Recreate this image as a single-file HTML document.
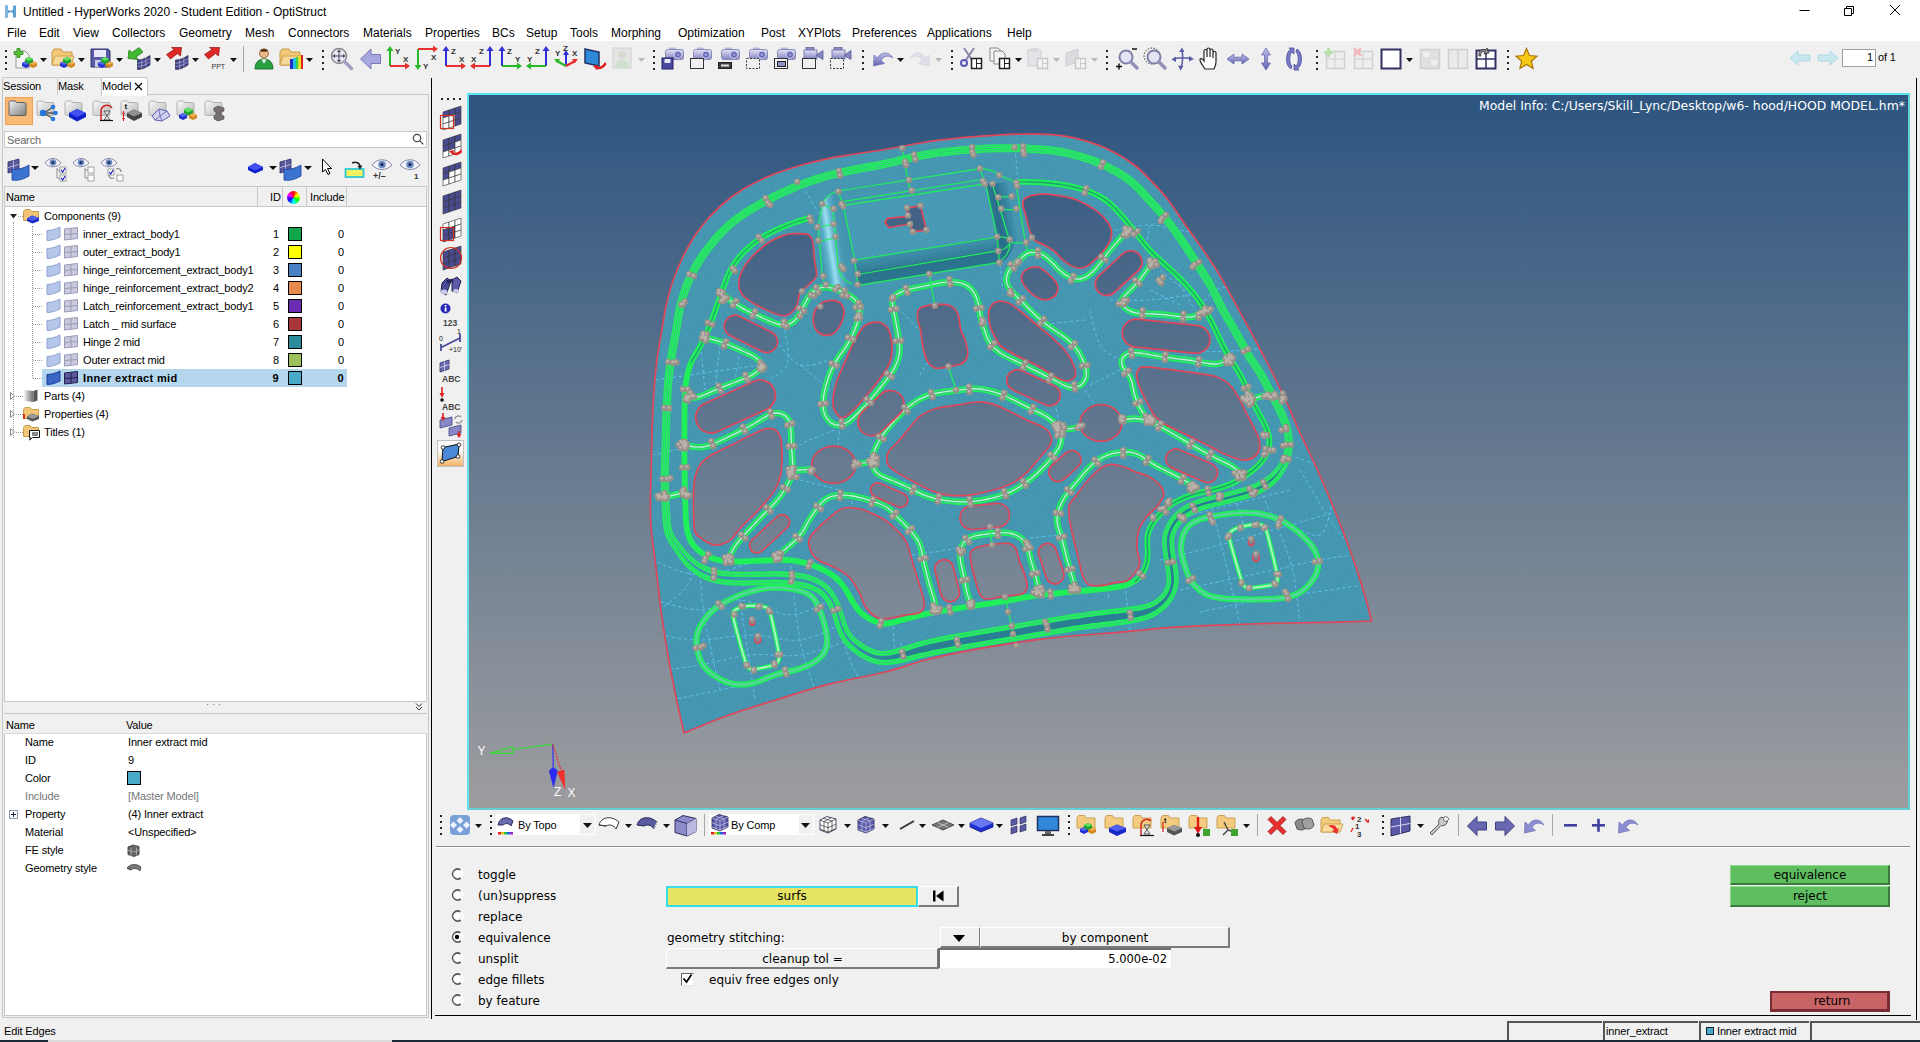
<!DOCTYPE html>
<html lang="en"><head><meta charset="utf-8"><title>Untitled - HyperWorks 2020 - Student Edition - OptiStruct</title>
<style>
*{box-sizing:border-box;margin:0;padding:0}
html,body{width:1920px;height:1042px;overflow:hidden;background:#f0f0f0}
body{position:relative;font-family:"Liberation Sans",sans-serif;font-size:12px;color:#000}
.a{position:absolute}
.t{position:absolute;white-space:pre;line-height:1}
.ui{font-size:12px}
.tk{font-size:11px;letter-spacing:-0.15px}
.hm{font-family:"DejaVu Sans","Liberation Sans",sans-serif;font-size:12px}
svg{position:absolute;overflow:visible}
.btn3d{position:absolute;background:#f0f0f0;border-top:1px solid #fff;border-left:1px solid #fff;border-right:2px solid #7a7a7a;border-bottom:2px solid #7a7a7a;text-align:center}
</style></head><body>
<!-- title bar + menu -->
<div class="a" style="left:0;top:0;width:1920px;height:41px;background:#fff"></div>
<svg style="left:4px;top:5px" width="13" height="13" viewBox="0 0 13 13"><path d="M1 0.5h3v4.2l2.5 1.3 2.5-1.3V0.5h3v12h-3V8.3L6.5 7 4 8.3v4.2H1z" fill="#5f9fd0"/><path d="M1 0.5h3v12H1z" fill="#7db5dd"/></svg>
<div class="t ui" style="left:23px;top:6px">Untitled - HyperWorks 2020 - Student Edition - OptiStruct</div>
<svg style="left:1780px;top:0" width="140" height="22" viewBox="0 0 140 22" fill="none" stroke="#000" stroke-width="1"><path d="M19.5 10.5h10"/><path d="M64.500 8.5h7v7h-7z"/><path d="M66.500 8.500v-2h7v7h-2"/><path d="M110 5l10 10M120 5l-10 10"/></svg>
<div class="t ui" style="left:7px;top:27px">File</div>
<div class="t ui" style="left:39px;top:27px">Edit</div>
<div class="t ui" style="left:73px;top:27px">View</div>
<div class="t ui" style="left:112px;top:27px">Collectors</div>
<div class="t ui" style="left:179px;top:27px">Geometry</div>
<div class="t ui" style="left:245px;top:27px">Mesh</div>
<div class="t ui" style="left:288px;top:27px">Connectors</div>
<div class="t ui" style="left:363px;top:27px">Materials</div>
<div class="t ui" style="left:425px;top:27px">Properties</div>
<div class="t ui" style="left:492px;top:27px">BCs</div>
<div class="t ui" style="left:526px;top:27px">Setup</div>
<div class="t ui" style="left:570px;top:27px">Tools</div>
<div class="t ui" style="left:611px;top:27px">Morphing</div>
<div class="t ui" style="left:678px;top:27px">Optimization</div>
<div class="t ui" style="left:761px;top:27px">Post</div>
<div class="t ui" style="left:798px;top:27px">XYPlots</div>
<div class="t ui" style="left:852px;top:27px">Preferences</div>
<div class="t ui" style="left:927px;top:27px">Applications</div>
<div class="t ui" style="left:1007px;top:27px">Help</div>
<!-- main toolbar -->
<svg style="left:0;top:0" width="0" height="0"><defs><linearGradient id="camg" x1="0" y1="0" x2="0" y2="1"><stop offset="0" stop-color="#e4e4f6"/><stop offset="1" stop-color="#8080c0"/></linearGradient><linearGradient id="undog" x1="0" y1="0" x2="0" y2="1"><stop offset="0" stop-color="#c0c0ec"/><stop offset="1" stop-color="#6464b0"/></linearGradient></defs></svg>
<svg style="left:5px;top:50px" width="2" height="24" viewBox="0 0 2 24"><rect x="0" y="0" width="2" height="2" fill="#222"/><rect x="0" y="6" width="2" height="2" fill="#222"/><rect x="0" y="12" width="2" height="2" fill="#222"/><rect x="0" y="18" width="2" height="2" fill="#222"/></svg>
<svg style="left:13px;top:47px" width="24" height="24" viewBox="0 0 24 24"><path d="M3 4h9l4 4v13H3z" fill="#f4f4f4" stroke="#999" stroke-width="1"/><path d="M4 1.500h3v3h3v3H7v3H4v-3H1v-3h3z" fill="#58c038" stroke="#2a8a18" stroke-width="0.800"/><path d="M9 16l4-2 4 2v3l-4 2-4-2z" fill="#2030d0"/><path d="M9 16l4-2 4 2-4 2z" fill="#5868f0"/><path d="M16 16l4-2 4 2v3l-4 2-4-2z" fill="#d08820"/><path d="M16 16l4-2 4 2-4 2z" fill="#f0b050"/><path d="M12 12l4-2 4 2v3l-4 2-4-2z" fill="#20a030"/><path d="M12 12l4-2 4 2-4 2z" fill="#60e060"/></svg>
<svg style="left:40px;top:58px" width="7" height="4" viewBox="0 0 7 4"><path d="M0 0h7L3.500 4z" fill="#111"/></svg>
<svg style="left:51px;top:47px" width="24" height="24" viewBox="0 0 24 24"><path d="M1 5l2-3h7l2 3h9v13H1z" fill="#f2c878" stroke="#c89848" stroke-width="1"/><path d="M1 18l3-9h19l-3 9z" fill="#f8d898" stroke="#c89848" stroke-width="0.800"/><path d="M9 16l4-2 4 2v3l-4 2-4-2z" fill="#2030d0"/><path d="M9 16l4-2 4 2-4 2z" fill="#5868f0"/><path d="M16 16l4-2 4 2v3l-4 2-4-2z" fill="#d08820"/><path d="M16 16l4-2 4 2-4 2z" fill="#f0b050"/><path d="M12 12l4-2 4 2v3l-4 2-4-2z" fill="#20a030"/><path d="M12 12l4-2 4 2-4 2z" fill="#60e060"/></svg>
<svg style="left:78px;top:58px" width="7" height="4" viewBox="0 0 7 4"><path d="M0 0h7L3.500 4z" fill="#111"/></svg>
<svg style="left:89px;top:47px" width="24" height="24" viewBox="0 0 24 24"><path d="M2 2h17l2 2v16H2z" fill="#5a5aaa" stroke="#30306a" stroke-width="1"/><rect x="5" y="3" width="12" height="7" fill="#e8e8f8"/><rect x="6" y="13" width="10" height="7" fill="#c8c8e0"/><path d="M9 16l4-2 4 2v3l-4 2-4-2z" fill="#2030d0"/><path d="M9 16l4-2 4 2-4 2z" fill="#5868f0"/><path d="M16 16l4-2 4 2v3l-4 2-4-2z" fill="#d08820"/><path d="M16 16l4-2 4 2-4 2z" fill="#f0b050"/><path d="M12 12l4-2 4 2v3l-4 2-4-2z" fill="#20a030"/><path d="M12 12l4-2 4 2-4 2z" fill="#60e060"/></svg>
<svg style="left:116px;top:58px" width="7" height="4" viewBox="0 0 7 4"><path d="M0 0h7L3.500 4z" fill="#111"/></svg>
<svg style="left:127px;top:47px" width="24" height="24" viewBox="0 0 24 24"><path d="M1 11.500L2 3l3 2.500 7-5 4 4.500-7 5 2.500 2.500z" fill="#40b830" stroke="#187010" stroke-width="0.700"/><path d="M10.500 13c4 0 8-1.500 12.500-4.500v9.500c-4.500 3-8.500 4.500-12.500 4.500z" fill="#44448a" stroke="#22224a" stroke-width="0.700"/><path d="M10.500 16.200c4 0 8-1.500 12.500-4.500M10.500 19.400c4 0 8-1.500 12.500-4.500M14.700 12.600v9.500M18.900 11v9.500" stroke="#b4b4dc" stroke-width="0.700" fill="none"/></svg>
<svg style="left:154px;top:58px" width="7" height="4" viewBox="0 0 7 4"><path d="M0 0h7L3.500 4z" fill="#111"/></svg>
<svg style="left:165px;top:47px" width="24" height="24" viewBox="0 0 24 24"><path d="M16.500 0.500L15.500 9l-3-2.500-7 5.500-4-4.500 7.500-5-2.500-2z" fill="#e02828" stroke="#901010" stroke-width="0.700"/><path d="M10.500 13c4 0 8-1.500 12.500-4.500v9.500c-4.500 3-8.500 4.500-12.500 4.500z" fill="#44448a" stroke="#22224a" stroke-width="0.700"/><path d="M10.500 16.200c4 0 8-1.500 12.500-4.500M10.500 19.400c4 0 8-1.500 12.500-4.500M14.700 12.600v9.500M18.900 11v9.500" stroke="#b4b4dc" stroke-width="0.700" fill="none"/></svg>
<svg style="left:192px;top:58px" width="7" height="4" viewBox="0 0 7 4"><path d="M0 0h7L3.500 4z" fill="#111"/></svg>
<svg style="left:203px;top:47px" width="24" height="24" viewBox="0 0 24 24"><path d="M16.500 0.500L15.500 9l-3-2.500-7 5.500-4-4.500 7.500-5-2.500-2z" fill="#e02828" stroke="#901010" stroke-width="0.700"/><text x="8.500" y="22" font-family="Liberation Sans,sans-serif" font-size="7" fill="#333">PPT</text></svg>
<svg style="left:230px;top:58px" width="7" height="4" viewBox="0 0 7 4"><path d="M0 0h7L3.500 4z" fill="#111"/></svg>
<div class="a" style="left:243px;top:46px;width:1px;height:26px;background:#a8a8a8"></div>
<svg style="left:252px;top:47px" width="24" height="24" viewBox="0 0 24 24"><circle cx="12" cy="6.500" r="4.500" fill="#e8b888" stroke="#7a4a20" stroke-width="0.800"/><path d="M8 4c1-3 7-3 8 0-2 1-6 1-8 0z" fill="#5a3010"/><path d="M3 22c0-7 4-10 9-10s9 3 9 10z" fill="#28a040" stroke="#106020" stroke-width="0.800"/><path d="M9.500 12.500l2.500 4 2.500-4z" fill="#fff"/></svg>
<svg style="left:279px;top:47px" width="24" height="24" viewBox="0 0 24 24"><path d="M1 5l2-3h7l2 3h9v13H1z" fill="#f2c878" stroke="#c89848" stroke-width="1"/><path d="M1 18l3-9h19l-3 9z" fill="#f8d898" stroke="#c89848" stroke-width="0.800"/><rect x="11" y="12" width="3" height="10" fill="#2030d0"/><rect x="14" y="11" width="3" height="11" fill="#20c0e0"/><rect x="17" y="10" width="2.500" height="12" fill="#40d040"/><rect x="19.500" y="9" width="2.500" height="13" fill="#f0e020"/><rect x="22" y="8" width="2" height="14" fill="#e02020"/></svg>
<svg style="left:306px;top:58px" width="7" height="4" viewBox="0 0 7 4"><path d="M0 0h7L3.500 4z" fill="#111"/></svg>
<svg style="left:322px;top:50px" width="2" height="24" viewBox="0 0 2 24"><rect x="0" y="0" width="2" height="2" fill="#222"/><rect x="0" y="6" width="2" height="2" fill="#222"/><rect x="0" y="12" width="2" height="2" fill="#222"/><rect x="0" y="18" width="2" height="2" fill="#222"/></svg>
<svg style="left:330px;top:47px" width="24" height="24" viewBox="0 0 24 24"><circle cx="9" cy="9" r="7.500" fill="#e8e8f4" stroke="#888" stroke-width="1.500"/><path d="M14.500 14.500l7 7" stroke="#a0a0c0" stroke-width="3.500" stroke-linecap="round"/><path d="M9 3.500v11M3.500 9h11" stroke="#445" stroke-width="1"/><path d="M9 2.500l-2 2.500h4zM9 15.500l-2-2.500h4zM2.500 9l2.500-2v4zM15.500 9l-2.500-2v4z" fill="#445"/></svg>
<svg style="left:359px;top:47px" width="24" height="24" viewBox="0 0 24 24"><path d="M1.500 12L12 2v5.500h9.500v9H12V22z" fill="#a8a8e0" stroke="#7878b8" stroke-width="1"/></svg>
<svg style="left:386px;top:46px" width="24" height="25" viewBox="0 0 24 25"><path d="M4 20V4" stroke="#28b828" stroke-width="2"/><path d="M4 0l-3.500 5h7z" fill="#28b828"/><path d="M4 20h16" stroke="#e83030" stroke-width="2"/><path d="M24 20l-5-3.500v7z" fill="#e83030"/><text x="9" y="8" font-family="Liberation Sans,sans-serif" font-size="8" font-weight="bold" fill="#333">Y</text><text x="17" y="16" font-family="Liberation Sans,sans-serif" font-size="8" font-weight="bold" fill="#333">X</text></svg>
<svg style="left:414px;top:46px" width="24" height="25" viewBox="0 0 24 25"><path d="M4 3V19" stroke="#28b828" stroke-width="2"/><path d="M4 24l-3.500-5h7z" fill="#28b828"/><path d="M4 3h16" stroke="#e83030" stroke-width="2"/><path d="M24 3l-5-3.500v7z" fill="#e83030"/><text x="9" y="23" font-family="Liberation Sans,sans-serif" font-size="8" font-weight="bold" fill="#333">Y</text><text x="17" y="14" font-family="Liberation Sans,sans-serif" font-size="8" font-weight="bold" fill="#333">X</text></svg>
<svg style="left:442px;top:46px" width="24" height="25" viewBox="0 0 24 25"><path d="M4 20V4" stroke="#3030d8" stroke-width="2"/><path d="M4 0l-3.500 5h7z" fill="#3030d8"/><path d="M4 20h16" stroke="#e83030" stroke-width="2"/><path d="M24 20l-5-3.500v7z" fill="#e83030"/><text x="9" y="8" font-family="Liberation Sans,sans-serif" font-size="8" font-weight="bold" fill="#333">Z</text><text x="17" y="16" font-family="Liberation Sans,sans-serif" font-size="8" font-weight="bold" fill="#333">X</text></svg>
<svg style="left:470px;top:46px" width="24" height="25" viewBox="0 0 24 25"><path d="M20 20V4" stroke="#3030d8" stroke-width="2"/><path d="M20 0l-3.500 5h7z" fill="#3030d8"/><path d="M20 20H4" stroke="#e83030" stroke-width="2"/><path d="M0 20l5-3.500v7z" fill="#e83030"/><text x="9" y="8" font-family="Liberation Sans,sans-serif" font-size="8" font-weight="bold" fill="#333">Z</text><text x="1" y="16" font-family="Liberation Sans,sans-serif" font-size="8" font-weight="bold" fill="#333">X</text></svg>
<svg style="left:498px;top:46px" width="24" height="25" viewBox="0 0 24 25"><path d="M4 20V4" stroke="#3030d8" stroke-width="2"/><path d="M4 0l-3.500 5h7z" fill="#3030d8"/><path d="M4 20h16" stroke="#28b828" stroke-width="2"/><path d="M24 20l-5-3.500v7z" fill="#28b828"/><text x="9" y="8" font-family="Liberation Sans,sans-serif" font-size="8" font-weight="bold" fill="#333">Z</text><text x="17" y="16" font-family="Liberation Sans,sans-serif" font-size="8" font-weight="bold" fill="#333">Y</text></svg>
<svg style="left:526px;top:46px" width="24" height="25" viewBox="0 0 24 25"><path d="M20 20V4" stroke="#3030d8" stroke-width="2"/><path d="M20 0l-3.500 5h7z" fill="#3030d8"/><path d="M20 20H4" stroke="#28b828" stroke-width="2"/><path d="M0 20l5-3.500v7z" fill="#28b828"/><text x="9" y="8" font-family="Liberation Sans,sans-serif" font-size="8" font-weight="bold" fill="#333">Z</text><text x="1" y="16" font-family="Liberation Sans,sans-serif" font-size="8" font-weight="bold" fill="#333">Y</text></svg>
<svg style="left:554px;top:46px" width="24" height="25" viewBox="0 0 24 25"><path d="M12 20V8" stroke="#3030d8" stroke-width="2"/><path d="M12 4l-3 5h6z" fill="#3030d8"/><path d="M12 20L3 15" stroke="#28b828" stroke-width="2.500"/><path d="M0 13l6 0-2.500 4.500z" fill="#28b828"/><path d="M12 20l9-5" stroke="#e83030" stroke-width="2.500"/><path d="M24 13l-6 0 2.500 4.500z" fill="#e83030"/><text x="1" y="10" font-family="Liberation Sans,sans-serif" font-size="8" font-weight="bold" fill="#333">Y</text><text x="9" y="5" font-family="Liberation Sans,sans-serif" font-size="8" font-weight="bold" fill="#333">Z</text><text x="18" y="10" font-family="Liberation Sans,sans-serif" font-size="8" font-weight="bold" fill="#333">X</text></svg>
<svg style="left:583px;top:47px" width="24" height="24" viewBox="0 0 24 24"><path d="M2 2l14 3v14L2 16z" fill="#3088d8" stroke="#203060" stroke-width="1.500"/><path d="M12 20c4 1 8-1 10-5l1.500 2c-2 4-6 6-10.500 5z" fill="#e01818"/><path d="M10 19l5-1-1 5z" fill="#e01818"/></svg>
<svg style="left:611px;top:47px" width="24" height="24" viewBox="0 0 24 24"><rect x="2" y="1" width="18" height="20" fill="#e4e4e4" stroke="#d0d0d0"/><circle cx="11" cy="8" r="3.500" fill="#d8d8d0"/><path d="M4 21c0-6 3-8 7-8s7 2 7 8z" fill="#cfe0cf"/></svg>
<svg style="left:638px;top:58px" width="7" height="4" viewBox="0 0 7 4"><path d="M0 0h7L3.500 4z" fill="#b8b8b8"/></svg>
<svg style="left:653px;top:50px" width="2" height="24" viewBox="0 0 2 24"><rect x="0" y="0" width="2" height="2" fill="#222"/><rect x="0" y="6" width="2" height="2" fill="#222"/><rect x="0" y="12" width="2" height="2" fill="#222"/><rect x="0" y="18" width="2" height="2" fill="#222"/></svg>
<svg style="left:661px;top:47px" width="24" height="24" viewBox="0 0 24 24"><rect x="8" y="0.500" width="7" height="3" rx="1" fill="#b8b8dc"/><rect x="4.500" y="2.500" width="18" height="10" rx="2" fill="url(#camg)" stroke="#7878b0" stroke-width="0.800"/><circle cx="17" cy="7.800" r="3.600" fill="#6a6ab4" stroke="#c4c4e6" stroke-width="1.200"/><circle cx="17" cy="7.800" r="1.400" fill="#9c9cd8"/><rect x="1" y="11" width="11" height="11" fill="#4848a0" stroke="#202060"/><rect x="3.500" y="12" width="6" height="4" fill="#e8e8f8"/></svg>
<svg style="left:689px;top:47px" width="24" height="24" viewBox="0 0 24 24"><rect x="8" y="0.500" width="7" height="3" rx="1" fill="#b8b8dc"/><rect x="4.500" y="2.500" width="18" height="10" rx="2" fill="url(#camg)" stroke="#7878b0" stroke-width="0.800"/><circle cx="17" cy="7.800" r="3.600" fill="#6a6ab4" stroke="#c4c4e6" stroke-width="1.200"/><circle cx="17" cy="7.800" r="1.400" fill="#9c9cd8"/><rect x="1.500" y="11.500" width="13" height="10" fill="#f0f0f0" stroke="#333" stroke-width="1"/></svg>
<svg style="left:717px;top:47px" width="24" height="24" viewBox="0 0 24 24"><rect x="8" y="0.500" width="7" height="3" rx="1" fill="#b8b8dc"/><rect x="4.500" y="2.500" width="18" height="10" rx="2" fill="url(#camg)" stroke="#7878b0" stroke-width="0.800"/><circle cx="17" cy="7.800" r="3.600" fill="#6a6ab4" stroke="#c4c4e6" stroke-width="1.200"/><circle cx="17" cy="7.800" r="1.400" fill="#9c9cd8"/><rect x="1.500" y="15.500" width="13" height="6" fill="#404040" stroke="#222" stroke-width="1"/><rect x="4" y="17.500" width="8" height="2" fill="#e0e0e0"/></svg>
<svg style="left:745px;top:47px" width="24" height="24" viewBox="0 0 24 24"><rect x="8" y="0.500" width="7" height="3" rx="1" fill="#b8b8dc"/><rect x="4.500" y="2.500" width="18" height="10" rx="2" fill="url(#camg)" stroke="#7878b0" stroke-width="0.800"/><circle cx="17" cy="7.800" r="3.600" fill="#6a6ab4" stroke="#c4c4e6" stroke-width="1.200"/><circle cx="17" cy="7.800" r="1.400" fill="#9c9cd8"/><rect x="1.500" y="11.500" width="13" height="10" fill="#f0f0f0" stroke="#333" stroke-width="1" stroke-dasharray="2 1.500"/></svg>
<svg style="left:773px;top:47px" width="24" height="24" viewBox="0 0 24 24"><rect x="8" y="0.500" width="7" height="3" rx="1" fill="#b8b8dc"/><rect x="4.500" y="2.500" width="18" height="10" rx="2" fill="url(#camg)" stroke="#7878b0" stroke-width="0.800"/><circle cx="17" cy="7.800" r="3.600" fill="#6a6ab4" stroke="#c4c4e6" stroke-width="1.200"/><circle cx="17" cy="7.800" r="1.400" fill="#9c9cd8"/><rect x="1.500" y="11.500" width="13" height="10" fill="#f0f0f0" stroke="#333" stroke-width="1"/><rect x="4.500" y="14.500" width="8" height="5" fill="#9090c8" stroke="#222"/></svg>
<svg style="left:801px;top:47px" width="24" height="24" viewBox="0 0 24 24"><rect x="5" y="0.500" width="8" height="3" fill="#8c8cc4" stroke="#5c5c98" stroke-width="0.700"/><rect x="3" y="3" width="13" height="9" fill="url(#camg)" stroke="#6868a8" stroke-width="0.800"/><path d="M16 7.500l6-4v9L16 9z" fill="#8484c0" stroke="#5c5c98" stroke-width="0.800"/><rect x="1.500" y="11.500" width="13" height="10" fill="#f0f0f0" stroke="#333" stroke-width="1"/></svg>
<svg style="left:829px;top:47px" width="24" height="24" viewBox="0 0 24 24"><rect x="5" y="0.500" width="8" height="3" fill="#8c8cc4" stroke="#5c5c98" stroke-width="0.700"/><rect x="3" y="3" width="13" height="9" fill="url(#camg)" stroke="#6868a8" stroke-width="0.800"/><path d="M16 7.500l6-4v9L16 9z" fill="#8484c0" stroke="#5c5c98" stroke-width="0.800"/><rect x="1.500" y="11.500" width="13" height="10" fill="#f0f0f0" stroke="#333" stroke-width="1" stroke-dasharray="2 1.500"/></svg>
<svg style="left:862px;top:50px" width="2" height="24" viewBox="0 0 2 24"><rect x="0" y="0" width="2" height="2" fill="#222"/><rect x="0" y="6" width="2" height="2" fill="#222"/><rect x="0" y="12" width="2" height="2" fill="#222"/><rect x="0" y="18" width="2" height="2" fill="#222"/></svg>
<svg style="left:871px;top:47px" width="24" height="24" viewBox="0 0 24 24"><path d="M2.500 19L3 8l3.500 3C10 4.500 18 4 22 11c-4-3-9.500-2.500-12 2.500l3.500 3z" fill="url(#undog)" stroke="#6c6cb4" stroke-width="0.700"/></svg>
<svg style="left:897px;top:58px" width="7" height="4" viewBox="0 0 7 4"><path d="M0 0h7L3.500 4z" fill="#111"/></svg>
<svg style="left:908px;top:47px" width="24" height="24" viewBox="0 0 24 24"><path d="M21.500 19L21 8l-3.500 3C14 4.500 6 4 2 11c4-3 9.500-2.500 12 2.500l-3.500 3z" fill="#dedee8" stroke="#d4d4dc" stroke-width="0.700"/></svg>
<svg style="left:935px;top:58px" width="7" height="4" viewBox="0 0 7 4"><path d="M0 0h7L3.500 4z" fill="#b8b8b8"/></svg>
<svg style="left:951px;top:50px" width="2" height="24" viewBox="0 0 2 24"><rect x="0" y="0" width="2" height="2" fill="#222"/><rect x="0" y="6" width="2" height="2" fill="#222"/><rect x="0" y="12" width="2" height="2" fill="#222"/><rect x="0" y="18" width="2" height="2" fill="#222"/></svg>
<svg style="left:960px;top:47px" width="24" height="24" viewBox="0 0 24 24"><path d="M4 1l8 12M14 1L6 13" stroke="#8888a8" stroke-width="2"/><circle cx="4" cy="16" r="3" fill="none" stroke="#5858b8" stroke-width="2"/><circle cx="11" cy="17" r="0" /><rect x="11.500" y="11.500" width="10" height="10" fill="#fff" stroke="#222" stroke-width="1.500"/><path d="M16.500 12v9M16.500 16.500h5" stroke="#222" stroke-width="1"/></svg>
<svg style="left:988px;top:47px" width="24" height="24" viewBox="0 0 24 24"><path d="M2 1h8l3 3v10H2z" fill="#f4f4f4" stroke="#888"/><path d="M6 4h8l3 3v10H6z" fill="#f4f4f4" stroke="#888"/><rect x="11.500" y="11.500" width="10" height="10" fill="#fff" stroke="#222" stroke-width="1.500"/><path d="M16.500 12v9M16.500 16.500h5" stroke="#222" stroke-width="1"/></svg>
<svg style="left:1015px;top:58px" width="7" height="4" viewBox="0 0 7 4"><path d="M0 0h7L3.500 4z" fill="#111"/></svg>
<svg style="left:1026px;top:47px" width="24" height="24" viewBox="0 0 24 24"><rect x="2" y="3" width="13" height="16" fill="#e4e4e8" stroke="#d0d0d4"/><rect x="5" y="1" width="7" height="4" fill="#d8d8dc"/><rect x="11.500" y="11.500" width="10" height="10" fill="#f4f4f4" stroke="#c8c8c8" stroke-width="1.500"/><path d="M16.500 12v9M16.500 16.500h5" stroke="#c8c8c8" stroke-width="1"/></svg>
<svg style="left:1053px;top:58px" width="7" height="4" viewBox="0 0 7 4"><path d="M0 0h7L3.500 4z" fill="#b8b8b8"/></svg>
<svg style="left:1064px;top:47px" width="24" height="24" viewBox="0 0 24 24"><path d="M2 6l12-4v13L2 19z" fill="#dcdce0" stroke="#d0d0d4"/><rect x="11.500" y="11.500" width="10" height="10" fill="#f4f4f4" stroke="#c8c8c8" stroke-width="1.500"/><path d="M16.500 12v9M16.500 16.500h5" stroke="#c8c8c8" stroke-width="1"/></svg>
<svg style="left:1091px;top:58px" width="7" height="4" viewBox="0 0 7 4"><path d="M0 0h7L3.500 4z" fill="#b8b8b8"/></svg>
<svg style="left:1106px;top:50px" width="2" height="24" viewBox="0 0 2 24"><rect x="0" y="0" width="2" height="2" fill="#222"/><rect x="0" y="6" width="2" height="2" fill="#222"/><rect x="0" y="12" width="2" height="2" fill="#222"/><rect x="0" y="18" width="2" height="2" fill="#222"/></svg>
<svg style="left:1115px;top:47px" width="24" height="24" viewBox="0 0 24 24"><circle cx="11" cy="10" r="6.500" fill="#e4e4f4" stroke="#8080a8" stroke-width="2"/><path d="M16 15l6 6" stroke="#9090b8" stroke-width="3.500" stroke-linecap="round"/><path d="M17 2h5" stroke="#111" stroke-width="1.500"/><path d="M1 19.500h6M4 16.500v6" stroke="#111" stroke-width="1.500"/></svg>
<svg style="left:1143px;top:47px" width="24" height="24" viewBox="0 0 24 24"><circle cx="9" cy="9" r="8" fill="none" stroke="#333" stroke-width="1" stroke-dasharray="1.500 1.500"/><circle cx="11" cy="10" r="6.500" fill="#e4e4f4" stroke="#8080a8" stroke-width="2"/><path d="M16 15l6 6" stroke="#9090b8" stroke-width="3.500" stroke-linecap="round"/></svg>
<svg style="left:1171px;top:47px" width="24" height="24" viewBox="0 0 24 24"><path d="M11 3c1 6 1 12-1 18M2 12c6-1.500 13-1.500 19 0" stroke="#5c5ca4" stroke-width="1.600" fill="none"/><path d="M11 0.500l-3 4.500h5.500zM9.500 23.500l-2.500-5 5.500 0.500zM0.500 12.500l4.500-3 0 5.500zM23 12l-5-3 0 5.500z" fill="#5c5ca4"/></svg>
<svg style="left:1199px;top:47px" width="24" height="24" viewBox="0 0 24 24"><path d="M6 22c-2-3-5-7-5-9s2-2 4 1V4c0-2 3-2 3 0v6V2.500c0-2 3-2 3 0V10 3.500c0-2 3-2 3 0V11 6c0-2 3-2 3 0v9c0 3-1 5-2 7z" fill="#fff" stroke="#222" stroke-width="1.200"/></svg>
<svg style="left:1226px;top:47px" width="24" height="24" viewBox="0 0 24 24"><path d="M1 12l7-5v3.200h8V7l7 5-7 5v-3.200H8V17z" fill="url(#undog)" stroke="#5c5ca8" stroke-width="0.700"/></svg>
<svg style="left:1254px;top:47px" width="24" height="24" viewBox="0 0 24 24"><path d="M12 1L7.500 8h3v8h-3l4.500 7 4.500-7h-3V8h3z" fill="url(#undog)" stroke="#5c5ca8" stroke-width="0.700"/></svg>
<svg style="left:1282px;top:47px" width="24" height="24" viewBox="0 0 24 24"><path d="M9 2C3 5 3 19 9 22l1-3c-3-2-3-12 0-14l2 2V1H7z" fill="#7878c8" stroke="#5050a0" stroke-width="0.800"/><path d="M15 22c6-3 6-17 0-20l-1 3c3 2 3 12 0 14l-2-2v6h5z" fill="#7878c8" stroke="#5050a0" stroke-width="0.800"/></svg>
<svg style="left:1316px;top:50px" width="2" height="24" viewBox="0 0 2 24"><rect x="0" y="0" width="2" height="2" fill="#222"/><rect x="0" y="6" width="2" height="2" fill="#222"/><rect x="0" y="12" width="2" height="2" fill="#222"/><rect x="0" y="18" width="2" height="2" fill="#222"/></svg>
<svg style="left:1323px;top:47px" width="24" height="24" viewBox="0 0 24 24"><rect x="3.500" y="4.500" width="18" height="17" fill="#eee" stroke="#d0d0d0" stroke-width="1.500"/><path d="M12 5v16M4 12h17" stroke="#d0d0d0" stroke-width="1"/><path d="M4 1h3v3h3v3H7v3H4V7H1V4h3z" fill="#b8e0a8"/></svg>
<svg style="left:1351px;top:47px" width="24" height="24" viewBox="0 0 24 24"><rect x="3.500" y="4.500" width="18" height="17" fill="#eee" stroke="#d0d0d0" stroke-width="1.500"/><path d="M12 5v16M4 12h17" stroke="#d0d0d0" stroke-width="1"/><path d="M2 2l2-1.500 2.500 2.500L9 0.500 11 2 8.500 5 11 8 9 9.500 6.500 7 4 9.500 2 8l2.500-3z" fill="#f0b8b8"/></svg>
<svg style="left:1379px;top:47px" width="24" height="24" viewBox="0 0 24 24"><rect x="2.500" y="2.500" width="19" height="19" fill="#fff" stroke="#303060" stroke-width="2"/></svg>
<svg style="left:1406px;top:58px" width="7" height="4" viewBox="0 0 7 4"><path d="M0 0h7L3.500 4z" fill="#111"/></svg>
<svg style="left:1418px;top:47px" width="24" height="24" viewBox="0 0 24 24"><rect x="2.500" y="2.500" width="19" height="19" fill="#e0e0e0" stroke="#d0d0d0" stroke-width="1.500"/><rect x="5" y="5" width="6" height="5" fill="#f0f0f0"/><rect x="13" y="13" width="6" height="5" fill="#f0f0f0"/></svg>
<svg style="left:1446px;top:47px" width="24" height="24" viewBox="0 0 24 24"><rect x="2.500" y="2.500" width="19" height="19" fill="#eaeaea" stroke="#d0d0d0" stroke-width="1.500"/><path d="M12 3v18" stroke="#d0d0d0" stroke-width="1.500"/></svg>
<svg style="left:1474px;top:47px" width="24" height="24" viewBox="0 0 24 24"><rect x="2.500" y="3.500" width="19" height="18" fill="#fff" stroke="#303060" stroke-width="2"/><path d="M12 4v17M3 12h18" stroke="#303060" stroke-width="1.500"/><path d="M5 9c-1-5 3-8 7-6l1-2 2 5-5 1 1-2c-2-1-5 0-4 4z" fill="#888" stroke="#333" stroke-width="0.800"/></svg>
<svg style="left:1507px;top:50px" width="2" height="24" viewBox="0 0 2 24"><rect x="0" y="0" width="2" height="2" fill="#222"/><rect x="0" y="6" width="2" height="2" fill="#222"/><rect x="0" y="12" width="2" height="2" fill="#222"/><rect x="0" y="18" width="2" height="2" fill="#222"/></svg>
<svg style="left:1515px;top:47px" width="24" height="24" viewBox="0 0 24 24"><path d="M11.500 1.500l3 7 7.500 0.700-5.700 5 1.800 7.300-6.600-4-6.600 4 1.800-7.300-5.700-5 7.500-0.700z" fill="#f8c818" stroke="#a87808" stroke-width="1.200"/></svg>
<svg style="left:1789px;top:49px" width="22" height="18" viewBox="0 0 22 18"><path d="M1 9l8-7v4h12v6H9v4z" fill="#c8e8f0" stroke="#b0d8e4" stroke-width="1"/></svg>
<svg style="left:1817px;top:49px" width="22" height="18" viewBox="0 0 22 18"><path d="M21 9l-8-7v4H1v6h12v4z" fill="#c8e8f0" stroke="#b0d8e4" stroke-width="1"/></svg>
<div class="a" style="left:1842px;top:49px;width:34px;height:18px;background:#fff;border:1px solid #a0a0a0"></div>
<div class="t tk" style="left:1843px;top:52px;width:30px;text-align:right">1</div>
<div class="t tk" style="left:1878px;top:52px">of 1</div>
<!-- left browser panel -->
<div class="a" style="left:2px;top:94px;width:427px;height:924px;border:1px solid #c8c8c8;background:#f0f0f0"></div>
<!-- tabs -->
<div class="a" style="left:2px;top:77px;width:56px;height:18px;border:1px solid #c8c8c8;border-bottom:none;border-radius:2px 2px 0 0;background:#f0f0f0"></div>
<div class="a" style="left:57px;top:77px;width:45px;height:18px;border:1px solid #c8c8c8;border-bottom:none;border-radius:2px 2px 0 0;background:#f0f0f0"></div>
<div class="a" style="left:101px;top:77px;width:47px;height:19px;border:1px solid #c8c8c8;border-bottom:none;border-radius:2px 2px 0 0;background:#fff"></div>
<div class="t tk" style="left:3px;top:81px">Session</div>
<div class="t tk" style="left:58px;top:81px">Mask</div>
<div class="t tk" style="left:102px;top:81px">Model</div>
<svg style="left:134px;top:82px" width="9" height="9" viewBox="0 0 9 9" stroke="#000" stroke-width="1.2"><path d="M1 1l7 7M8 1l-7 7"/></svg>
<!-- selected icon box -->
<div class="a" style="left:5px;top:97px;width:28px;height:28px;background:#f9ba78;border:1px solid #f0a050"></div>
<!-- search -->
<div class="a" style="left:4px;top:131px;width:423px;height:17px;background:#fff;border:1px solid #c8c8c8"></div>
<div class="t tk" style="left:7px;top:135px;color:#666">Search</div>
<svg style="left:412px;top:133px" width="12" height="12" viewBox="0 0 12 12" fill="none" stroke="#444" stroke-width="1.2"><circle cx="5" cy="5" r="3.7"/><path d="M7.800 7.800l3.500 3.500"/></svg>
<!-- tree header -->
<div class="a" style="left:4px;top:186px;width:423px;height:21px;background:#f0f0f0;border:1px solid #c8c8c8"></div>
<div class="a" style="left:257px;top:187px;width:1px;height:19px;background:#c8c8c8"></div>
<div class="a" style="left:282px;top:187px;width:1px;height:19px;background:#c8c8c8"></div>
<div class="a" style="left:306px;top:187px;width:1px;height:19px;background:#c8c8c8"></div>
<div class="a" style="left:346px;top:187px;width:1px;height:19px;background:#c8c8c8"></div>
<div class="t tk" style="left:6px;top:192px">Name</div>
<div class="t tk" style="left:270px;top:192px">ID</div>
<div class="t tk" style="left:310px;top:192px">Include</div>
<div class="a" style="left:287px;top:191px;width:13px;height:13px;border-radius:50%;background:conic-gradient(#f00,#ff0,#0f0,#0ff,#00f,#f0f,#f00)"></div>
<!-- tree body -->
<div class="a" style="left:4px;top:207px;width:423px;height:495px;background:#fff;border:1px solid #c8c8c8;border-top:none"></div>
<!-- browser icons -->
<svg style="left:0;top:0" width="0" height="0"><defs><linearGradient id="gf" x1="0" y1="0" x2="1" y2="1"><stop offset="0" stop-color="#f4f4f4"/><stop offset="1" stop-color="#7c7c7c"/></linearGradient><linearGradient id="gf2" x1="0" y1="0" x2="1" y2="1"><stop offset="0" stop-color="#fafafa"/><stop offset="1" stop-color="#b8b8b8"/></linearGradient></defs></svg>
<svg style="left:8px;top:99px" width="24" height="24" viewBox="0 0 24 24"><path d="M1 3.500q0-1.500 1.500-1.500h5l1 1.500h8q1.500 0 1.500 1.500v10q0 1.500-1.500 1.500h-14q-1.500 0-1.500-1.500z" fill="url(#gf)" stroke="#555" stroke-width="0.900"/></svg>
<svg style="left:36px;top:99px" width="24" height="24" viewBox="0 0 24 24"><path d="M1 3.500q0-1.500 1.500-1.500h5l1 1.500h8q1.500 0 1.500 1.500v10q0 1.500-1.500 1.500h-14q-1.500 0-1.500-1.500z" fill="url(#gf2)" stroke="#aaa" stroke-width="0.900"/><path d="M8 14l9-6M8 14l10 0M8 14l9 6" stroke="#222" stroke-width="1"/><circle cx="7" cy="14" r="3.200" fill="#2878e0"/><circle cx="17" cy="8" r="2.300" fill="#2878e0"/><circle cx="19.500" cy="14" r="2.300" fill="#2878e0"/><circle cx="17" cy="20" r="2.300" fill="#2878e0"/></svg>
<svg style="left:64px;top:99px" width="24" height="24" viewBox="0 0 24 24"><path d="M1 3.500q0-1.500 1.500-1.500h5l1 1.500h8q1.500 0 1.500 1.500v10q0 1.500-1.500 1.500h-14q-1.500 0-1.500-1.500z" fill="url(#gf2)" stroke="#aaa" stroke-width="0.900"/><path d="M5 14l8-4 9 4v4l-9 4.500-8-4.500z" fill="#1020c8"/><path d="M5 14l8-4 9 4-9 4z" fill="#4050f0"/></svg>
<svg style="left:92px;top:99px" width="24" height="24" viewBox="0 0 24 24"><path d="M1 3.500q0-1.500 1.500-1.500h5l1 1.500h8q1.500 0 1.500 1.500v10q0 1.500-1.500 1.500h-14q-1.500 0-1.500-1.500z" fill="url(#gf2)" stroke="#aaa" stroke-width="0.900"/><path d="M9 21V12a6 6 0 0 1 11-3" fill="none" stroke="#d02020" stroke-width="1.500"/><path d="M12 12h6l-3 4.500 3 4.500h-6l3-4.500z" fill="#e8e8e8" stroke="#444" stroke-width="0.800"/><path d="M8 21.500h13" stroke="#111" stroke-width="1.200"/></svg>
<svg style="left:120px;top:99px" width="24" height="24" viewBox="0 0 24 24"><path d="M1 3.500q0-1.500 1.500-1.500h5l1 1.500h8q1.500 0 1.500 1.500v10q0 1.500-1.500 1.500h-14q-1.500 0-1.500-1.500z" fill="url(#gf2)" stroke="#aaa" stroke-width="0.900"/><path d="M7 14l7-3.500 8 3.500v4l-8 4-7-4z" fill="#444"/><path d="M7 14l7-3.500 8 3.500-8 3.500z" fill="#909090"/><path d="M3.500 12v10" stroke="#d02020" stroke-width="1"/><path d="M2 15l1.500-2.500 1.500 2.500zM2 19l1.500 2.500 1.500-2.500z" fill="#d02020"/><text x="4.500" y="10" font-family="Liberation Sans,sans-serif" font-size="8" font-weight="bold" fill="#111">t</text></svg>
<svg style="left:148px;top:99px" width="24" height="24" viewBox="0 0 24 24"><path d="M1 3.500q0-1.500 1.500-1.500h5l1 1.500h8q1.500 0 1.500 1.500v10q0 1.500-1.500 1.500h-14q-1.500 0-1.500-1.500z" fill="url(#gf2)" stroke="#aaa" stroke-width="0.900"/><path d="M4 17l7-7 8 2 3 5-8 5-7-1z" fill="#d0d0f0" stroke="#6060b0" stroke-width="1"/><path d="M11 10l1 7 7-5M12 17l-5 4M12 17l2 5" stroke="#6060b0" stroke-width="0.800" fill="none"/></svg>
<svg style="left:176px;top:99px" width="24" height="24" viewBox="0 0 24 24"><path d="M1 3.500q0-1.500 1.500-1.500h5l1 1.500h8q1.500 0 1.500 1.500v10q0 1.500-1.500 1.500h-14q-1.500 0-1.500-1.500z" fill="url(#gf2)" stroke="#aaa" stroke-width="0.900"/><path d="M3 16l4-2 4 2v3l-4 2-4-2z" fill="#2030d0"/><path d="M3 16l4-2 4 2-4 2z" fill="#5868f0"/><path d="M13 16l4-2 4 2v3l-4 2-4-2z" fill="#d08820"/><path d="M13 16l4-2 4 2-4 2z" fill="#f0b050"/><path d="M8 11l4-2.500 5 2.500v3l-5 2.500-4-2.500z" fill="#20a030"/><path d="M8 11l4-2.500 5 2.500-5 2.500z" fill="#60e060"/></svg>
<svg style="left:204px;top:99px" width="24" height="24" viewBox="0 0 24 24"><path d="M1 3.500q0-1.500 1.500-1.500h5l1 1.500h8q1.500 0 1.500 1.500v10q0 1.500-1.500 1.500h-14q-1.500 0-1.500-1.500z" fill="url(#gf2)" stroke="#aaa" stroke-width="0.900"/><path d="M10 9l4-2 6 2v3l-3 1v3l3 1v3l-6 2-4-2v-3l2-1v-3l-2-1z" fill="#787070" stroke="#444" stroke-width="0.600"/></svg>
<svg style="left:7px;top:156px" width="26" height="26" viewBox="0 0 26 26"><path d="M1 6l11-3v11l-11 3z" fill="#5a5aa0" stroke="#2a2a60" stroke-width="0.800"/><path d="M1 11.500l11-3M6.500 4.500v11" stroke="#c8c8e8" stroke-width="0.800"/><path d="M5 13c5 1 10 0 17-4v11c-7 4-12 5-17 4z" fill="#3b74d0" stroke="#1d3f9a" stroke-width="0.800"/></svg>
<svg style="left:31px;top:166px" width="8" height="4" viewBox="0 0 8 4"><path d="M0 0h8L4 4z" fill="#111"/></svg>
<svg style="left:44px;top:156px" width="26" height="26" viewBox="0 0 26 26"><path d="M1 7c4-6 12-6 16 0-4 5-12 5-16 0z" fill="#f4f4fa" stroke="#8888a8" stroke-width="1"/><circle cx="9" cy="6.500" r="3.300" fill="#7090c8"/><circle cx="9" cy="6.500" r="1.500" fill="#203060"/><path d="M13 12v10M13 14h3M13 22h3" stroke="#888" stroke-width="0.900" fill="none"/><rect x="16" y="11" width="6" height="6" fill="#fff" stroke="#999" stroke-width="0.900"/><path d="M17.2 14l1.500 2 2.500-4" stroke="#1020c0" stroke-width="1.200" fill="none"/><rect x="16" y="19" width="6" height="6" fill="#fff" stroke="#999" stroke-width="0.900"/><path d="M17.2 22l1.500 2 2.500-4" stroke="#1020c0" stroke-width="1.200" fill="none"/></svg>
<svg style="left:72px;top:156px" width="26" height="26" viewBox="0 0 26 26"><path d="M1 7c4-6 12-6 16 0-4 5-12 5-16 0z" fill="#f4f4fa" stroke="#8888a8" stroke-width="1"/><circle cx="9" cy="6.500" r="3.300" fill="#7090c8"/><circle cx="9" cy="6.500" r="1.500" fill="#203060"/><path d="M13 12v10M13 14h3M13 22h3" stroke="#888" stroke-width="0.900" fill="none"/><rect x="16" y="11" width="6" height="6" fill="#fff" stroke="#999" stroke-width="0.900"/><rect x="16" y="19" width="6" height="6" fill="#fff" stroke="#999" stroke-width="0.900"/></svg>
<svg style="left:100px;top:156px" width="26" height="26" viewBox="0 0 26 26"><path d="M1 7c4-6 12-6 16 0-4 5-12 5-16 0z" fill="#f4f4fa" stroke="#8888a8" stroke-width="1"/><circle cx="9" cy="6.500" r="3.300" fill="#7090c8"/><circle cx="9" cy="6.500" r="1.500" fill="#203060"/><rect x="8" y="13" width="6" height="6" fill="#fff" stroke="#999" stroke-width="0.900"/><path d="M9.2 16l1.500 2 2.500-4" stroke="#1020c0" stroke-width="1.200" fill="none"/><rect x="17" y="19" width="6" height="6" fill="#fff" stroke="#999" stroke-width="0.900"/><path d="M16 13c3-1 5 0 5 3M14 22c-3 1-5 0-5-3" stroke="#888" stroke-width="1.300" fill="none"/></svg>
<svg style="left:247px;top:160px" width="18" height="14" viewBox="0 0 18 14"><path d="M1 7l7-4 8 4v3l-8 3.500-7-3.500z" fill="#1020c8"/><path d="M1 7l7-4 8 4-8 3.500z" fill="#4050f0"/></svg>
<svg style="left:269px;top:166px" width="8" height="4" viewBox="0 0 8 4"><path d="M0 0h8L4 4z" fill="#111"/></svg>
<svg style="left:279px;top:156px" width="26" height="26" viewBox="0 0 26 26"><path d="M1 6l11-3v11l-11 3z" fill="#5a5aa0" stroke="#2a2a60" stroke-width="0.800"/><path d="M1 11.500l11-3M6.500 4.500v11" stroke="#c8c8e8" stroke-width="0.800"/><path d="M5 13c5 1 10 0 17-4v11c-7 4-12 5-17 4z" fill="#3b74d0" stroke="#1d3f9a" stroke-width="0.800"/></svg>
<svg style="left:304px;top:166px" width="8" height="4" viewBox="0 0 8 4"><path d="M0 0h8L4 4z" fill="#111"/></svg>
<svg style="left:321px;top:158px" width="12" height="18" viewBox="0 0 12 18"><path d="M1.500 1v13l3-2.500 2.500 5 2-1-2.500-5h4z" fill="#fff" stroke="#000" stroke-width="1"/></svg>
<svg style="left:344px;top:160px" width="22" height="20" viewBox="0 0 22 20"><rect x="1.500" y="9" width="18" height="8" fill="#f4f060" stroke="#30c8d0" stroke-width="1.800"/><path d="M8 3c4-2 8 0 8 4" fill="none" stroke="#222" stroke-width="1.500"/><path d="M13.500 6l2.500 3.500 2.500-4z" fill="#222"/></svg>
<svg style="left:371px;top:157px" width="24" height="24" viewBox="0 0 24 24"><path d="M1 8c5-7 15-7 20 0-5 6-15 6-20 0z" fill="#f4f4fa" stroke="#8888a8" stroke-width="1"/><circle cx="11" cy="7.500" r="3.800" fill="#7090c8"/><circle cx="11" cy="7.500" r="1.700" fill="#203060"/><text x="2" y="22" font-family="Liberation Sans,sans-serif" font-size="9" font-weight="bold" fill="#333">+/–</text></svg>
<svg style="left:399px;top:157px" width="24" height="24" viewBox="0 0 24 24"><path d="M1 8c5-7 15-7 20 0-5 6-15 6-20 0z" fill="#f4f4fa" stroke="#8888a8" stroke-width="1"/><circle cx="11" cy="7.500" r="3.800" fill="#7090c8"/><circle cx="11" cy="7.500" r="1.700" fill="#203060"/><text x="15" y="22" font-family="Liberation Sans,sans-serif" font-size="8" font-weight="bold" fill="#333">1</text></svg>
<!-- tree rows -->
<div class="a" style="left:13px;top:222px;width:0;height:216px;border-left:1px dotted #9a9a9a"></div>
<div class="a" style="left:32px;top:226px;width:0;height:152px;border-left:1px dotted #9a9a9a"></div>
<svg style="left:10px;top:214px" width="7" height="5" viewBox="0 0 7 5"><path d="M0 0h7L3.500 4.500z" fill="#222"/></svg>
<div class="a" style="left:18px;top:216px;width:5px;height:0;border-top:1px dotted #9a9a9a"></div>
<svg style="left:23px;top:208px" width="18" height="16" viewBox="0 0 18 16"><path d="M0.500 3.500l1.500-2h5l1.500 2h7v9h-15z" fill="#f3c677" stroke="#c79a48" stroke-width="1"/><path d="M4 10.500l5-3 7 2.500v3l-6.500 2.500-5.500-2.500z" fill="#1a28c8"/><path d="M4 10.500l5-3 7 2.500-6.500 3z" fill="#4a5cf0"/></svg>
<div class="t tk" style="left:44px;top:211px">Components (9)</div>
<div class="a" style="left:33px;top:234px;width:9px;height:0;border-top:1px dotted #9a9a9a"></div>
<svg style="left:46px;top:226px" width="15" height="16" viewBox="0 0 15 16"><path d="M1 4.500c4 0 8-1 13-3.500v10c-5 2.500-9 3.500-13 3.500z" fill="#b4c6ea" stroke="#8fa4d4" stroke-width="1"/></svg>
<svg style="left:64px;top:227px" width="14" height="14" viewBox="0 0 14 14"><path d="M0.500 2l13-1.500v11L0.500 13z" fill="#cacade" stroke="#9a9ab8" stroke-width="1"/><path d="M7 1.200v11.500M0.500 7.500l13-1" stroke="#9a9ab8" stroke-width="1" fill="none"/></svg>
<div class="t tk" style="left:83px;top:229px;">inner_extract_body1</div>
<div class="t tk" style="left:259px;width:20px;text-align:right;top:229px;">1</div>
<div class="a" style="left:288px;top:227px;width:14px;height:14px;background:#11a64c;border:1px solid #000"></div>
<div class="t tk" style="left:324px;width:20px;text-align:right;top:229px;">0</div>
<div class="a" style="left:33px;top:252px;width:9px;height:0;border-top:1px dotted #9a9a9a"></div>
<svg style="left:46px;top:244px" width="15" height="16" viewBox="0 0 15 16"><path d="M1 4.500c4 0 8-1 13-3.500v10c-5 2.500-9 3.500-13 3.500z" fill="#b4c6ea" stroke="#8fa4d4" stroke-width="1"/></svg>
<svg style="left:64px;top:245px" width="14" height="14" viewBox="0 0 14 14"><path d="M0.500 2l13-1.500v11L0.500 13z" fill="#cacade" stroke="#9a9ab8" stroke-width="1"/><path d="M7 1.200v11.500M0.500 7.500l13-1" stroke="#9a9ab8" stroke-width="1" fill="none"/></svg>
<div class="t tk" style="left:83px;top:247px;">outer_extract_body1</div>
<div class="t tk" style="left:259px;width:20px;text-align:right;top:247px;">2</div>
<div class="a" style="left:288px;top:245px;width:14px;height:14px;background:#ffff00;border:1px solid #000"></div>
<div class="t tk" style="left:324px;width:20px;text-align:right;top:247px;">0</div>
<div class="a" style="left:33px;top:270px;width:9px;height:0;border-top:1px dotted #9a9a9a"></div>
<svg style="left:46px;top:262px" width="15" height="16" viewBox="0 0 15 16"><path d="M1 4.500c4 0 8-1 13-3.500v10c-5 2.500-9 3.500-13 3.500z" fill="#b4c6ea" stroke="#8fa4d4" stroke-width="1"/></svg>
<svg style="left:64px;top:263px" width="14" height="14" viewBox="0 0 14 14"><path d="M0.500 2l13-1.500v11L0.500 13z" fill="#cacade" stroke="#9a9ab8" stroke-width="1"/><path d="M7 1.200v11.500M0.500 7.500l13-1" stroke="#9a9ab8" stroke-width="1" fill="none"/></svg>
<div class="t tk" style="left:83px;top:265px;">hinge_reinforcement_extract_body1</div>
<div class="t tk" style="left:259px;width:20px;text-align:right;top:265px;">3</div>
<div class="a" style="left:288px;top:263px;width:14px;height:14px;background:#4a80c4;border:1px solid #000"></div>
<div class="t tk" style="left:324px;width:20px;text-align:right;top:265px;">0</div>
<div class="a" style="left:33px;top:288px;width:9px;height:0;border-top:1px dotted #9a9a9a"></div>
<svg style="left:46px;top:280px" width="15" height="16" viewBox="0 0 15 16"><path d="M1 4.500c4 0 8-1 13-3.500v10c-5 2.500-9 3.500-13 3.500z" fill="#b4c6ea" stroke="#8fa4d4" stroke-width="1"/></svg>
<svg style="left:64px;top:281px" width="14" height="14" viewBox="0 0 14 14"><path d="M0.500 2l13-1.500v11L0.500 13z" fill="#cacade" stroke="#9a9ab8" stroke-width="1"/><path d="M7 1.200v11.500M0.500 7.500l13-1" stroke="#9a9ab8" stroke-width="1" fill="none"/></svg>
<div class="t tk" style="left:83px;top:283px;">hinge_reinforcement_extract_body2</div>
<div class="t tk" style="left:259px;width:20px;text-align:right;top:283px;">4</div>
<div class="a" style="left:288px;top:281px;width:14px;height:14px;background:#e8884c;border:1px solid #000"></div>
<div class="t tk" style="left:324px;width:20px;text-align:right;top:283px;">0</div>
<div class="a" style="left:33px;top:306px;width:9px;height:0;border-top:1px dotted #9a9a9a"></div>
<svg style="left:46px;top:298px" width="15" height="16" viewBox="0 0 15 16"><path d="M1 4.500c4 0 8-1 13-3.500v10c-5 2.500-9 3.500-13 3.500z" fill="#b4c6ea" stroke="#8fa4d4" stroke-width="1"/></svg>
<svg style="left:64px;top:299px" width="14" height="14" viewBox="0 0 14 14"><path d="M0.500 2l13-1.500v11L0.500 13z" fill="#cacade" stroke="#9a9ab8" stroke-width="1"/><path d="M7 1.200v11.500M0.500 7.500l13-1" stroke="#9a9ab8" stroke-width="1" fill="none"/></svg>
<div class="t tk" style="left:83px;top:301px;">Latch_reinforcement_extract_body1</div>
<div class="t tk" style="left:259px;width:20px;text-align:right;top:301px;">5</div>
<div class="a" style="left:288px;top:299px;width:14px;height:14px;background:#6a2cb0;border:1px solid #000"></div>
<div class="t tk" style="left:324px;width:20px;text-align:right;top:301px;">0</div>
<div class="a" style="left:33px;top:324px;width:9px;height:0;border-top:1px dotted #9a9a9a"></div>
<svg style="left:46px;top:316px" width="15" height="16" viewBox="0 0 15 16"><path d="M1 4.500c4 0 8-1 13-3.500v10c-5 2.500-9 3.500-13 3.500z" fill="#b4c6ea" stroke="#8fa4d4" stroke-width="1"/></svg>
<svg style="left:64px;top:317px" width="14" height="14" viewBox="0 0 14 14"><path d="M0.500 2l13-1.500v11L0.500 13z" fill="#cacade" stroke="#9a9ab8" stroke-width="1"/><path d="M7 1.200v11.500M0.500 7.500l13-1" stroke="#9a9ab8" stroke-width="1" fill="none"/></svg>
<div class="t tk" style="left:83px;top:319px;">Latch _ mid surface</div>
<div class="t tk" style="left:259px;width:20px;text-align:right;top:319px;">6</div>
<div class="a" style="left:288px;top:317px;width:14px;height:14px;background:#a83838;border:1px solid #000"></div>
<div class="t tk" style="left:324px;width:20px;text-align:right;top:319px;">0</div>
<div class="a" style="left:33px;top:342px;width:9px;height:0;border-top:1px dotted #9a9a9a"></div>
<svg style="left:46px;top:334px" width="15" height="16" viewBox="0 0 15 16"><path d="M1 4.500c4 0 8-1 13-3.500v10c-5 2.500-9 3.500-13 3.500z" fill="#b4c6ea" stroke="#8fa4d4" stroke-width="1"/></svg>
<svg style="left:64px;top:335px" width="14" height="14" viewBox="0 0 14 14"><path d="M0.500 2l13-1.500v11L0.500 13z" fill="#cacade" stroke="#9a9ab8" stroke-width="1"/><path d="M7 1.200v11.500M0.500 7.500l13-1" stroke="#9a9ab8" stroke-width="1" fill="none"/></svg>
<div class="t tk" style="left:83px;top:337px;">Hinge 2 mid</div>
<div class="t tk" style="left:259px;width:20px;text-align:right;top:337px;">7</div>
<div class="a" style="left:288px;top:335px;width:14px;height:14px;background:#2a8b9b;border:1px solid #000"></div>
<div class="t tk" style="left:324px;width:20px;text-align:right;top:337px;">0</div>
<div class="a" style="left:33px;top:360px;width:9px;height:0;border-top:1px dotted #9a9a9a"></div>
<svg style="left:46px;top:352px" width="15" height="16" viewBox="0 0 15 16"><path d="M1 4.500c4 0 8-1 13-3.500v10c-5 2.500-9 3.500-13 3.500z" fill="#b4c6ea" stroke="#8fa4d4" stroke-width="1"/></svg>
<svg style="left:64px;top:353px" width="14" height="14" viewBox="0 0 14 14"><path d="M0.500 2l13-1.500v11L0.500 13z" fill="#cacade" stroke="#9a9ab8" stroke-width="1"/><path d="M7 1.200v11.500M0.500 7.500l13-1" stroke="#9a9ab8" stroke-width="1" fill="none"/></svg>
<div class="t tk" style="left:83px;top:355px;">Outer extract mid</div>
<div class="t tk" style="left:259px;width:20px;text-align:right;top:355px;">8</div>
<div class="a" style="left:288px;top:353px;width:14px;height:14px;background:#9cc05c;border:1px solid #000"></div>
<div class="t tk" style="left:324px;width:20px;text-align:right;top:355px;">0</div>
<div class="a" style="left:42px;top:369px;width:305px;height:18px;background:#b4d7ee"></div>
<div class="a" style="left:33px;top:378px;width:9px;height:0;border-top:1px dotted #9a9a9a"></div>
<svg style="left:46px;top:370px" width="15" height="16" viewBox="0 0 15 16"><path d="M1 4.500c4 0 8-1 13-3.500v10c-5 2.500-9 3.500-13 3.500z" fill="#3b66c4" stroke="#1d3f9a" stroke-width="1"/></svg>
<svg style="left:64px;top:371px" width="14" height="14" viewBox="0 0 14 14"><path d="M0.500 2l13-1.500v11L0.500 13z" fill="#5a5a9c" stroke="#20204c" stroke-width="1"/><path d="M7 1.200v11.500M0.500 7.500l13-1" stroke="#20204c" stroke-width="1" fill="none"/></svg>
<div class="t tk" style="left:83px;top:373px;font-weight:bold;letter-spacing:0.35px;">Inner extract mid</div>
<div class="t tk" style="left:259px;width:20px;text-align:right;top:373px;font-weight:bold;letter-spacing:0.35px;">9</div>
<div class="a" style="left:288px;top:371px;width:14px;height:14px;background:#48aac8;border:1px solid #000"></div>
<div class="t tk" style="left:324px;width:20px;text-align:right;top:373px;font-weight:bold;letter-spacing:0.35px;">0</div>
<svg style="left:10px;top:392px" width="5" height="8" viewBox="0 0 5 8"><path d="M0.500 0.500l4 3.500-4 3.500z" fill="#fff" stroke="#888" stroke-width="1"/></svg>
<div class="a" style="left:16px;top:396px;width:7px;height:0;border-top:1px dotted #9a9a9a"></div>
<svg style="left:10px;top:410px" width="5" height="8" viewBox="0 0 5 8"><path d="M0.500 0.500l4 3.500-4 3.500z" fill="#fff" stroke="#888" stroke-width="1"/></svg>
<div class="a" style="left:16px;top:414px;width:7px;height:0;border-top:1px dotted #9a9a9a"></div>
<svg style="left:10px;top:428px" width="5" height="8" viewBox="0 0 5 8"><path d="M0.500 0.500l4 3.500-4 3.500z" fill="#fff" stroke="#888" stroke-width="1"/></svg>
<div class="a" style="left:16px;top:432px;width:7px;height:0;border-top:1px dotted #9a9a9a"></div>
<svg style="left:24px;top:389px" width="14" height="14" viewBox="0 0 14 14"><defs><linearGradient id="pg" x1="0" x2="1"><stop offset="0" stop-color="#e8e8e8"/><stop offset="1" stop-color="#6a6a6a"/></linearGradient></defs><path d="M0.500 1l9 1v11l-9-1z" fill="url(#pg)"/><path d="M9.500 2l4-1.500v11l-4 1.500z" fill="#555"/></svg>
<div class="t tk" style="left:44px;top:391px">Parts (4)</div>
<svg style="left:23px;top:406px" width="18" height="16" viewBox="0 0 18 16"><path d="M0.500 3.500l1.500-2h5l1.500 2h7v9h-15z" fill="#f3c677" stroke="#c79a48" stroke-width="1"/><path d="M4 10.500l5-3 7 2.500v3l-6.500 2.500-5.500-2.500z" fill="#555"/><path d="M4 10.500l5-3 7 2.500-6.500 3z" fill="#999"/><path d="M1 8v5" stroke="#d00" stroke-width="1.500"/></svg>
<div class="t tk" style="left:44px;top:409px">Properties (4)</div>
<svg style="left:23px;top:424px" width="18" height="16" viewBox="0 0 18 16"><path d="M0.500 3.500l1.500-2h5l1.500 2h7v9h-15z" fill="#f3c677" stroke="#c79a48" stroke-width="1"/><path d="M6.500 6.500h10v7h-7l-3 2.500 1-2.500h-1z" fill="#fff" stroke="#111" stroke-width="1"/><path d="M9 9h6M9 11h6" stroke="#111" stroke-width="1"/></svg>
<div class="t tk" style="left:44px;top:427px">Titles (1)</div>
<!-- splitter + property grid -->
<div class="t" style="left:206px;top:700px;font-size:9px;letter-spacing:3px;color:#666">···</div>
<svg style="left:415px;top:703px" width="8" height="8" viewBox="0 0 8 8" fill="none" stroke="#333" stroke-width="1"><path d="M1 0.500l3 3 3-3M1 4l3 3 3-3"/></svg>
<div class="a" style="left:4px;top:713px;width:423px;height:21px;background:#f0f0f0;border:1px solid #c8c8c8;border-left:none;border-right:none"></div>
<div class="a" style="left:4px;top:733px;width:423px;height:283px;background:#fff;border:1px solid #c8c8c8;border-top:1px solid #d8d8d8"></div>
<div class="t tk" style="left:6px;top:720px">Name</div>
<div class="t tk" style="left:126px;top:720px">Value</div>
<div class="t tk" style="left:25px;top:737px">Name</div><div class="t tk" style="left:128px;top:737px">Inner extract mid</div>
<div class="t tk" style="left:25px;top:755px">ID</div><div class="t tk" style="left:128px;top:755px">9</div>
<div class="t tk" style="left:25px;top:773px">Color</div><div class="a" style="left:127px;top:771px;width:14px;height:14px;background:#48aac8;border:1px solid #000"></div>
<div class="t tk" style="left:25px;top:791px;color:#777">Include</div><div class="t tk" style="left:128px;top:791px;color:#777">[Master Model]</div>
<div class="a" style="left:9px;top:810px;width:9px;height:9px;border:1px solid #8a9ab0;background:#fff"></div>
<div class="a" style="left:11px;top:814px;width:5px;height:1px;background:#224"></div><div class="a" style="left:13px;top:812px;width:1px;height:5px;background:#224"></div>
<div class="t tk" style="left:25px;top:809px">Property</div><div class="t tk" style="left:128px;top:809px">(4) Inner extract</div>
<div class="t tk" style="left:25px;top:827px">Material</div><div class="t tk" style="left:128px;top:827px">&lt;Unspecified&gt;</div>
<div class="t tk" style="left:25px;top:845px">FE style</div>
<svg style="left:127px;top:844px" width="13" height="13" viewBox="0 0 13 13"><path d="M1 3l5-2 6 1.500v8l-5 2-6-2z" fill="#666" stroke="#333" stroke-width="0.800"/><path d="M1 6.500l6 1.500 5-2M4 4v8M9.500 3.500v8" stroke="#bbb" stroke-width="0.700" fill="none"/></svg>
<div class="t tk" style="left:25px;top:863px">Geometry style</div>
<svg style="left:126px;top:863px" width="16" height="10" viewBox="0 0 16 10"><path d="M1 5c3-4 9-5 14-1l-1 4c-3-3-7-3-9-1z" fill="#777" stroke="#444" stroke-width="0.800"/><path d="M1 5l4 2" stroke="#444"/></svg>
<!-- status bar -->
<div class="t tk" style="left:4px;top:1026px">Edit Edges</div>
<div class="a" style="left:0;top:1040px;width:1920px;height:2px;background:#dcdcdc"></div>
<div class="a" style="left:0;top:1040px;width:48px;height:2px;background:#1c2a38"></div>
<div class="a" style="left:392px;top:1040px;width:1528px;height:2px;background:#1c2a38"></div>
<!-- viewport -->
<div class="a" style="left:467px;top:93px;width:1443px;height:717px;background:linear-gradient(#2d5580,#9d9d9f);border:2px solid #5fe3ee;border-right-color:#62cfd4;border-bottom-color:#62cfd4"></div>
<svg style="left:0;top:0" width="1920" height="1042" viewBox="0 0 1920 1042">
<defs><clipPath id="vp"><rect x="469" y="95" width="1439" height="713"/></clipPath><linearGradient id="boxl" gradientUnits="userSpaceOnUse" x1="819" y1="246" x2="850" y2="241"><stop offset="0" stop-color="#4396b1"/><stop offset="0.2" stop-color="#58aec8"/><stop offset="0.36" stop-color="#9adff0"/><stop offset="0.52" stop-color="#5db2cb"/><stop offset="0.7" stop-color="#4597b2"/><stop offset="1" stop-color="#4092ad"/></linearGradient><linearGradient id="boxr" gradientUnits="userSpaceOnUse" x1="991" y1="222" x2="1014" y2="218"><stop offset="0" stop-color="#2e7a96"/><stop offset="0.35" stop-color="#286d89"/><stop offset="1" stop-color="#4092ad"/></linearGradient><linearGradient id="boxf" gradientUnits="userSpaceOnUse" x1="925" y1="249" x2="929" y2="274"><stop offset="0" stop-color="#3f91ab"/><stop offset="0.45" stop-color="#347f9a"/><stop offset="0.55" stop-color="#2a718c"/><stop offset="1" stop-color="#2c7690"/></linearGradient><linearGradient id="chan" gradientUnits="userSpaceOnUse" x1="835" y1="0" x2="1180" y2="0"><stop offset="0" stop-color="#3d97ac"/><stop offset="0.2" stop-color="#2a7e93"/><stop offset="1" stop-color="#2a7e93"/></linearGradient><pattern id="mesh" width="2.4" height="2.4" patternUnits="userSpaceOnUse" patternTransform="rotate(-8)"><path d="M0 0.300H2.400M0.300 0V2.400" stroke="#7fd0e4" stroke-width="0.500" opacity="0.220"/></pattern></defs>
<g clip-path="url(#vp)">
<defs><path id="sp" d="M684.0 733.0C682.9 728.0 679.6 714.2 677.2 702.8C674.8 691.4 672.2 678.8 669.6 664.4C667.0 650.0 664.1 632.4 661.9 616.4C659.6 600.4 657.9 582.8 656.1 568.4C654.3 554.0 652.2 540.9 651.3 530.0C650.3 519.1 650.4 513.7 650.4 502.8C650.4 491.9 651.0 477.2 651.3 464.4C651.6 451.6 651.8 438.8 652.3 426.0C652.8 413.2 653.4 398.8 654.2 387.6C655.0 376.4 655.8 368.4 657.1 358.8C658.4 349.2 660.3 339.3 661.9 330.0C663.5 320.7 664.8 311.2 666.7 302.8C668.6 294.4 670.4 288.1 673.4 279.8C676.4 271.5 680.4 261.6 684.9 252.9C689.4 244.2 694.5 235.6 700.3 227.9C706.1 220.2 712.5 213.2 719.5 206.8C726.5 200.4 734.2 194.6 742.5 189.5C750.8 184.4 759.8 180.0 769.4 176.0C779.0 172.0 790.4 168.4 800.0 165.5C809.6 162.6 817.7 160.7 827.0 158.8C836.3 156.9 846.1 155.6 855.8 154.0C865.5 152.4 873.7 151.4 885.0 149.5C896.3 147.6 910.6 144.5 923.4 142.5C936.2 140.5 949.0 139.0 961.8 137.7C974.6 136.4 987.4 135.4 1000.2 134.8C1013.0 134.2 1027.4 133.9 1038.6 134.2C1049.8 134.5 1057.8 135.0 1067.4 136.7C1077.0 138.4 1088.2 141.7 1096.2 144.4C1104.2 147.1 1108.9 149.5 1115.4 153.0C1121.9 156.5 1129.2 161.0 1135.0 165.5C1140.8 170.0 1144.9 174.4 1150.3 180.0C1155.7 185.6 1161.8 191.8 1167.6 199.2C1173.3 206.6 1179.0 215.9 1184.8 224.2C1190.6 232.5 1196.8 240.8 1202.5 249.1C1208.2 257.4 1213.6 265.1 1219.0 274.1C1224.4 283.1 1230.1 293.9 1235.0 302.9C1239.9 311.8 1244.1 319.5 1248.6 327.8C1253.1 336.1 1258.1 345.4 1262.0 352.8C1265.9 360.2 1267.9 363.6 1272.0 372.0C1276.1 380.4 1282.0 392.7 1286.8 403.0C1291.5 413.3 1295.8 423.8 1300.5 434.0C1305.2 444.2 1310.3 454.3 1314.7 464.0C1319.1 473.7 1323.0 482.7 1327.0 492.0C1331.0 501.3 1335.3 512.0 1338.5 520.0C1341.7 528.0 1343.3 532.2 1346.2 540.0C1349.1 547.8 1352.6 557.1 1355.8 566.7C1359.0 576.3 1362.8 588.4 1365.4 597.4C1368.0 606.4 1370.5 617.1 1371.5 621.0C1364.1 621.2 1344.0 622.0 1327.0 622.4C1310.0 622.8 1288.6 622.9 1269.4 623.4C1250.2 623.9 1227.8 624.7 1211.8 625.3C1195.8 625.9 1186.2 626.3 1173.4 627.2C1160.6 628.1 1144.7 629.8 1135.0 630.7C1125.3 631.6 1125.1 631.8 1115.4 632.6C1105.7 633.4 1089.8 634.4 1077.0 635.5C1064.2 636.6 1051.4 637.8 1038.6 639.4C1025.8 641.0 1013.0 643.0 1000.2 645.1C987.4 647.2 974.6 649.3 961.8 651.9C949.0 654.5 936.2 657.1 923.4 660.5C910.6 663.9 901.1 668.0 885.0 672.0C868.9 676.0 844.7 680.1 827.0 684.6C809.3 689.1 795.0 694.0 779.0 699.0C763.0 704.0 746.8 708.6 731.0 714.3C715.2 720.0 691.8 729.9 684.0 733.0ZM794.4 233.7C798.6 233.5 804.8 233.3 807.8 234.6C810.8 235.9 811.5 237.1 812.6 241.4C813.7 245.7 813.9 254.9 814.5 260.6C815.1 266.4 817.5 271.8 816.4 275.9C815.3 280.0 810.5 282.6 807.8 285.5C805.1 288.4 801.9 289.5 800.0 293.0C798.1 296.5 798.5 302.9 796.3 306.6C794.1 310.3 789.9 314.0 786.7 315.3C783.5 316.6 781.8 315.9 777.0 314.3C772.2 312.7 763.6 308.9 757.9 305.7C752.1 302.5 745.7 298.7 742.5 295.0C739.3 291.3 738.7 287.8 738.7 283.6C738.7 279.4 740.3 274.5 742.5 270.0C744.7 265.5 747.8 261.1 752.0 256.7C756.2 252.2 762.4 246.8 767.5 243.3C772.6 239.8 778.3 237.2 782.8 235.6C787.3 234.0 790.2 233.9 794.4 233.7ZM1025.2 198.2C1027.8 196.4 1033.2 194.8 1038.6 194.3C1044.0 193.8 1051.4 194.4 1057.8 195.3C1064.2 196.2 1070.6 197.4 1077.0 200.0C1083.4 202.6 1091.1 206.9 1096.2 210.6C1101.3 214.3 1105.1 218.3 1107.7 222.2C1110.3 226.0 1111.6 229.9 1111.6 233.7C1111.6 237.5 1110.3 241.0 1107.7 245.2C1105.1 249.3 1100.0 254.9 1096.2 258.6C1092.4 262.3 1088.2 265.9 1084.7 267.3C1081.2 268.8 1078.5 268.4 1075.0 267.3C1071.5 266.2 1067.1 263.3 1063.6 260.6C1060.1 257.9 1057.2 253.6 1054.0 251.0C1050.8 248.4 1047.6 247.0 1044.4 245.2C1041.2 243.4 1037.2 242.6 1034.8 240.4C1032.4 238.2 1031.5 235.8 1030.0 231.8C1028.5 227.8 1027.2 220.9 1026.0 216.4C1024.8 211.9 1023.0 207.9 1022.9 204.9C1022.8 201.9 1022.6 200.0 1025.2 198.2ZM1027.0 269.2C1029.8 267.8 1035.1 266.5 1038.6 267.3C1042.1 268.1 1045.2 271.3 1048.2 274.0C1051.2 276.7 1055.4 280.4 1056.8 283.6C1058.2 286.8 1057.9 290.6 1056.8 293.2C1055.7 295.8 1052.7 298.0 1050.0 299.0C1047.3 300.0 1043.7 300.0 1040.5 299.0C1037.3 298.0 1033.9 295.8 1031.0 293.2C1028.1 290.6 1024.8 286.5 1023.2 283.6C1021.7 280.7 1021.1 278.4 1021.7 276.0C1022.3 273.6 1024.2 270.6 1027.0 269.2ZM1114.2 292.5L1138.3 270.5A11.3 11.3 0 0 0 1123.0 253.7L1098.9 275.8A11.3 11.3 0 0 0 1114.2 292.5ZM1133.9 346.8L1195.4 353.3A13.9 13.9 0 0 0 1198.3 325.7L1136.8 319.2A13.9 13.9 0 0 0 1133.9 346.8ZM1136.9 372.6C1137.7 370.1 1138.2 367.5 1142.7 366.9C1147.2 366.3 1155.5 367.9 1163.8 368.8C1172.1 369.8 1184.0 371.3 1192.6 372.6C1201.2 373.9 1209.5 374.6 1215.6 376.5C1221.7 378.4 1225.2 380.7 1229.0 384.2C1232.8 387.7 1235.5 392.2 1238.7 397.6C1241.9 403.0 1245.1 410.4 1248.3 416.8C1251.5 423.2 1256.0 430.9 1257.9 436.0C1259.8 441.1 1260.5 444.0 1259.8 447.5C1259.1 451.0 1256.9 454.9 1254.0 457.0C1251.1 459.1 1247.0 460.3 1242.5 460.0C1238.0 459.7 1233.0 457.6 1227.2 455.2C1221.5 452.8 1215.0 449.1 1208.0 445.6C1201.0 442.1 1192.0 437.5 1184.9 434.0C1177.9 430.5 1170.8 427.7 1165.7 424.5C1160.6 421.3 1157.7 419.4 1154.2 414.9C1150.7 410.4 1147.3 403.1 1144.6 397.6C1141.9 392.2 1139.2 386.4 1137.9 382.2C1136.6 378.0 1136.1 375.2 1136.9 372.6ZM1171.8 467.9L1203.7 481.8A9.8 9.8 0 0 0 1211.6 463.7L1179.6 449.8A9.8 9.8 0 0 0 1171.8 467.9ZM887.9 452.9C889.3 449.4 893.1 447.1 896.5 443.3C899.9 439.5 904.1 434.3 908.0 429.8C911.9 425.3 915.1 419.9 919.6 416.4C924.1 412.9 928.5 410.6 934.9 408.7C941.3 406.8 951.0 406.0 958.0 404.9C965.0 403.8 971.5 402.2 977.2 402.0C983.0 401.8 987.4 402.5 992.5 403.9C997.6 405.3 1002.1 407.9 1007.9 410.6C1013.7 413.3 1021.0 417.3 1027.1 420.2C1033.2 423.1 1040.4 425.2 1044.4 427.9C1048.4 430.6 1050.1 433.7 1051.1 436.6C1052.0 439.5 1051.9 441.9 1050.1 445.2C1048.3 448.5 1044.3 452.2 1040.5 456.7C1036.7 461.2 1031.9 467.6 1027.1 472.1C1022.3 476.6 1017.5 480.6 1011.7 483.6C1005.9 486.6 999.5 488.4 992.5 490.3C985.5 492.2 976.9 494.3 969.5 495.1C962.1 495.9 954.5 495.7 948.4 495.1C942.3 494.5 938.8 493.5 933.0 491.3C927.2 489.1 919.9 484.9 913.8 481.7C907.7 478.5 900.8 475.0 896.5 472.1C892.2 469.2 889.3 467.6 887.9 464.4C886.5 461.2 886.5 456.4 887.9 452.9ZM919.6 308.6C922.5 306.4 929.8 305.2 934.9 304.7C940.0 304.2 946.4 304.1 950.3 305.7C954.1 307.3 956.2 310.2 958.0 314.3C959.8 318.4 959.5 325.5 960.8 330.0C962.1 334.5 964.5 337.3 965.6 341.5C966.7 345.7 968.2 351.3 967.6 355.0C967.0 358.7 965.0 361.7 961.8 363.6C958.6 365.5 952.6 365.7 948.4 366.5C944.2 367.3 940.2 369.0 936.8 368.4C933.4 367.8 930.4 365.8 928.2 362.6C926.0 359.4 924.7 354.6 923.4 349.2C922.1 343.8 921.5 335.2 920.5 330.0C919.5 324.8 917.8 321.8 917.6 318.2C917.5 314.6 916.7 310.9 919.6 308.6ZM989.6 308.6C990.9 305.9 993.4 302.8 996.4 301.8C999.4 300.8 1004.1 301.4 1007.9 302.8C1011.7 304.2 1015.6 307.6 1019.4 310.5C1023.2 313.4 1027.1 316.8 1030.9 320.0C1034.7 323.2 1038.9 326.8 1042.4 329.7C1045.9 332.6 1048.2 334.1 1052.0 337.7C1055.8 341.3 1061.8 346.3 1065.5 351.1C1069.2 355.9 1072.5 362.3 1074.1 366.5C1075.7 370.7 1076.2 373.7 1075.1 376.1C1074.0 378.5 1070.3 380.6 1067.4 380.9C1064.5 381.2 1062.6 380.4 1057.8 378.0C1053.0 375.6 1045.6 370.3 1038.6 366.5C1031.6 362.7 1022.0 358.5 1015.6 355.0C1009.2 351.5 1004.2 349.6 1000.2 345.4C996.2 341.2 993.5 334.5 991.6 330.0C989.7 325.5 989.0 321.8 988.7 318.2C988.4 314.6 988.3 311.3 989.6 308.6ZM1012.3 389.6L1045.8 405.1A10.6 10.6 0 0 0 1054.7 385.9L1021.2 370.4A10.6 10.6 0 0 0 1012.3 389.6ZM1064.2 479.2L1078.1 466.6A9.2 9.2 0 0 0 1065.7 453.0L1051.8 465.6A9.2 9.2 0 0 0 1064.2 479.2ZM973.0 529.5L999.0 526.8A11.8 11.8 0 0 0 996.5 503.3L970.5 506.0A11.8 11.8 0 0 0 973.0 529.5ZM1069.3 505.0C1068.3 508.6 1068.6 513.0 1069.3 518.4C1070.0 523.8 1071.6 530.6 1073.2 537.6C1074.8 544.6 1077.3 554.2 1078.9 560.6C1080.5 567.0 1081.2 572.0 1082.8 576.0C1084.4 580.0 1085.6 583.0 1088.5 584.6C1091.4 586.2 1095.5 585.9 1100.0 585.6C1104.5 585.3 1110.9 583.5 1115.4 582.7C1119.9 581.9 1123.6 582.4 1126.9 580.8C1130.2 579.2 1132.8 576.0 1135.0 573.0C1137.2 570.0 1139.5 567.1 1139.8 562.9C1140.1 558.6 1137.1 553.0 1136.9 547.5C1136.7 542.0 1137.2 535.3 1138.8 530.2C1140.4 525.1 1143.3 520.9 1146.5 516.8C1149.7 512.6 1155.1 509.1 1158.0 505.3C1160.9 501.5 1163.8 497.5 1163.8 493.8C1163.8 490.1 1160.9 486.2 1158.0 483.2C1155.1 480.1 1150.3 477.4 1146.5 475.5C1142.7 473.6 1138.6 473.1 1135.0 471.7C1131.4 470.3 1128.9 468.5 1125.0 467.3C1121.1 466.1 1115.4 464.4 1111.6 464.4C1107.8 464.4 1105.8 464.7 1102.0 467.3C1098.2 469.9 1093.0 474.9 1088.5 479.8C1084.0 484.8 1078.3 492.8 1075.1 497.0C1071.9 501.2 1070.3 501.4 1069.3 505.0ZM716.1 432.2L767.2 409.0A15.4 15.4 0 0 0 754.5 381.0L703.4 404.3A15.4 15.4 0 0 0 716.1 432.2ZM694.5 530.0C693.4 524.2 693.6 511.2 693.6 502.8C693.6 494.4 693.4 486.2 694.5 479.8C695.6 473.4 697.4 468.6 700.3 464.4C703.2 460.2 706.7 458.0 711.8 454.8C716.9 451.6 724.6 448.4 731.0 445.2C737.4 442.0 744.4 438.3 750.2 435.6C756.0 432.9 761.4 429.9 765.6 428.9C769.8 427.9 772.7 428.1 775.2 429.8C777.8 431.6 779.8 434.9 780.9 439.4C782.0 443.9 781.9 450.9 781.9 456.7C781.9 462.5 782.0 468.6 780.9 474.0C779.8 479.4 778.7 483.6 775.2 489.4C771.7 495.2 764.9 502.9 759.8 508.6C754.7 514.4 747.9 520.3 744.4 523.9C740.9 527.5 740.9 527.4 738.7 530.0C736.5 532.6 733.9 537.2 731.0 539.6C728.1 542.0 724.6 543.6 721.4 544.4C718.2 545.2 715.3 545.5 711.8 544.4C708.3 543.3 703.2 540.1 700.3 537.7C697.4 535.3 695.6 535.8 694.5 530.0ZM729.2 335.1L763.0 351.9A10.8 10.8 0 0 0 772.6 332.7L738.8 315.9A10.8 10.8 0 0 0 729.2 335.1ZM813.3 321.4C813.1 318.0 813.6 313.1 815.2 309.9C816.8 306.7 819.7 303.7 822.9 302.2C826.1 300.7 831.2 300.2 834.4 300.7C837.6 301.2 840.5 302.9 842.1 305.1C843.7 307.3 844.3 310.4 844.0 313.8C843.7 317.2 842.1 322.0 840.2 325.3C838.3 328.6 835.4 332.3 832.5 333.9C829.6 335.5 825.6 335.5 822.9 334.9C820.2 334.3 817.8 332.4 816.2 330.1C814.6 327.9 813.5 324.8 813.3 321.4ZM863.2 327.2C866.4 323.8 869.6 323.0 872.8 322.4C876.0 321.8 879.7 322.0 882.4 323.4C885.1 324.8 887.5 327.2 889.1 331.0C890.7 334.8 891.8 341.3 892.0 346.4C892.2 351.5 891.7 357.0 890.1 361.8C888.5 366.6 885.9 370.1 882.4 375.2C878.9 380.3 873.8 386.7 869.0 392.5C864.2 398.3 857.8 405.6 853.6 409.8C849.4 414.0 846.9 416.9 844.0 417.5C841.1 418.1 838.1 416.2 836.3 413.6C834.4 411.0 832.9 407.2 832.9 402.1C832.9 397.0 834.1 389.9 836.3 382.9C838.5 375.8 843.0 366.5 845.9 359.8C848.8 353.1 850.7 348.0 853.6 342.6C856.5 337.2 860.0 330.6 863.2 327.2ZM880.6 432.4L900.6 413.2A13.7 13.7 0 0 0 881.7 393.5L861.7 412.6A13.7 13.7 0 0 0 880.6 432.4ZM874.8 496.6L898.0 506.8A7.1 7.1 0 0 0 903.7 493.8L880.6 483.5A7.1 7.1 0 0 0 874.8 496.6ZM762.1 551.0L787.3 527.7A7.5 7.5 0 0 0 777.1 516.7L751.9 540.0A7.5 7.5 0 0 0 762.1 551.0ZM809.0 540.0C810.0 535.8 814.7 531.7 818.0 528.0C821.3 524.3 825.2 521.2 829.0 518.0C832.8 514.8 837.5 510.7 841.0 509.0C844.5 507.3 845.9 507.4 850.0 507.6C854.1 507.9 859.6 508.4 865.4 510.5C871.2 512.6 879.8 516.8 885.0 520.0C890.2 523.2 893.0 526.3 896.5 529.9C900.0 533.5 903.2 535.3 906.1 541.4C909.0 547.5 911.2 558.1 913.8 566.4C916.4 574.7 919.7 585.0 921.5 591.4C923.3 597.8 924.7 601.3 924.4 604.8C924.1 608.3 923.0 610.7 919.6 612.5C916.2 614.3 910.0 614.3 904.2 615.4C898.4 616.5 889.9 618.8 885.0 619.0C880.1 619.2 878.3 618.4 875.0 616.4C871.7 614.4 868.0 610.6 865.4 606.8C862.8 603.0 862.2 598.2 859.6 593.4C857.0 588.6 853.8 582.2 850.0 578.0C846.2 573.8 841.7 571.3 836.6 568.4C831.5 565.5 823.4 563.3 819.3 560.7C815.1 558.1 813.4 556.5 811.7 553.0C810.0 549.5 808.0 544.2 809.0 540.0ZM970.4 553.0C971.4 550.1 973.5 548.7 977.2 547.2C980.9 545.8 987.4 544.9 992.5 544.3C997.6 543.7 1004.0 542.8 1007.9 543.4C1011.8 544.0 1013.7 545.3 1015.6 548.2C1017.5 551.1 1017.8 556.0 1019.4 560.6C1021.0 565.2 1023.9 571.5 1025.2 576.0C1026.5 580.5 1027.8 584.5 1027.1 587.5C1026.4 590.5 1025.1 592.8 1021.3 594.2C1017.4 595.7 1009.8 595.4 1004.0 596.2C998.2 597.0 990.8 599.3 986.8 599.0C982.8 598.7 981.9 597.4 980.0 594.2C978.1 591.0 976.6 584.8 975.2 579.8C973.8 574.8 972.2 569.0 971.4 564.5C970.6 560.0 969.4 555.9 970.4 553.0ZM935.1 571.2L941.3 595.2A9.3 9.3 0 0 0 959.3 590.6L953.1 566.5A9.3 9.3 0 0 0 935.1 571.2ZM1038.7 554.3L1046.5 577.9A9.0 9.0 0 0 0 1063.6 572.3L1055.7 548.7A9.0 9.0 0 0 0 1038.7 554.3ZM1080.0 423.0A21 18.3 0 1 0 1122.0 423.0A21 18.3 0 1 0 1080.0 423.0ZM811.7 464.8A22 18.6 0 1 0 855.7 464.8A22 18.6 0 1 0 811.7 464.8ZM885.0 222.5L887.3 218.3L908.0 216.4L907.0 207.8L920.5 205.8L926.3 229.8L912.8 231.8L910.0 224.0L888.8 227.5ZM749.7 622.2A2.4000000000000004 3 0 1 0 754.5 622.2A2.4000000000000004 3 0 1 0 749.7 622.2ZM755.1 639.4A2.8000000000000003 3.5 0 1 0 760.7 639.4A2.8000000000000003 3.5 0 1 0 755.1 639.4ZM1248.6 541.8A2.64 3.3 0 1 0 1253.8 541.8A2.64 3.3 0 1 0 1248.6 541.8ZM1253.0 557.1A3.04 3.8 0 1 0 1259.0 557.1A3.04 3.8 0 1 0 1253.0 557.1Z"/></defs>
<clipPath id="sc"><use href="#sp" clip-rule="evenodd"/></clipPath>
<use href="#sp" fill="#4092ad" fill-rule="evenodd"/>
<use href="#sp" fill="url(#mesh)" fill-rule="evenodd"/>
<g clip-path="url(#sc)">
<path d="M652.0 560.0C660.0 562.5 682.0 575.0 700.0 575.0C718.0 575.0 750.0 562.5 760.0 560.0M655.0 600.0C662.5 601.7 685.8 610.0 700.0 610.0C714.2 610.0 725.0 599.2 740.0 600.0C755.0 600.8 775.0 615.0 790.0 615.0C805.0 615.0 823.3 602.5 830.0 600.0M660.0 635.0C666.7 635.8 685.0 640.0 700.0 640.0C715.0 640.0 733.3 635.0 750.0 635.0C766.7 635.0 785.0 641.7 800.0 640.0C815.0 638.3 833.3 627.5 840.0 625.0M664.0 670.0C670.0 669.2 685.7 667.5 700.0 665.0C714.3 662.5 733.3 656.7 750.0 655.0C766.7 653.3 783.3 657.5 800.0 655.0C816.7 652.5 841.7 642.5 850.0 640.0M672.0 700.0C680.0 698.3 703.7 693.3 720.0 690.0C736.3 686.7 761.7 681.7 770.0 680.0M700.0 575.0C700.8 582.5 701.7 600.8 705.0 620.0C708.3 639.2 717.5 678.3 720.0 690.0M740.0 600.0C742.5 616.7 752.5 683.3 755.0 700.0M790.0 560.0C791.7 573.3 795.8 618.3 800.0 640.0C804.2 661.7 812.5 681.7 815.0 690.0M676.0 545.0C678.3 550.8 692.7 569.2 690.0 580.0C687.3 590.8 665.0 605.0 660.0 610.0M830.0 600.0C833.3 610.0 845.0 646.7 850.0 660.0C855.0 673.3 858.3 676.7 860.0 680.0M1170.0 520.0C1180.0 517.5 1210.0 510.0 1230.0 505.0C1250.0 500.0 1280.0 492.5 1290.0 490.0M1160.0 560.0C1170.0 557.5 1198.3 550.8 1220.0 545.0C1241.7 539.2 1270.8 530.5 1290.0 525.0C1309.2 519.5 1327.5 514.2 1335.0 512.0M1180.0 590.0C1191.7 587.5 1226.7 580.0 1250.0 575.0C1273.3 570.0 1303.0 563.3 1320.0 560.0C1337.0 556.7 1346.7 555.8 1352.0 555.0M1200.0 612.0C1210.0 610.0 1238.3 603.7 1260.0 600.0C1281.7 596.3 1313.0 592.5 1330.0 590.0C1347.0 587.5 1356.7 585.8 1362.0 585.0M1210.0 500.0C1212.5 510.0 1220.0 539.2 1225.0 560.0C1230.0 580.8 1237.5 614.2 1240.0 625.0M1260.0 490.0C1265.0 501.7 1283.3 537.8 1290.0 560.0C1296.7 582.2 1298.3 612.5 1300.0 623.0M1300.0 470.0C1305.0 478.3 1322.5 508.3 1330.0 520.0C1337.5 531.7 1342.5 536.7 1345.0 540.0M1290.0 455.0C1296.7 457.5 1323.3 467.5 1330.0 470.0M1230.0 480.0C1232.5 488.3 1242.5 521.7 1245.0 530.0M1290.0 525.0C1295.0 526.7 1313.0 538.3 1320.0 535.0C1327.0 531.7 1330.0 510.0 1332.0 505.0M1115.0 230.0C1120.8 229.2 1137.5 224.7 1150.0 225.0C1162.5 225.3 1183.3 230.8 1190.0 232.0M1150.0 225.0C1149.2 229.2 1145.8 245.8 1145.0 250.0M1160.0 270.0C1166.7 275.0 1190.8 296.7 1200.0 300.0C1209.2 303.3 1207.5 292.8 1215.0 290.0C1222.5 287.2 1240.0 284.2 1245.0 283.0M1150.0 290.0C1155.0 292.5 1175.0 302.5 1180.0 305.0M1170.0 268.0C1174.2 275.0 1190.8 303.0 1195.0 310.0M1110.0 300.0C1116.7 300.0 1136.7 300.8 1150.0 300.0C1163.3 299.2 1183.3 295.8 1190.0 295.0M1090.0 310.0C1091.7 315.8 1095.0 336.7 1100.0 345.0C1105.0 353.3 1116.7 357.5 1120.0 360.0M1085.0 320.0C1077.5 320.8 1047.5 324.2 1040.0 325.0M1200.0 352.0C1208.3 351.7 1238.7 351.2 1250.0 350.0C1261.3 348.8 1265.0 345.8 1268.0 345.0M1180.0 350.0C1183.3 353.7 1196.7 368.3 1200.0 372.0M655.0 380.0C660.8 379.2 672.5 377.5 690.0 375.0C707.5 372.5 748.3 366.7 760.0 365.0M700.0 340.0C700.8 348.3 704.2 381.7 705.0 390.0M720.0 345.0C719.2 352.5 715.8 382.5 715.0 390.0M740.0 350.0C739.2 355.0 735.8 375.0 735.0 380.0M652.0 455.0C657.5 453.8 677.0 449.3 685.0 448.0C693.0 446.7 697.5 447.2 700.0 447.0M775.0 340.0C779.2 344.2 790.8 361.7 800.0 365.0C809.2 368.3 825.0 360.8 830.0 360.0M785.0 330.0C785.3 335.8 791.2 355.8 787.0 365.0C782.8 374.2 764.5 381.7 760.0 385.0M800.0 365.0C805.0 369.2 825.0 385.8 830.0 390.0M835.0 430.0C829.2 432.5 807.5 440.0 800.0 445.0C792.5 450.0 791.7 457.5 790.0 460.0M840.0 425.0C839.7 428.3 838.3 441.7 838.0 445.0M890.0 300.0C896.7 307.5 925.0 332.5 930.0 345.0C935.0 357.5 921.7 370.0 920.0 375.0M985.0 325.0C987.5 320.8 997.5 304.2 1000.0 300.0M1050.0 385.0C1051.7 391.7 1058.3 418.3 1060.0 425.0M1085.0 390.0C1086.7 392.5 1093.3 402.5 1095.0 405.0M1090.0 385.0C1095.0 382.5 1115.0 372.5 1120.0 370.0M850.0 495.0C851.7 500.8 856.7 519.2 860.0 530.0C863.3 540.8 868.3 555.0 870.0 560.0M800.0 480.0C806.7 481.7 833.3 488.3 840.0 490.0M912.0 555.0C920.0 553.8 952.0 549.2 960.0 548.0M1030.0 538.0C1035.0 537.5 1055.0 535.5 1060.0 535.0M905.0 480.0C903.3 483.3 896.7 496.7 895.0 500.0M895.0 660.0C894.7 654.2 893.3 630.8 893.0 625.0M905.0 658.0C904.2 655.0 900.8 643.0 900.0 640.0M1125.0 585.0C1125.8 592.5 1129.2 622.5 1130.0 630.0M1110.0 588.0C1109.7 590.0 1108.3 598.0 1108.0 600.0M835.0 240.0C829.2 230.3 805.8 191.7 800.0 182.0M1015.0 148.0C1015.5 153.7 1017.5 176.3 1018.0 182.0M1000.0 265.0C1000.5 269.2 1002.5 285.8 1003.0 290.0" fill="none" stroke="#5fc4ee" stroke-width="1" stroke-dasharray="3.500 2.500" opacity="0.9"/>
<path d="M822.300 204Q826 194 838.100 191L843.200 205.400 854.700 260.100 858.300 285.300 835.200 290.300 826.600 284.600Q823 282 822.300 274.500L818 227z" fill="url(#boxl)"/>
<path d="M985.700 183.800L1007 182.500 1017 238 1012.300 250Q1008 260 999.400 262.300L997.200 237.100z" fill="url(#boxr)"/>
<path d="M854.700 260.100L997.200 237.100 999.400 262.300 858.300 285.300z" fill="url(#boxf)"/>
<path d="M843.200 205.400L985.700 183.800 997.200 237.100 854.700 260.100z" fill="#4396b1"/>
<path d="M843.200 205.400L985.700 183.800 997.200 237.100 854.700 260.100z" fill="url(#mesh)"/>
<path d="M843.200 205.400L985.700 183.800 997.200 237.100 854.700 260.100z" fill="none" stroke="#1ff05a" stroke-width="1.200"/>
<path d="M835.200 290.300L826.600 284.600Q823 282 822.300 274.500L819.400 241.400 818 227 822.300 204Q826 194 838.100 191L979.900 168.700Q992 169 999.400 175.200L1015.900 182.400 1025.300 242.800 1028 253" fill="none" stroke="#1ff05a" stroke-width="1.200"/>
<path d="M841 201.800L982.100 179.500" fill="none" stroke="#1ff05a" stroke-width="1.200"/>
<path d="M857.500 274.500L998.600 250.700" fill="none" stroke="#1ff05a" stroke-width="1.200"/>
<path d="M858.300 285.300L999.400 262.300" fill="none" stroke="#1ff05a" stroke-width="1.200"/>
<path d="M854.700 260.100L858.300 285.300" fill="none" stroke="#1ff05a" stroke-width="1.200"/>
<path d="M997.200 237.100L999.400 262.300" fill="none" stroke="#1ff05a" stroke-width="1.200"/>
<path d="M833 209.700L838.100 265.900Q840 280 852 284" fill="none" stroke="#1ff05a" stroke-width="1.200"/>
<path d="M838.100 191L843.200 205.400M822.300 204L833 209.700M819.400 241.400L835 238M820 227L833.500 224" fill="none" stroke="#1ff05a" stroke-width="1.200"/>
<path d="M992.200 183.800L1009.400 240Q1012 252 999.400 262.300M997.200 237.100Q1008 236 1012.300 242.800M998.600 250.700Q1010 248 1011 240" fill="none" stroke="#1ff05a" stroke-width="1.200"/>
<path d="M997.900 196.800L1012.300 196.800M1001.500 209.700L1015.900 209.700M985.700 183.800L979.900 168.700M1012.300 242.800L1025.300 242.800" fill="none" stroke="#1ff05a" stroke-width="1.200"/>
<path d="M667.7 528.4C667.4 526.9 667.2 525.2 667.1 523.5C666.9 521.8 666.7 520.0 666.6 518.0C666.4 516.1 666.3 514.1 666.1 512.1C666.0 510.1 665.9 508.1 665.8 506.1C665.7 504.1 665.6 502.1 665.5 500.1C665.4 498.1 665.3 496.1 665.3 494.1C665.2 492.1 665.1 490.1 665.1 488.1C665.0 486.1 665.0 484.1 664.9 482.1C664.9 480.1 664.9 478.1 664.9 476.1C664.9 474.1 665.0 472.1 665.0 470.1C665.0 468.1 665.1 466.1 665.1 464.1C665.2 462.1 665.3 460.1 665.3 458.1C665.4 456.1 665.5 454.1 665.6 452.1C665.6 450.1 665.7 448.1 665.7 446.1C665.8 444.1 665.8 442.1 665.9 440.1C665.9 438.1 666.0 436.1 666.0 434.1C666.1 432.1 666.1 430.1 666.1 428.1C666.2 426.1 666.2 424.1 666.3 422.1C666.3 420.1 666.4 418.1 666.5 416.1C666.5 414.1 666.6 412.1 666.7 410.1C666.8 408.1 666.9 406.1 667.0 404.1C667.1 402.1 667.2 400.1 667.3 398.2C667.4 396.2 667.5 394.2 667.6 392.2C667.8 390.2 667.9 388.2 668.0 386.2C668.2 384.2 668.4 382.2 668.5 380.2C668.7 378.2 668.9 376.2 669.1 374.2C669.3 372.2 669.6 370.3 669.8 368.3C670.1 366.3 670.3 364.3 670.6 362.3C670.9 360.4 671.3 358.4 671.6 356.4C671.9 354.4 672.3 352.5 672.6 350.5C673.0 348.5 673.3 346.6 673.7 344.6C674.0 342.6 674.4 340.7 674.8 338.7C675.1 336.7 675.5 334.8 675.8 332.8C676.2 330.8 676.5 328.9 676.8 326.9C677.1 324.9 677.4 322.9 677.8 321.0C678.1 319.0 678.4 317.0 678.7 315.0C679.0 313.1 679.4 311.1 679.8 309.2C680.2 307.2 680.7 305.3 681.2 303.3C681.7 301.4 682.2 299.5 682.8 297.6C683.4 295.6 684.0 293.7 684.6 291.8C685.3 290.0 685.9 288.1 686.6 286.2C687.4 284.3 688.1 282.5 688.9 280.7C689.7 278.8 690.5 277.0 691.4 275.2C692.2 273.4 693.1 271.6 694.1 269.9C695.0 268.1 696.0 266.4 697.0 264.7C698.0 262.9 699.1 261.3 700.2 259.6C701.3 257.9 702.4 256.2 703.5 254.6C704.7 253.0 705.9 251.4 707.0 249.8C708.2 248.2 709.5 246.6 710.7 245.0C712.0 243.4 713.2 241.9 714.5 240.4C715.8 238.9 717.1 237.4 718.5 235.9C719.8 234.4 721.2 233.0 722.6 231.5C724.0 230.1 725.4 228.7 726.9 227.4C728.4 226.0 729.8 224.7 731.4 223.4C732.9 222.1 734.4 220.9 736.0 219.6C737.6 218.4 739.2 217.2 740.9 216.1C742.5 214.9 744.1 213.8 745.8 212.7C747.5 211.7 749.2 210.6 750.9 209.6C752.6 208.5 754.3 207.5 756.1 206.5C757.8 205.5 759.5 204.5 761.3 203.6C763.0 202.6 764.8 201.6 766.5 200.7C768.3 199.7 770.1 198.8 771.9 197.9C773.6 197.0 775.4 196.1 777.2 195.2C779.0 194.4 780.8 193.5 782.6 192.7C784.5 191.8 786.3 191.0 788.1 190.2C789.9 189.4 791.8 188.6 793.6 187.8C795.4 187.0 797.3 186.3 799.2 185.5C801.0 184.8 802.9 184.1 804.7 183.4C806.6 182.7 808.5 182.0 810.4 181.3C812.3 180.7 814.2 180.1 816.1 179.5C818.0 178.8 819.9 178.3 821.8 177.7C823.7 177.1 825.6 176.6 827.6 176.0C829.5 175.5 831.4 175.0 833.4 174.5C835.3 174.0 837.3 173.6 839.2 173.1C841.1 172.6 843.1 172.2 845.1 171.8C847.0 171.4 849.0 170.9 850.9 170.5C852.9 170.1 854.8 169.7 856.8 169.4C858.8 169.0 860.7 168.6 862.7 168.2C864.7 167.9 866.6 167.5 868.6 167.2C870.6 166.8 872.5 166.5 874.5 166.1C876.5 165.7 878.4 165.3 880.4 165.0C882.4 164.6 884.3 164.2 886.3 163.7C888.2 163.3 890.2 162.9 892.1 162.4C894.1 161.9 896.0 161.5 897.9 161.0C899.9 160.5 901.8 160.0 903.8 159.6C905.7 159.1 907.7 158.6 909.6 158.1C911.6 157.7 913.5 157.2 915.5 156.8C917.4 156.4 919.4 156.0 921.3 155.6C923.3 155.2 925.3 154.9 927.2 154.5C929.2 154.2 931.2 153.9 933.1 153.6C935.1 153.3 937.1 153.0 939.1 152.8C941.1 152.5 943.1 152.3 945.0 152.0C947.0 151.8 949.0 151.6 951.0 151.4C953.0 151.2 955.0 151.0 957.0 150.8C959.0 150.6 961.0 150.4 962.9 150.2C964.9 150.1 966.9 149.9 968.9 149.8C970.9 149.6 972.9 149.5 974.9 149.3C976.9 149.2 978.9 149.1 980.9 149.0C982.9 148.9 984.9 148.8 986.9 148.7C988.9 148.6 990.9 148.6 992.9 148.5C994.9 148.5 996.9 148.4 998.9 148.4C1000.9 148.3 1002.9 148.3 1004.9 148.3C1006.9 148.3 1008.9 148.3 1010.9 148.3C1012.9 148.3 1014.9 148.4 1016.9 148.4C1018.9 148.5 1020.9 148.5 1022.9 148.6C1024.9 148.6 1026.9 148.7 1028.9 148.8C1030.9 148.9 1032.9 149.0 1034.8 149.1C1036.8 149.2 1038.8 149.4 1040.8 149.5C1042.8 149.7 1044.8 149.9 1046.8 150.1C1048.8 150.3 1050.8 150.5 1052.8 150.7C1054.7 151.0 1056.7 151.3 1058.7 151.6C1060.7 151.9 1062.6 152.3 1064.6 152.7C1066.5 153.1 1068.5 153.5 1070.4 154.0C1072.4 154.4 1074.3 154.9 1076.2 155.4C1078.2 156.0 1080.1 156.5 1082.0 157.1C1083.9 157.7 1085.8 158.3 1087.7 158.9C1089.6 159.5 1091.5 160.2 1093.4 160.9C1095.2 161.6 1097.1 162.4 1098.9 163.1C1100.7 163.9 1102.6 164.8 1104.4 165.6C1106.2 166.5 1107.9 167.4 1109.7 168.3C1111.5 169.3 1113.2 170.2 1115.0 171.2C1116.7 172.1 1118.5 173.1 1120.2 174.1C1121.9 175.2 1123.6 176.2 1125.2 177.3C1126.9 178.5 1128.5 179.6 1130.0 180.9C1131.6 182.1 1133.1 183.4 1134.5 184.8C1136.0 186.1 1137.4 187.5 1138.8 189.0C1140.2 190.4 1141.6 191.9 1142.9 193.3C1144.3 194.8 1145.6 196.3 1147.0 197.8C1148.3 199.2 1149.7 200.7 1151.0 202.2C1152.4 203.6 1153.7 205.1 1155.1 206.6C1156.4 208.1 1157.8 209.6 1159.1 211.1C1160.4 212.6 1161.7 214.1 1163.0 215.6C1164.3 217.1 1165.5 218.7 1166.8 220.2C1168.0 221.8 1169.2 223.4 1170.5 225.0C1171.7 226.6 1172.8 228.2 1174.0 229.8C1175.2 231.4 1176.3 233.1 1177.5 234.7C1178.6 236.3 1179.8 238.0 1180.9 239.6C1182.1 241.3 1183.2 242.9 1184.3 244.6C1185.5 246.2 1186.6 247.9 1187.7 249.5C1188.8 251.2 1189.9 252.9 1191.0 254.5C1192.1 256.2 1193.2 257.9 1194.3 259.6C1195.4 261.2 1196.5 262.9 1197.5 264.6C1198.6 266.3 1199.7 268.0 1200.8 269.7C1201.8 271.3 1202.9 273.0 1203.9 274.7C1205.0 276.4 1206.0 278.2 1207.0 279.9C1208.1 281.6 1209.1 283.3 1210.1 285.1C1211.0 286.8 1212.0 288.5 1212.9 290.3C1213.9 292.1 1214.8 293.9 1215.7 295.6C1216.6 297.4 1217.5 299.2 1218.3 301.0C1219.2 302.8 1220.1 304.6 1221.0 306.4C1221.9 308.2 1222.9 309.9 1223.8 311.7C1224.8 313.4 1225.8 315.2 1226.7 316.9C1227.7 318.7 1228.7 320.4 1229.8 322.1C1230.8 323.8 1231.8 325.6 1232.8 327.3C1233.8 329.0 1234.8 330.7 1235.8 332.5C1236.8 334.2 1237.8 336.0 1238.7 337.7C1239.7 339.5 1240.6 341.2 1241.6 343.0C1242.5 344.8 1243.4 346.5 1244.4 348.3C1245.3 350.1 1246.3 351.8 1247.3 353.5C1248.3 355.3 1249.4 356.9 1250.4 358.6C1251.5 360.3 1252.7 361.9 1253.8 363.5C1254.9 365.2 1256.1 366.8 1257.2 368.5C1258.3 370.1 1259.3 371.8 1260.3 373.5C1261.4 375.2 1262.3 377.0 1263.3 378.7C1264.2 380.5 1265.2 382.3 1266.1 384.0C1267.0 385.8 1267.9 387.6 1268.8 389.4C1269.8 391.1 1270.7 392.9 1271.6 394.7C1272.5 396.5 1273.5 398.2 1274.4 400.0C1275.3 401.8 1276.2 403.6 1277.2 405.3C1278.1 407.1 1279.0 408.9 1279.9 410.7C1280.8 412.5 1281.6 414.3 1282.4 416.1C1283.2 417.9 1284.0 419.7 1284.7 421.6C1285.4 423.5 1286.0 425.4 1286.5 427.3C1287.0 429.2 1287.4 431.1 1287.8 433.1C1288.1 435.1 1288.3 437.0 1288.5 439.0C1288.6 441.0 1288.7 443.0 1288.6 444.9C1288.5 446.9 1288.3 448.9 1288.0 450.8C1287.7 452.8 1287.2 454.7 1286.6 456.6C1286.0 458.4 1285.2 460.3 1284.4 462.0C1283.5 463.8 1282.5 465.5 1281.5 467.1C1280.4 468.8 1279.2 470.4 1277.9 471.9C1276.7 473.4 1275.3 474.8 1273.9 476.2C1272.5 477.5 1271.1 478.8 1269.5 480.0C1268.0 481.2 1266.4 482.2 1264.7 483.3C1263.1 484.3 1261.4 485.2 1259.6 486.1C1257.9 486.9 1256.1 487.7 1254.3 488.4C1252.4 489.2 1250.6 489.9 1248.7 490.5C1246.9 491.2 1245.0 491.7 1243.1 492.3C1241.2 492.9 1239.3 493.4 1237.3 493.9C1235.4 494.5 1233.5 494.9 1231.6 495.4C1229.6 495.9 1227.7 496.4 1225.7 496.9C1223.8 497.3 1221.9 497.8 1219.9 498.3C1218.0 498.7 1216.0 499.2 1214.1 499.6C1212.1 500.1 1210.2 500.5 1208.2 501.0C1206.3 501.6 1204.3 502.1 1202.4 502.7C1200.5 503.3 1198.5 503.9 1196.6 504.6C1194.8 505.4 1192.9 506.2 1191.1 507.1C1189.3 508.0 1187.5 509.0 1185.8 510.1C1184.1 511.2 1182.4 512.5 1180.9 513.8C1179.3 515.1 1177.9 516.5 1176.5 518.1C1175.2 519.6 1173.9 521.2 1172.7 522.9C1171.6 524.6 1170.6 526.3 1169.7 528.2C1168.9 530.0 1168.2 531.9 1167.7 533.9C1167.2 535.8 1166.9 537.9 1166.8 539.9C1166.7 541.9 1166.8 543.9 1166.9 546.0C1167.0 548.0 1167.3 550.0 1167.6 552.0C1167.8 554.0 1168.1 556.0 1168.4 558.0C1168.7 560.0 1169.1 561.9 1169.4 563.9C1169.7 565.9 1170.1 567.9 1170.4 569.8C1170.6 571.7 1171.0 573.7 1171.1 575.6C1171.2 577.5 1171.3 579.4 1171.2 581.3C1171.0 583.2 1170.7 585.0 1170.2 586.8C1169.8 588.6 1169.1 590.3 1168.3 592.0C1167.4 593.6 1166.4 595.2 1165.3 596.7C1164.1 598.1 1162.8 599.5 1161.4 600.8C1160.1 602.0 1158.6 603.2 1157.0 604.2C1155.4 605.2 1153.8 606.1 1152.1 606.9C1150.4 607.6 1148.6 608.3 1146.8 608.8C1145.0 609.4 1143.2 609.8 1141.3 610.2C1139.4 610.5 1137.5 610.8 1135.6 611.1C1133.7 611.4 1131.7 611.7 1129.7 611.9C1127.8 612.2 1125.8 612.4 1123.8 612.7C1121.9 612.9 1119.9 613.2 1117.9 613.4C1115.9 613.7 1114.0 613.9 1112.0 614.1C1110.0 614.4 1108.0 614.6 1106.0 614.8C1104.0 615.1 1102.0 615.3 1100.1 615.6C1098.1 615.8 1096.1 616.1 1094.1 616.3C1092.1 616.6 1090.1 616.8 1088.1 617.1C1086.1 617.3 1084.1 617.6 1082.2 617.9C1080.2 618.2 1078.2 618.4 1076.2 618.7C1074.2 619.0 1072.2 619.3 1070.2 619.6C1068.2 619.9 1066.3 620.3 1064.3 620.6C1062.3 620.9 1060.3 621.2 1058.3 621.6C1056.4 621.9 1054.4 622.2 1052.4 622.6C1050.4 622.9 1048.5 623.2 1046.5 623.6C1044.5 623.9 1042.6 624.3 1040.6 624.6C1038.6 624.9 1036.6 625.3 1034.7 625.6C1032.7 626.0 1030.7 626.3 1028.8 626.6C1026.8 627.0 1024.8 627.3 1022.9 627.7C1020.9 628.0 1018.9 628.3 1016.9 628.7C1015.0 629.0 1013.0 629.3 1011.0 629.6C1009.1 630.0 1007.1 630.3 1005.1 630.6C1003.1 630.9 1001.2 631.3 999.2 631.6C997.2 631.9 995.3 632.2 993.3 632.5C991.3 632.9 989.3 633.2 987.4 633.5C985.4 633.8 983.4 634.2 981.4 634.5C979.5 634.8 977.5 635.2 975.5 635.5C973.5 635.8 971.6 636.2 969.6 636.5C967.6 636.8 965.6 637.2 963.7 637.5C961.7 637.9 959.7 638.2 957.7 638.6C955.8 639.0 953.8 639.3 951.8 639.7C949.8 640.1 947.9 640.4 945.9 640.8C943.9 641.2 942.0 641.6 940.0 642.0C938.0 642.4 936.1 642.8 934.1 643.3C932.1 643.7 930.2 644.1 928.2 644.6C926.2 645.1 924.3 645.5 922.3 646.1C920.4 646.6 918.4 647.1 916.5 647.7C914.6 648.2 912.6 648.8 910.7 649.4C908.8 650.0 906.9 650.6 905.0 651.2C903.1 651.8 901.2 652.5 899.3 653.0C897.4 653.6 895.5 654.1 893.6 654.5C891.8 655.0 889.9 655.4 888.0 655.6C886.1 655.9 884.3 656.0 882.4 656.0C880.6 655.9 878.7 655.7 876.9 655.3C875.1 655.0 873.4 654.4 871.6 653.7C869.8 653.0 868.1 652.2 866.4 651.3C864.7 650.4 863.0 649.4 861.3 648.4C859.7 647.3 858.1 646.2 856.5 645.1C855.0 643.9 853.5 642.6 852.1 641.3C850.8 640.0 849.5 638.6 848.3 637.1C847.2 635.5 846.2 633.9 845.3 632.2C844.4 630.5 843.7 628.7 842.9 626.9C842.2 625.1 841.6 623.2 841.0 621.3C840.4 619.4 839.8 617.5 839.2 615.6C838.6 613.7 838.0 611.8 837.3 609.9C836.6 608.0 835.9 606.1 835.1 604.2C834.3 602.4 833.5 600.6 832.4 598.8C831.4 597.1 830.3 595.4 829.0 593.8C827.8 592.2 826.4 590.7 824.9 589.3C823.4 588.0 821.8 586.7 820.1 585.6C818.4 584.5 816.5 583.6 814.7 582.7C812.8 581.9 810.9 581.2 808.9 580.6C807.0 580.0 805.0 579.5 803.0 579.1C801.0 578.7 799.0 578.3 797.0 578.0C795.0 577.7 793.0 577.5 791.0 577.3C789.0 577.1 787.0 577.0 785.0 576.9C783.0 576.7 780.9 576.7 778.9 576.7C776.9 576.6 774.9 576.6 772.9 576.7C770.9 576.7 768.9 576.7 766.9 576.7C764.9 576.8 762.9 576.8 760.9 576.9C758.9 576.9 756.9 576.9 754.9 577.0C752.9 577.0 750.9 577.0 748.9 577.1C746.9 577.1 744.9 577.1 742.9 577.1C740.9 577.1 738.9 577.1 737.0 577.0C735.0 577.0 733.0 576.9 731.0 576.7C729.1 576.6 727.1 576.5 725.1 576.2C723.2 576.0 721.2 575.8 719.3 575.4C717.4 575.1 715.5 574.7 713.6 574.2C711.8 573.7 709.9 573.1 708.1 572.5C706.3 571.8 704.5 571.0 702.8 570.1C701.1 569.3 699.4 568.3 697.8 567.2C696.1 566.2 694.5 565.0 693.0 563.8C691.5 562.6 690.0 561.3 688.6 560.0C687.2 558.6 685.8 557.2 684.5 555.7C683.2 554.2 681.9 552.7 680.7 551.1C679.5 549.6 678.2 548.0 677.1 546.4C675.9 544.8 674.7 543.1 673.7 541.5C672.6 540.0 671.6 538.5 670.8 537.0C670.0 535.5 669.3 534.0 668.8 532.6C668.3 531.2 668.0 529.9 667.7 528.4ZM667.5 528.5C667.2 526.9 667.0 525.3 666.9 523.5C666.7 521.8 666.5 520.0 666.4 518.1C666.2 516.2 666.1 514.1 665.9 512.1C665.8 510.1 665.7 508.1 665.6 506.1C665.5 504.1 665.4 502.1 665.3 500.1C665.2 498.1 665.1 496.1 665.1 494.1C665.0 492.1 664.9 490.1 664.9 488.1C664.8 486.1 664.8 484.1 664.7 482.1C664.7 480.1 664.7 478.1 664.7 476.1C664.7 474.1 664.8 472.1 664.8 470.1C664.8 468.1 664.9 466.1 664.9 464.1C665.0 462.1 665.1 460.1 665.1 458.1C665.2 456.1 665.3 454.1 665.4 452.1C665.4 450.1 665.5 448.1 665.5 446.1C665.6 444.1 665.6 442.1 665.7 440.1C665.7 438.1 665.8 436.1 665.8 434.1C665.9 432.1 665.9 430.1 665.9 428.1C666.0 426.1 666.0 424.1 666.1 422.1C666.1 420.1 666.2 418.1 666.3 416.1C666.3 414.1 666.4 412.1 666.5 410.1C666.6 408.1 666.7 406.1 666.8 404.1C666.9 402.1 667.0 400.1 667.1 398.1C667.2 396.1 667.3 394.1 667.4 392.2C667.6 390.2 667.7 388.2 667.8 386.2C668.0 384.2 668.2 382.2 668.3 380.2C668.5 378.2 668.7 376.2 668.9 374.2C669.1 372.2 669.4 370.2 669.6 368.3C669.9 366.3 670.1 364.3 670.4 362.3C670.7 360.3 671.1 358.4 671.4 356.4C671.7 354.4 672.1 352.4 672.4 350.5C672.8 348.5 673.1 346.5 673.5 344.6C673.9 342.6 674.2 340.6 674.6 338.7C674.9 336.7 675.3 334.7 675.6 332.8C676.0 330.8 676.3 328.8 676.6 326.8C676.9 324.9 677.2 322.9 677.6 320.9C677.9 318.9 678.2 317.0 678.5 315.0C678.9 313.0 679.2 311.1 679.6 309.1C680.0 307.2 680.5 305.2 681.0 303.3C681.5 301.3 682.0 299.4 682.6 297.5C683.2 295.6 683.8 293.7 684.4 291.8C685.1 289.9 685.7 288.0 686.5 286.1C687.2 284.3 687.9 282.4 688.7 280.6C689.5 278.7 690.3 276.9 691.2 275.1C692.0 273.3 692.9 271.5 693.9 269.8C694.8 268.0 695.8 266.3 696.8 264.6C697.9 262.8 698.9 261.1 700.0 259.5C701.1 257.8 702.2 256.1 703.4 254.5C704.5 252.9 705.7 251.2 706.9 249.6C708.1 248.0 709.3 246.5 710.6 244.9C711.8 243.3 713.1 241.8 714.4 240.3C715.7 238.7 717.0 237.2 718.3 235.7C719.7 234.3 721.0 232.8 722.5 231.4C723.9 230.0 725.3 228.6 726.8 227.2C728.2 225.9 729.7 224.5 731.2 223.2C732.8 222.0 734.3 220.7 735.9 219.5C737.5 218.3 739.1 217.1 740.7 215.9C742.4 214.8 744.0 213.7 745.7 212.6C747.4 211.5 749.1 210.4 750.8 209.4C752.5 208.4 754.2 207.3 756.0 206.3C757.7 205.3 759.4 204.4 761.2 203.4C762.9 202.4 764.7 201.5 766.5 200.5C768.2 199.6 770.0 198.6 771.8 197.7C773.6 196.8 775.3 195.9 777.1 195.1C778.9 194.2 780.7 193.3 782.6 192.5C784.4 191.6 786.2 190.8 788.0 190.0C789.9 189.2 791.7 188.4 793.5 187.6C795.4 186.8 797.2 186.1 799.1 185.3C800.9 184.6 802.8 183.9 804.7 183.2C806.6 182.5 808.4 181.8 810.3 181.2C812.2 180.5 814.1 179.9 816.0 179.3C817.9 178.7 819.8 178.1 821.8 177.5C823.7 176.9 825.6 176.4 827.5 175.8C829.5 175.3 831.4 174.8 833.3 174.3C835.3 173.8 837.2 173.4 839.2 172.9C841.1 172.4 843.1 172.0 845.0 171.6C847.0 171.2 848.9 170.7 850.9 170.3C852.8 169.9 854.8 169.5 856.8 169.2C858.7 168.8 860.7 168.4 862.7 168.0C864.6 167.7 866.6 167.3 868.6 167.0C870.5 166.6 872.5 166.3 874.5 165.9C876.4 165.5 878.4 165.2 880.4 164.8C882.3 164.4 884.3 164.0 886.2 163.5C888.2 163.1 890.1 162.7 892.1 162.2C894.0 161.7 896.0 161.3 897.9 160.8C899.8 160.3 901.8 159.8 903.7 159.4C905.7 158.9 907.6 158.4 909.6 158.0C911.5 157.5 913.5 157.0 915.4 156.6C917.4 156.2 919.3 155.8 921.3 155.4C923.3 155.0 925.2 154.7 927.2 154.3C929.2 154.0 931.1 153.7 933.1 153.4C935.1 153.1 937.1 152.8 939.1 152.6C941.0 152.3 943.0 152.1 945.0 151.8C947.0 151.6 949.0 151.4 951.0 151.2C953.0 151.0 955.0 150.8 957.0 150.6C958.9 150.4 960.9 150.2 962.9 150.0C964.9 149.9 966.9 149.7 968.9 149.6C970.9 149.4 972.9 149.3 974.9 149.1C976.9 149.0 978.9 148.9 980.9 148.8C982.9 148.7 984.9 148.6 986.9 148.5C988.9 148.4 990.9 148.4 992.9 148.3C994.9 148.3 996.9 148.2 998.9 148.2C1000.9 148.1 1002.9 148.1 1004.9 148.1C1006.9 148.1 1008.9 148.1 1010.9 148.1C1012.9 148.1 1014.9 148.2 1016.9 148.2C1018.9 148.3 1020.9 148.3 1022.9 148.4C1024.9 148.4 1026.9 148.5 1028.9 148.6C1030.9 148.7 1032.9 148.8 1034.9 148.9C1036.9 149.0 1038.9 149.2 1040.8 149.3C1042.8 149.5 1044.8 149.7 1046.8 149.9C1048.8 150.1 1050.8 150.3 1052.8 150.6C1054.8 150.8 1056.7 151.1 1058.7 151.4C1060.7 151.7 1062.7 152.1 1064.6 152.5C1066.6 152.9 1068.5 153.3 1070.5 153.8C1072.4 154.2 1074.4 154.7 1076.3 155.2C1078.2 155.8 1080.1 156.3 1082.1 156.9C1084.0 157.5 1085.9 158.1 1087.8 158.7C1089.7 159.4 1091.6 160.0 1093.4 160.7C1095.3 161.4 1097.2 162.2 1099.0 163.0C1100.8 163.7 1102.6 164.6 1104.4 165.4C1106.2 166.3 1108.0 167.2 1109.8 168.1C1111.6 169.1 1113.3 170.0 1115.1 171.0C1116.8 172.0 1118.6 172.9 1120.3 174.0C1122.0 175.0 1123.7 176.0 1125.3 177.2C1127.0 178.3 1128.6 179.5 1130.2 180.7C1131.7 182.0 1133.2 183.3 1134.7 184.6C1136.1 186.0 1137.5 187.4 1138.9 188.8C1140.3 190.3 1141.7 191.7 1143.1 193.2C1144.4 194.7 1145.8 196.1 1147.1 197.6C1148.5 199.1 1149.8 200.6 1151.2 202.0C1152.5 203.5 1153.9 205.0 1155.2 206.5C1156.6 207.9 1157.9 209.4 1159.2 210.9C1160.6 212.4 1161.9 213.9 1163.1 215.5C1164.4 217.0 1165.7 218.6 1166.9 220.1C1168.2 221.7 1169.4 223.3 1170.6 224.9C1171.8 226.5 1173.0 228.1 1174.2 229.7C1175.3 231.3 1176.5 233.0 1177.7 234.6C1178.8 236.2 1180.0 237.9 1181.1 239.5C1182.2 241.1 1183.4 242.8 1184.5 244.4C1185.6 246.1 1186.7 247.8 1187.9 249.4C1189.0 251.1 1190.1 252.7 1191.2 254.4C1192.3 256.1 1193.4 257.8 1194.5 259.4C1195.5 261.1 1196.6 262.8 1197.7 264.5C1198.8 266.2 1199.9 267.9 1200.9 269.6C1202.0 271.2 1203.1 272.9 1204.1 274.6C1205.2 276.3 1206.2 278.0 1207.2 279.8C1208.2 281.5 1209.3 283.2 1210.2 285.0C1211.2 286.7 1212.2 288.5 1213.1 290.2C1214.1 292.0 1215.0 293.8 1215.9 295.6C1216.8 297.3 1217.6 299.1 1218.5 300.9C1219.4 302.7 1220.3 304.5 1221.2 306.3C1222.1 308.1 1223.1 309.8 1224.0 311.6C1225.0 313.3 1225.9 315.1 1226.9 316.8C1227.9 318.6 1228.9 320.3 1229.9 322.0C1230.9 323.7 1232.0 325.5 1233.0 327.2C1234.0 328.9 1235.0 330.6 1236.0 332.4C1237.0 334.1 1237.9 335.9 1238.9 337.6C1239.9 339.4 1240.8 341.1 1241.7 342.9C1242.7 344.7 1243.6 346.5 1244.5 348.2C1245.5 350.0 1246.5 351.7 1247.5 353.4C1248.5 355.1 1249.5 356.8 1250.6 358.5C1251.7 360.2 1252.9 361.8 1254.0 363.4C1255.1 365.1 1256.3 366.7 1257.3 368.3C1258.4 370.0 1259.5 371.7 1260.5 373.4C1261.5 375.1 1262.5 376.9 1263.5 378.6C1264.4 380.4 1265.3 382.2 1266.3 383.9C1267.2 385.7 1268.1 387.5 1269.0 389.3C1269.9 391.0 1270.9 392.8 1271.8 394.6C1272.7 396.4 1273.6 398.1 1274.6 399.9C1275.5 401.7 1276.4 403.5 1277.3 405.2C1278.2 407.0 1279.2 408.8 1280.1 410.6C1280.9 412.4 1281.8 414.2 1282.6 416.0C1283.4 417.8 1284.2 419.7 1284.9 421.5C1285.6 423.4 1286.2 425.3 1286.7 427.2C1287.2 429.2 1287.6 431.1 1288.0 433.1C1288.3 435.0 1288.5 437.0 1288.7 439.0C1288.8 441.0 1288.9 443.0 1288.8 445.0C1288.7 446.9 1288.5 448.9 1288.2 450.9C1287.9 452.8 1287.5 454.8 1286.9 456.7C1286.4 458.6 1285.7 460.4 1284.9 462.3C1284.1 464.1 1283.2 465.9 1282.2 467.6C1281.2 469.3 1280.1 471.0 1279.0 472.7C1277.8 474.3 1276.5 475.9 1275.2 477.4C1273.8 478.9 1272.4 480.3 1270.9 481.6C1269.3 482.9 1267.7 484.2 1266.0 485.3C1264.4 486.4 1262.6 487.5 1260.8 488.4C1259.0 489.4 1257.2 490.2 1255.3 491.0C1253.4 491.8 1251.5 492.5 1249.6 493.1C1247.7 493.8 1245.8 494.4 1243.9 495.0C1242.0 495.6 1240.0 496.1 1238.1 496.6C1236.1 497.2 1234.2 497.7 1232.2 498.1C1230.3 498.6 1228.4 499.1 1226.4 499.6C1224.5 500.1 1222.5 500.5 1220.6 501.0C1218.6 501.5 1216.7 501.9 1214.7 502.4C1212.8 502.8 1210.8 503.3 1208.9 503.8C1207.0 504.3 1205.1 504.8 1203.2 505.3C1201.3 505.9 1199.5 506.5 1197.7 507.2C1195.8 508.0 1194.1 508.7 1192.3 509.6C1190.6 510.5 1188.9 511.4 1187.3 512.5C1185.7 513.5 1184.2 514.7 1182.7 515.9C1181.3 517.2 1179.9 518.5 1178.6 519.9C1177.3 521.4 1176.1 522.9 1175.1 524.4C1174.0 526.0 1173.0 527.7 1172.3 529.4C1171.5 531.0 1170.8 532.8 1170.4 534.6C1169.9 536.3 1169.7 538.2 1169.6 540.1C1169.5 541.9 1169.6 543.9 1169.7 545.8C1169.8 547.7 1170.1 549.7 1170.3 551.7C1170.6 553.6 1170.9 555.6 1171.2 557.6C1171.5 559.5 1171.8 561.5 1172.1 563.5C1172.5 565.4 1172.8 567.4 1173.1 569.4C1173.4 571.4 1173.7 573.4 1173.9 575.4C1174.0 577.4 1174.1 579.5 1174.0 581.5C1173.8 583.5 1173.5 585.6 1173.0 587.5C1172.5 589.5 1171.8 591.4 1171.0 593.3C1170.1 595.1 1169.1 596.9 1167.9 598.6C1166.7 600.3 1165.4 601.9 1164.0 603.4C1162.6 604.8 1161.0 606.2 1159.4 607.5C1157.7 608.8 1156.0 610.0 1154.2 611.0C1152.4 612.0 1150.5 612.9 1148.6 613.7C1146.7 614.5 1144.7 615.2 1142.7 615.8C1140.7 616.3 1138.7 616.8 1136.7 617.2C1134.7 617.7 1132.7 618.0 1130.7 618.4C1128.7 618.7 1126.7 619.0 1124.7 619.3C1122.7 619.6 1120.8 619.9 1118.8 620.1C1116.8 620.4 1114.8 620.6 1112.8 620.9C1110.8 621.1 1108.8 621.4 1106.8 621.6C1104.9 621.8 1102.9 622.1 1100.9 622.3C1098.9 622.6 1096.9 622.8 1094.9 623.1C1093.0 623.3 1091.0 623.6 1089.0 623.8C1087.0 624.1 1085.1 624.3 1083.1 624.6C1081.1 624.9 1079.1 625.2 1077.2 625.5C1075.2 625.7 1073.2 626.0 1071.3 626.3C1069.3 626.7 1067.3 627.0 1065.4 627.3C1063.4 627.6 1061.4 627.9 1059.5 628.3C1057.5 628.6 1055.5 628.9 1053.6 629.3C1051.6 629.6 1049.6 629.9 1047.7 630.3C1045.7 630.6 1043.7 631.0 1041.7 631.3C1039.8 631.6 1037.8 632.0 1035.8 632.3C1033.9 632.7 1031.9 633.0 1029.9 633.3C1027.9 633.7 1026.0 634.0 1024.0 634.4C1022.0 634.7 1020.0 635.0 1018.1 635.4C1016.1 635.7 1014.1 636.0 1012.1 636.3C1010.2 636.7 1008.2 637.0 1006.2 637.3C1004.2 637.6 1002.3 638.0 1000.3 638.3C998.3 638.6 996.4 638.9 994.4 639.3C992.4 639.6 990.4 639.9 988.5 640.2C986.5 640.6 984.5 640.9 982.5 641.2C980.6 641.5 978.6 641.9 976.6 642.2C974.7 642.5 972.7 642.9 970.7 643.2C968.8 643.5 966.8 643.9 964.8 644.2C962.9 644.6 960.9 644.9 959.0 645.3C957.0 645.7 955.0 646.0 953.1 646.4C951.1 646.7 949.2 647.1 947.2 647.5C945.2 647.9 943.3 648.3 941.3 648.7C939.4 649.0 937.4 649.4 935.5 649.8C933.5 650.2 931.6 650.6 929.6 651.0C927.7 651.5 925.8 651.9 923.8 652.3C921.9 652.7 920.0 653.2 918.0 653.6C916.1 654.1 914.2 654.5 912.2 655.0C910.3 655.5 908.4 656.0 906.4 656.4C904.5 656.9 902.5 657.4 900.5 657.8C898.5 658.2 896.5 658.7 894.5 659.0C892.5 659.3 890.5 659.7 888.4 659.8C886.4 660.0 884.3 660.0 882.2 659.9C880.2 659.7 878.1 659.4 876.1 658.9C874.1 658.5 872.2 657.8 870.3 657.0C868.4 656.2 866.6 655.2 864.8 654.2C863.0 653.2 861.3 652.1 859.6 650.9C858.0 649.8 856.3 648.6 854.8 647.3C853.2 646.0 851.7 644.6 850.3 643.1C848.9 641.6 847.6 640.1 846.4 638.4C845.3 636.8 844.3 635.0 843.4 633.2C842.5 631.4 841.7 629.5 841.0 627.7C840.3 625.8 839.7 623.9 839.1 621.9C838.5 620.0 837.9 618.1 837.3 616.2C836.7 614.3 836.1 612.4 835.4 610.6C834.7 608.7 834.0 606.9 833.2 605.1C832.4 603.3 831.5 601.6 830.5 600.0C829.5 598.3 828.4 596.8 827.2 595.3C826.0 593.9 824.6 592.5 823.2 591.3C821.7 590.1 820.2 589.0 818.6 588.0C817.0 587.0 815.2 586.2 813.5 585.4C811.7 584.7 809.9 584.1 808.1 583.6C806.2 583.0 804.3 582.6 802.4 582.2C800.5 581.8 798.5 581.5 796.6 581.2C794.6 580.9 792.7 580.7 790.7 580.5C788.7 580.3 786.8 580.2 784.8 580.0C782.8 579.9 780.9 579.9 778.9 579.9C776.9 579.8 774.9 579.8 772.9 579.9C770.9 579.9 768.9 579.9 766.9 579.9C764.9 580.0 762.9 580.0 760.9 580.1C758.9 580.1 756.9 580.1 754.9 580.2C752.9 580.2 750.9 580.2 748.9 580.3C746.9 580.3 744.9 580.3 742.9 580.3C740.9 580.3 738.9 580.3 736.9 580.2C734.9 580.1 732.8 580.1 730.8 579.9C728.8 579.8 726.8 579.6 724.8 579.4C722.8 579.2 720.7 578.9 718.8 578.5C716.8 578.1 714.8 577.7 712.8 577.1C710.9 576.6 708.9 575.9 707.0 575.1C705.2 574.4 703.3 573.5 701.6 572.5C699.8 571.5 698.1 570.4 696.4 569.2C694.8 568.0 693.2 566.7 691.7 565.4C690.2 564.1 688.7 562.6 687.4 561.2C686.0 559.7 684.7 558.1 683.5 556.6C682.2 555.0 681.1 553.4 679.9 551.7C678.7 550.1 677.6 548.5 676.4 546.8C675.3 545.2 674.2 543.4 673.2 541.8C672.2 540.2 671.2 538.7 670.5 537.2C669.7 535.6 669.0 534.1 668.6 532.7C668.1 531.2 667.8 530.0 667.5 528.5Z" fill="url(#chan)" fill-rule="evenodd"/>
<path d="M671.5 527.7C671.3 526.3 671.1 524.8 670.9 523.1C670.8 521.4 670.6 519.6 670.5 517.7C670.3 515.9 670.2 513.8 670.0 511.8C669.9 509.8 669.8 507.9 669.7 505.9C669.6 503.9 669.5 501.9 669.4 499.9C669.3 497.9 669.2 495.9 669.2 494.0C669.1 492.0 669.0 490.0 669.0 488.0C668.9 486.0 668.9 484.0 668.8 482.1C668.8 480.1 668.8 478.1 668.8 476.1C668.8 474.1 668.9 472.2 668.9 470.2C668.9 468.2 669.0 466.2 669.0 464.2C669.1 462.2 669.2 460.2 669.2 458.2C669.3 456.3 669.4 454.2 669.4 452.2C669.5 450.2 669.6 448.2 669.6 446.2C669.7 444.2 669.7 442.2 669.8 440.2C669.8 438.2 669.9 436.2 669.9 434.2C670.0 432.2 670.0 430.2 670.0 428.2C670.1 426.2 670.1 424.2 670.2 422.2C670.2 420.2 670.3 418.2 670.4 416.3C670.4 414.3 670.5 412.3 670.6 410.3C670.7 408.3 670.8 406.3 670.9 404.3C671.0 402.3 671.1 400.4 671.2 398.4C671.3 396.4 671.4 394.4 671.5 392.4C671.7 390.4 671.8 388.5 671.9 386.5C672.1 384.5 672.2 382.5 672.4 380.6C672.6 378.6 672.8 376.6 673.0 374.7C673.2 372.7 673.4 370.7 673.7 368.8C673.9 366.8 674.2 364.9 674.5 362.9C674.8 361.0 675.1 359.0 675.4 357.1C675.8 355.1 676.1 353.1 676.4 351.2C676.8 349.2 677.2 347.3 677.5 345.3C677.9 343.3 678.3 341.4 678.6 339.4C679.0 337.4 679.3 335.4 679.7 333.5C680.0 331.5 680.4 329.5 680.7 327.5C681.0 325.5 681.3 323.5 681.6 321.6C681.9 319.6 682.2 317.6 682.5 315.7C682.9 313.8 683.2 311.9 683.6 310.0C684.0 308.1 684.5 306.2 684.9 304.3C685.4 302.4 686.0 300.5 686.5 298.7C687.1 296.8 687.7 295.0 688.3 293.1C688.9 291.3 689.6 289.4 690.3 287.6C691.0 285.8 691.7 284.0 692.5 282.2C693.2 280.4 694.0 278.6 694.9 276.9C695.7 275.1 696.6 273.4 697.5 271.7C698.4 270.0 699.4 268.3 700.4 266.7C701.4 265.0 702.4 263.3 703.5 261.7C704.5 260.1 705.6 258.4 706.7 256.8C707.9 255.2 709.0 253.7 710.2 252.1C711.3 250.5 712.5 249.0 713.8 247.4C715.0 245.9 716.2 244.4 717.5 242.9C718.8 241.4 720.0 240.0 721.4 238.5C722.7 237.1 724.0 235.7 725.4 234.3C726.7 232.9 728.1 231.5 729.5 230.2C731.0 228.9 732.4 227.6 733.9 226.4C735.4 225.1 736.9 223.9 738.4 222.7C739.9 221.5 741.5 220.4 743.1 219.3C744.7 218.2 746.3 217.1 747.9 216.0C749.6 215.0 751.3 213.9 752.9 212.9C754.6 211.9 756.3 210.9 758.0 209.9C759.7 208.9 761.4 207.9 763.2 207.0C764.9 206.0 766.6 205.1 768.4 204.1C770.1 203.2 771.9 202.3 773.6 201.4C775.4 200.5 777.2 199.6 778.9 198.7C780.7 197.9 782.5 197.0 784.3 196.2C786.1 195.4 787.9 194.5 789.7 193.7C791.5 192.9 793.3 192.2 795.1 191.4C796.9 190.6 798.8 189.9 800.6 189.1C802.4 188.4 804.3 187.7 806.1 187.0C808.0 186.3 809.8 185.7 811.7 185.0C813.5 184.4 815.4 183.8 817.3 183.2C819.1 182.6 821.0 182.0 822.9 181.4C824.8 180.9 826.7 180.3 828.6 179.8C830.5 179.3 832.4 178.8 834.3 178.3C836.2 177.8 838.2 177.3 840.1 176.9C842.0 176.4 843.9 176.0 845.9 175.6C847.8 175.2 849.8 174.8 851.7 174.4C853.7 174.0 855.6 173.6 857.5 173.2C859.5 172.8 861.5 172.4 863.4 172.1C865.4 171.7 867.3 171.4 869.3 171.0C871.3 170.6 873.2 170.3 875.2 169.9C877.2 169.6 879.2 169.2 881.2 168.8C883.1 168.4 885.1 168.0 887.1 167.5C889.1 167.1 891.0 166.7 893.0 166.2C895.0 165.7 896.9 165.2 898.9 164.8C900.8 164.3 902.8 163.8 904.7 163.3C906.6 162.9 908.6 162.4 910.5 161.9C912.4 161.5 914.3 161.0 916.3 160.6C918.2 160.2 920.1 159.8 922.1 159.4C924.0 159.1 925.9 158.7 927.9 158.4C929.8 158.1 931.8 157.7 933.7 157.5C935.7 157.2 937.6 156.9 939.6 156.6C941.6 156.4 943.5 156.1 945.5 155.9C947.5 155.7 949.4 155.5 951.4 155.3C953.4 155.0 955.4 154.8 957.3 154.7C959.3 154.5 961.3 154.3 963.3 154.1C965.3 154.0 967.2 153.8 969.2 153.7C971.2 153.5 973.2 153.4 975.2 153.2C977.1 153.1 979.1 153.0 981.1 152.9C983.1 152.8 985.1 152.7 987.0 152.6C989.0 152.5 991.0 152.5 993.0 152.4C995.0 152.3 997.0 152.3 998.9 152.3C1000.9 152.2 1002.9 152.2 1004.9 152.2C1006.9 152.2 1008.9 152.2 1010.8 152.2C1012.8 152.2 1014.8 152.3 1016.8 152.3C1018.8 152.4 1020.8 152.4 1022.7 152.5C1024.7 152.5 1026.7 152.6 1028.7 152.7C1030.7 152.8 1032.6 152.9 1034.6 153.0C1036.6 153.1 1038.6 153.3 1040.5 153.4C1042.5 153.6 1044.5 153.8 1046.4 153.9C1048.4 154.1 1050.3 154.4 1052.3 154.6C1054.2 154.9 1056.1 155.1 1058.1 155.5C1060.0 155.8 1061.9 156.1 1063.8 156.5C1065.7 156.9 1067.6 157.3 1069.5 157.7C1071.4 158.2 1073.3 158.7 1075.2 159.2C1077.1 159.7 1079.0 160.3 1080.9 160.8C1082.7 161.4 1084.6 162.0 1086.5 162.6C1088.3 163.2 1090.2 163.9 1092.0 164.6C1093.8 165.2 1095.6 166.0 1097.4 166.7C1099.2 167.5 1100.9 168.3 1102.7 169.1C1104.4 170.0 1106.2 170.9 1107.9 171.8C1109.6 172.7 1111.4 173.6 1113.1 174.6C1114.8 175.5 1116.5 176.5 1118.2 177.5C1119.8 178.5 1121.5 179.5 1123.0 180.6C1124.6 181.6 1126.1 182.7 1127.6 183.9C1129.1 185.1 1130.5 186.3 1131.9 187.6C1133.3 188.9 1134.6 190.3 1136.0 191.7C1137.4 193.1 1138.7 194.5 1140.1 196.0C1141.4 197.4 1142.8 198.9 1144.1 200.4C1145.5 201.9 1146.8 203.3 1148.2 204.8C1149.5 206.3 1150.9 207.7 1152.2 209.2C1153.5 210.7 1154.8 212.2 1156.2 213.6C1157.5 215.1 1158.7 216.6 1160.0 218.1C1161.3 219.6 1162.5 221.1 1163.7 222.7C1165.0 224.2 1166.2 225.8 1167.3 227.3C1168.5 228.9 1169.7 230.5 1170.9 232.1C1172.0 233.7 1173.2 235.3 1174.3 236.9C1175.5 238.6 1176.6 240.2 1177.7 241.8C1178.9 243.5 1180.0 245.1 1181.1 246.8C1182.2 248.4 1183.3 250.1 1184.4 251.7C1185.6 253.4 1186.7 255.0 1187.7 256.7C1188.8 258.3 1189.9 260.0 1191.0 261.7C1192.1 263.3 1193.2 265.0 1194.3 266.7C1195.3 268.4 1196.4 270.1 1197.5 271.7C1198.5 273.4 1199.6 275.1 1200.6 276.8C1201.7 278.5 1202.7 280.2 1203.7 281.9C1204.7 283.6 1205.7 285.3 1206.7 287.0C1207.6 288.7 1208.6 290.4 1209.5 292.1C1210.4 293.9 1211.3 295.6 1212.2 297.4C1213.1 299.2 1214.0 301.0 1214.9 302.8C1215.7 304.5 1216.6 306.4 1217.6 308.2C1218.5 310.0 1219.4 311.8 1220.4 313.5C1221.4 315.3 1222.4 317.1 1223.4 318.9C1224.4 320.6 1225.4 322.4 1226.4 324.1C1227.4 325.8 1228.4 327.5 1229.4 329.3C1230.4 331.0 1231.4 332.7 1232.4 334.4C1233.4 336.1 1234.3 337.9 1235.3 339.6C1236.3 341.3 1237.2 343.1 1238.1 344.8C1239.1 346.6 1240.0 348.4 1240.9 350.2C1241.9 351.9 1242.9 353.8 1243.9 355.5C1245.0 357.3 1246.1 359.0 1247.2 360.7C1248.3 362.4 1249.5 364.1 1250.6 365.7C1251.7 367.4 1252.9 369.0 1253.9 370.6C1255.0 372.2 1256.0 373.8 1257.0 375.5C1258.0 377.2 1258.9 378.9 1259.9 380.6C1260.8 382.3 1261.7 384.1 1262.6 385.8C1263.6 387.6 1264.5 389.4 1265.4 391.2C1266.3 392.9 1267.2 394.7 1268.1 396.5C1269.1 398.3 1270.0 400.0 1270.9 401.8C1271.8 403.6 1272.8 405.4 1273.7 407.1C1274.6 408.9 1275.5 410.6 1276.4 412.4C1277.2 414.2 1278.1 415.9 1278.9 417.7C1279.7 419.4 1280.4 421.2 1281.0 422.9C1281.7 424.7 1282.2 426.5 1282.7 428.3C1283.2 430.1 1283.6 431.9 1283.9 433.8C1284.2 435.6 1284.5 437.4 1284.6 439.3C1284.7 441.1 1284.8 443.0 1284.7 444.8C1284.6 446.6 1284.4 448.4 1284.1 450.2C1283.8 452.0 1283.4 453.7 1282.8 455.4C1282.3 457.1 1281.6 458.8 1280.8 460.4C1280.0 462.0 1279.0 463.5 1278.0 465.0C1277.0 466.5 1275.8 467.9 1274.6 469.3C1273.4 470.7 1272.2 472.0 1270.8 473.2C1269.5 474.4 1268.1 475.5 1266.7 476.6C1265.3 477.6 1263.8 478.6 1262.3 479.5C1260.8 480.4 1259.2 481.2 1257.5 482.0C1255.9 482.8 1254.2 483.5 1252.5 484.2C1250.8 484.9 1249.0 485.6 1247.2 486.2C1245.4 486.8 1243.6 487.4 1241.7 487.9C1239.9 488.5 1238.0 489.0 1236.1 489.5C1234.3 490.0 1232.3 490.5 1230.4 491.0C1228.5 491.5 1226.6 491.9 1224.7 492.4C1222.7 492.9 1220.8 493.3 1218.9 493.8C1216.9 494.2 1215.0 494.7 1213.0 495.2C1211.0 495.6 1209.1 496.1 1207.1 496.6C1205.1 497.1 1203.0 497.6 1201.0 498.3C1199.0 498.9 1197.0 499.6 1195.0 500.4C1193.0 501.1 1190.9 502.0 1189.0 503.0C1187.0 504.0 1185.1 505.1 1183.2 506.3C1181.4 507.5 1179.6 508.8 1177.9 510.3C1176.2 511.7 1174.6 513.3 1173.1 515.0C1171.6 516.7 1170.2 518.4 1168.9 520.3C1167.7 522.2 1166.5 524.2 1165.5 526.2C1164.6 528.3 1163.8 530.6 1163.2 532.8C1162.7 535.0 1162.4 537.4 1162.2 539.6C1162.1 541.9 1162.2 544.1 1162.3 546.2C1162.5 548.4 1162.7 550.5 1163.0 552.6C1163.3 554.6 1163.6 556.7 1163.9 558.7C1164.2 560.7 1164.5 562.7 1164.8 564.7C1165.2 566.6 1165.5 568.6 1165.8 570.5C1166.1 572.3 1166.4 574.2 1166.5 575.9C1166.6 577.7 1166.7 579.3 1166.6 581.0C1166.4 582.6 1166.2 584.1 1165.8 585.6C1165.4 587.1 1164.8 588.5 1164.1 589.9C1163.3 591.3 1162.4 592.7 1161.5 593.9C1160.5 595.1 1159.3 596.3 1158.1 597.4C1156.9 598.4 1155.5 599.4 1154.2 600.2C1152.8 601.1 1151.3 601.8 1149.8 602.5C1148.3 603.1 1146.7 603.6 1145.1 604.1C1143.5 604.5 1141.8 604.9 1140.0 605.2C1138.3 605.5 1136.5 605.8 1134.6 606.1C1132.8 606.3 1130.9 606.6 1129.0 606.8C1127.0 607.1 1125.1 607.3 1123.1 607.5C1121.2 607.8 1119.2 608.0 1117.3 608.3C1115.3 608.5 1113.3 608.7 1111.3 609.0C1109.4 609.2 1107.4 609.4 1105.4 609.7C1103.4 609.9 1101.4 610.2 1099.4 610.4C1097.4 610.7 1095.4 610.9 1093.4 611.1C1091.4 611.4 1089.4 611.7 1087.4 611.9C1085.4 612.2 1083.4 612.4 1081.4 612.7C1079.4 613.0 1077.4 613.3 1075.4 613.6C1073.4 613.9 1071.4 614.2 1069.4 614.5C1067.4 614.8 1065.4 615.1 1063.5 615.4C1061.5 615.8 1059.5 616.1 1057.5 616.4C1055.5 616.8 1053.5 617.1 1051.5 617.4C1049.6 617.8 1047.6 618.1 1045.6 618.4C1043.6 618.8 1041.7 619.1 1039.7 619.5C1037.7 619.8 1035.8 620.2 1033.8 620.5C1031.8 620.8 1029.8 621.2 1027.9 621.5C1025.9 621.9 1024.0 622.2 1022.0 622.5C1020.0 622.9 1018.1 623.2 1016.1 623.5C1014.1 623.9 1012.2 624.2 1010.2 624.5C1008.2 624.8 1006.2 625.2 1004.3 625.5C1002.3 625.8 1000.3 626.1 998.4 626.4C996.4 626.8 994.4 627.1 992.4 627.4C990.5 627.7 988.5 628.1 986.5 628.4C984.5 628.7 982.6 629.0 980.6 629.4C978.6 629.7 976.6 630.0 974.6 630.4C972.7 630.7 970.7 631.0 968.7 631.4C966.7 631.7 964.7 632.1 962.7 632.4C960.8 632.8 958.8 633.1 956.8 633.5C954.8 633.8 952.8 634.2 950.9 634.6C948.9 635.0 946.9 635.3 944.9 635.7C942.9 636.1 940.9 636.5 939.0 636.9C937.0 637.3 935.0 637.7 933.0 638.2C931.0 638.6 929.0 639.1 927.1 639.5C925.1 640.0 923.1 640.5 921.1 641.0C919.1 641.6 917.1 642.1 915.2 642.7C913.2 643.3 911.3 643.9 909.3 644.5C907.4 645.1 905.5 645.7 903.6 646.3C901.7 646.9 899.9 647.5 898.1 648.1C896.2 648.6 894.4 649.2 892.7 649.6C890.9 650.0 889.2 650.4 887.5 650.6C885.8 650.8 884.2 651.0 882.7 651.0C881.1 650.9 879.6 650.8 878.1 650.5C876.5 650.2 875.0 649.7 873.4 649.1C871.9 648.5 870.3 647.8 868.7 647.0C867.2 646.2 865.6 645.3 864.0 644.3C862.5 643.4 861.0 642.4 859.5 641.3C858.1 640.2 856.7 639.2 855.5 638.0C854.3 636.8 853.1 635.6 852.1 634.3C851.1 633.0 850.2 631.6 849.4 630.1C848.6 628.6 847.9 627.0 847.3 625.3C846.6 623.6 846.0 621.7 845.4 619.9C844.8 618.0 844.2 616.1 843.6 614.2C843.0 612.2 842.4 610.3 841.7 608.3C841.0 606.3 840.3 604.3 839.4 602.3C838.5 600.3 837.6 598.3 836.5 596.4C835.4 594.4 834.2 592.5 832.8 590.7C831.4 588.9 829.9 587.2 828.2 585.6C826.5 584.0 824.7 582.6 822.8 581.3C820.9 580.0 818.8 578.9 816.8 577.9C814.7 577.0 812.6 576.2 810.5 575.5C808.4 574.8 806.2 574.3 804.1 573.8C802.0 573.4 799.9 573.0 797.8 572.7C795.7 572.4 793.6 572.1 791.5 571.9C789.5 571.7 787.4 571.6 785.3 571.5C783.2 571.3 781.1 571.3 779.0 571.3C776.9 571.2 774.9 571.2 772.8 571.3C770.8 571.3 768.8 571.3 766.8 571.4C764.8 571.4 762.8 571.4 760.8 571.5C758.8 571.5 756.8 571.5 754.8 571.6C752.8 571.6 750.8 571.6 748.8 571.7C746.9 571.7 744.9 571.7 742.9 571.7C741.0 571.7 739.0 571.7 737.1 571.6C735.2 571.6 733.3 571.5 731.4 571.4C729.5 571.2 727.6 571.1 725.7 570.9C723.9 570.7 722.1 570.5 720.3 570.2C718.5 569.9 716.8 569.5 715.0 569.1C713.3 568.7 711.7 568.2 710.0 567.6C708.4 567.0 706.8 566.4 705.2 565.6C703.6 564.9 702.1 564.1 700.5 563.2C699.0 562.2 697.5 561.3 696.1 560.2C694.6 559.1 693.2 558.0 691.8 556.8C690.5 555.5 689.2 554.2 687.9 552.9C686.6 551.5 685.3 550.0 684.1 548.5C682.9 547.1 681.6 545.5 680.4 544.0C679.3 542.5 678.1 540.8 677.0 539.3C676.0 537.9 675.0 536.5 674.3 535.1C673.5 533.8 673.0 532.5 672.5 531.3C672.1 530.1 671.8 529.1 671.5 527.7ZM667.7 528.4C667.4 526.9 667.2 525.2 667.1 523.5C666.9 521.8 666.7 520.0 666.6 518.0C666.4 516.1 666.3 514.1 666.1 512.1C666.0 510.1 665.9 508.1 665.8 506.1C665.7 504.1 665.6 502.1 665.5 500.1C665.4 498.1 665.3 496.1 665.3 494.1C665.2 492.1 665.1 490.1 665.1 488.1C665.0 486.1 665.0 484.1 664.9 482.1C664.9 480.1 664.9 478.1 664.9 476.1C664.9 474.1 665.0 472.1 665.0 470.1C665.0 468.1 665.1 466.1 665.1 464.1C665.2 462.1 665.3 460.1 665.3 458.1C665.4 456.1 665.5 454.1 665.6 452.1C665.6 450.1 665.7 448.1 665.7 446.1C665.8 444.1 665.8 442.1 665.9 440.1C665.9 438.1 666.0 436.1 666.0 434.1C666.1 432.1 666.1 430.1 666.1 428.1C666.2 426.1 666.2 424.1 666.3 422.1C666.3 420.1 666.4 418.1 666.5 416.1C666.5 414.1 666.6 412.1 666.7 410.1C666.8 408.1 666.9 406.1 667.0 404.1C667.1 402.1 667.2 400.1 667.3 398.2C667.4 396.2 667.5 394.2 667.6 392.2C667.8 390.2 667.9 388.2 668.0 386.2C668.2 384.2 668.4 382.2 668.5 380.2C668.7 378.2 668.9 376.2 669.1 374.2C669.3 372.2 669.6 370.3 669.8 368.3C670.1 366.3 670.3 364.3 670.6 362.3C670.9 360.4 671.3 358.4 671.6 356.4C671.9 354.4 672.3 352.5 672.6 350.5C673.0 348.5 673.3 346.6 673.7 344.6C674.0 342.6 674.4 340.7 674.8 338.7C675.1 336.7 675.5 334.8 675.8 332.8C676.2 330.8 676.5 328.9 676.8 326.9C677.1 324.9 677.4 322.9 677.8 321.0C678.1 319.0 678.4 317.0 678.7 315.0C679.0 313.1 679.4 311.1 679.8 309.2C680.2 307.2 680.7 305.3 681.2 303.3C681.7 301.4 682.2 299.5 682.8 297.6C683.4 295.6 684.0 293.7 684.6 291.8C685.3 290.0 685.9 288.1 686.6 286.2C687.4 284.3 688.1 282.5 688.9 280.7C689.7 278.8 690.5 277.0 691.4 275.2C692.2 273.4 693.1 271.6 694.1 269.9C695.0 268.1 696.0 266.4 697.0 264.7C698.0 262.9 699.1 261.3 700.2 259.6C701.3 257.9 702.4 256.2 703.5 254.6C704.7 253.0 705.9 251.4 707.0 249.8C708.2 248.2 709.5 246.6 710.7 245.0C712.0 243.4 713.2 241.9 714.5 240.4C715.8 238.9 717.1 237.4 718.5 235.9C719.8 234.4 721.2 233.0 722.6 231.5C724.0 230.1 725.4 228.7 726.9 227.4C728.4 226.0 729.8 224.7 731.4 223.4C732.9 222.1 734.4 220.9 736.0 219.6C737.6 218.4 739.2 217.2 740.9 216.1C742.5 214.9 744.1 213.8 745.8 212.7C747.5 211.7 749.2 210.6 750.9 209.6C752.6 208.5 754.3 207.5 756.1 206.5C757.8 205.5 759.5 204.5 761.3 203.6C763.0 202.6 764.8 201.6 766.5 200.7C768.3 199.7 770.1 198.8 771.9 197.9C773.6 197.0 775.4 196.1 777.2 195.2C779.0 194.4 780.8 193.5 782.6 192.7C784.5 191.8 786.3 191.0 788.1 190.2C789.9 189.4 791.8 188.6 793.6 187.8C795.4 187.0 797.3 186.3 799.2 185.5C801.0 184.8 802.9 184.1 804.7 183.4C806.6 182.7 808.5 182.0 810.4 181.3C812.3 180.7 814.2 180.1 816.1 179.5C818.0 178.8 819.9 178.3 821.8 177.7C823.7 177.1 825.6 176.6 827.6 176.0C829.5 175.5 831.4 175.0 833.4 174.5C835.3 174.0 837.3 173.6 839.2 173.1C841.1 172.6 843.1 172.2 845.1 171.8C847.0 171.4 849.0 170.9 850.9 170.5C852.9 170.1 854.8 169.7 856.8 169.4C858.8 169.0 860.7 168.6 862.7 168.2C864.7 167.9 866.6 167.5 868.6 167.2C870.6 166.8 872.5 166.5 874.5 166.1C876.5 165.7 878.4 165.3 880.4 165.0C882.4 164.6 884.3 164.2 886.3 163.7C888.2 163.3 890.2 162.9 892.1 162.4C894.1 161.9 896.0 161.5 897.9 161.0C899.9 160.5 901.8 160.0 903.8 159.6C905.7 159.1 907.7 158.6 909.6 158.1C911.6 157.7 913.5 157.2 915.5 156.8C917.4 156.4 919.4 156.0 921.3 155.6C923.3 155.2 925.3 154.9 927.2 154.5C929.2 154.2 931.2 153.9 933.1 153.6C935.1 153.3 937.1 153.0 939.1 152.8C941.1 152.5 943.1 152.3 945.0 152.0C947.0 151.8 949.0 151.6 951.0 151.4C953.0 151.2 955.0 151.0 957.0 150.8C959.0 150.6 961.0 150.4 962.9 150.2C964.9 150.1 966.9 149.9 968.9 149.8C970.9 149.6 972.9 149.5 974.9 149.3C976.9 149.2 978.9 149.1 980.9 149.0C982.9 148.9 984.9 148.8 986.9 148.7C988.9 148.6 990.9 148.6 992.9 148.5C994.9 148.5 996.9 148.4 998.9 148.4C1000.9 148.3 1002.9 148.3 1004.9 148.3C1006.9 148.3 1008.9 148.3 1010.9 148.3C1012.9 148.3 1014.9 148.4 1016.9 148.4C1018.9 148.5 1020.9 148.5 1022.9 148.6C1024.9 148.6 1026.9 148.7 1028.9 148.8C1030.9 148.9 1032.9 149.0 1034.8 149.1C1036.8 149.2 1038.8 149.4 1040.8 149.5C1042.8 149.7 1044.8 149.9 1046.8 150.1C1048.8 150.3 1050.8 150.5 1052.8 150.7C1054.7 151.0 1056.7 151.3 1058.7 151.6C1060.7 151.9 1062.6 152.3 1064.6 152.7C1066.5 153.1 1068.5 153.5 1070.4 154.0C1072.4 154.4 1074.3 154.9 1076.2 155.4C1078.2 156.0 1080.1 156.5 1082.0 157.1C1083.9 157.7 1085.8 158.3 1087.7 158.9C1089.6 159.5 1091.5 160.2 1093.4 160.9C1095.2 161.6 1097.1 162.4 1098.9 163.1C1100.7 163.9 1102.6 164.8 1104.4 165.6C1106.2 166.5 1107.9 167.4 1109.7 168.3C1111.5 169.3 1113.2 170.2 1115.0 171.2C1116.7 172.1 1118.5 173.1 1120.2 174.1C1121.9 175.2 1123.6 176.2 1125.2 177.3C1126.9 178.5 1128.5 179.6 1130.0 180.9C1131.6 182.1 1133.1 183.4 1134.5 184.8C1136.0 186.1 1137.4 187.5 1138.8 189.0C1140.2 190.4 1141.6 191.9 1142.9 193.3C1144.3 194.8 1145.6 196.3 1147.0 197.8C1148.3 199.2 1149.7 200.7 1151.0 202.2C1152.4 203.6 1153.7 205.1 1155.1 206.6C1156.4 208.1 1157.8 209.6 1159.1 211.1C1160.4 212.6 1161.7 214.1 1163.0 215.6C1164.3 217.1 1165.5 218.7 1166.8 220.2C1168.0 221.8 1169.2 223.4 1170.5 225.0C1171.7 226.6 1172.8 228.2 1174.0 229.8C1175.2 231.4 1176.3 233.1 1177.5 234.7C1178.6 236.3 1179.8 238.0 1180.9 239.6C1182.1 241.3 1183.2 242.9 1184.3 244.6C1185.5 246.2 1186.6 247.9 1187.7 249.5C1188.8 251.2 1189.9 252.9 1191.0 254.5C1192.1 256.2 1193.2 257.9 1194.3 259.6C1195.4 261.2 1196.5 262.9 1197.5 264.6C1198.6 266.3 1199.7 268.0 1200.8 269.7C1201.8 271.3 1202.9 273.0 1203.9 274.7C1205.0 276.4 1206.0 278.2 1207.0 279.9C1208.1 281.6 1209.1 283.3 1210.1 285.1C1211.0 286.8 1212.0 288.5 1212.9 290.3C1213.9 292.1 1214.8 293.9 1215.7 295.6C1216.6 297.4 1217.5 299.2 1218.3 301.0C1219.2 302.8 1220.1 304.6 1221.0 306.4C1221.9 308.2 1222.9 309.9 1223.8 311.7C1224.8 313.4 1225.8 315.2 1226.7 316.9C1227.7 318.7 1228.7 320.4 1229.8 322.1C1230.8 323.8 1231.8 325.6 1232.8 327.3C1233.8 329.0 1234.8 330.7 1235.8 332.5C1236.8 334.2 1237.8 336.0 1238.7 337.7C1239.7 339.5 1240.6 341.2 1241.6 343.0C1242.5 344.8 1243.4 346.5 1244.4 348.3C1245.3 350.1 1246.3 351.8 1247.3 353.5C1248.3 355.3 1249.4 356.9 1250.4 358.6C1251.5 360.3 1252.7 361.9 1253.8 363.5C1254.9 365.2 1256.1 366.8 1257.2 368.5C1258.3 370.1 1259.3 371.8 1260.3 373.5C1261.4 375.2 1262.3 377.0 1263.3 378.7C1264.2 380.5 1265.2 382.3 1266.1 384.0C1267.0 385.8 1267.9 387.6 1268.8 389.4C1269.8 391.1 1270.7 392.9 1271.6 394.7C1272.5 396.5 1273.5 398.2 1274.4 400.0C1275.3 401.8 1276.2 403.6 1277.2 405.3C1278.1 407.1 1279.0 408.9 1279.9 410.7C1280.8 412.5 1281.6 414.3 1282.4 416.1C1283.2 417.9 1284.0 419.7 1284.7 421.6C1285.4 423.5 1286.0 425.4 1286.5 427.3C1287.0 429.2 1287.4 431.1 1287.8 433.1C1288.1 435.1 1288.3 437.0 1288.5 439.0C1288.6 441.0 1288.7 443.0 1288.6 444.9C1288.5 446.9 1288.3 448.9 1288.0 450.8C1287.7 452.8 1287.2 454.7 1286.6 456.6C1286.0 458.4 1285.2 460.3 1284.4 462.0C1283.5 463.8 1282.5 465.5 1281.5 467.1C1280.4 468.8 1279.2 470.4 1277.9 471.9C1276.7 473.4 1275.3 474.8 1273.9 476.2C1272.5 477.5 1271.1 478.8 1269.5 480.0C1268.0 481.2 1266.4 482.2 1264.7 483.3C1263.1 484.3 1261.4 485.2 1259.6 486.1C1257.9 486.9 1256.1 487.7 1254.3 488.4C1252.4 489.2 1250.6 489.9 1248.7 490.5C1246.9 491.2 1245.0 491.7 1243.1 492.3C1241.2 492.9 1239.3 493.4 1237.3 493.9C1235.4 494.5 1233.5 494.9 1231.6 495.4C1229.6 495.9 1227.7 496.4 1225.7 496.9C1223.8 497.3 1221.9 497.8 1219.9 498.3C1218.0 498.7 1216.0 499.2 1214.1 499.6C1212.1 500.1 1210.2 500.5 1208.2 501.0C1206.3 501.6 1204.3 502.1 1202.4 502.7C1200.5 503.3 1198.5 503.9 1196.6 504.6C1194.8 505.4 1192.9 506.2 1191.1 507.1C1189.3 508.0 1187.5 509.0 1185.8 510.1C1184.1 511.2 1182.4 512.5 1180.9 513.8C1179.3 515.1 1177.9 516.5 1176.5 518.1C1175.2 519.6 1173.9 521.2 1172.7 522.9C1171.6 524.6 1170.6 526.3 1169.7 528.2C1168.9 530.0 1168.2 531.9 1167.7 533.9C1167.2 535.8 1166.9 537.9 1166.8 539.9C1166.7 541.9 1166.8 543.9 1166.9 546.0C1167.0 548.0 1167.3 550.0 1167.6 552.0C1167.8 554.0 1168.1 556.0 1168.4 558.0C1168.7 560.0 1169.1 561.9 1169.4 563.9C1169.7 565.9 1170.1 567.9 1170.4 569.8C1170.6 571.7 1171.0 573.7 1171.1 575.6C1171.2 577.5 1171.3 579.4 1171.2 581.3C1171.0 583.2 1170.7 585.0 1170.2 586.8C1169.8 588.6 1169.1 590.3 1168.3 592.0C1167.4 593.6 1166.4 595.2 1165.3 596.7C1164.1 598.1 1162.8 599.5 1161.4 600.8C1160.1 602.0 1158.6 603.2 1157.0 604.2C1155.4 605.2 1153.8 606.1 1152.1 606.9C1150.4 607.6 1148.6 608.3 1146.8 608.8C1145.0 609.4 1143.2 609.8 1141.3 610.2C1139.4 610.5 1137.5 610.8 1135.6 611.1C1133.7 611.4 1131.7 611.7 1129.7 611.9C1127.8 612.2 1125.8 612.4 1123.8 612.7C1121.9 612.9 1119.9 613.2 1117.9 613.4C1115.9 613.7 1114.0 613.9 1112.0 614.1C1110.0 614.4 1108.0 614.6 1106.0 614.8C1104.0 615.1 1102.0 615.3 1100.1 615.6C1098.1 615.8 1096.1 616.1 1094.1 616.3C1092.1 616.6 1090.1 616.8 1088.1 617.1C1086.1 617.3 1084.1 617.6 1082.2 617.9C1080.2 618.2 1078.2 618.4 1076.2 618.7C1074.2 619.0 1072.2 619.3 1070.2 619.6C1068.2 619.9 1066.3 620.3 1064.3 620.6C1062.3 620.9 1060.3 621.2 1058.3 621.6C1056.4 621.9 1054.4 622.2 1052.4 622.6C1050.4 622.9 1048.5 623.2 1046.5 623.6C1044.5 623.9 1042.6 624.3 1040.6 624.6C1038.6 624.9 1036.6 625.3 1034.7 625.6C1032.7 626.0 1030.7 626.3 1028.8 626.6C1026.8 627.0 1024.8 627.3 1022.9 627.7C1020.9 628.0 1018.9 628.3 1016.9 628.7C1015.0 629.0 1013.0 629.3 1011.0 629.6C1009.1 630.0 1007.1 630.3 1005.1 630.6C1003.1 630.9 1001.2 631.3 999.2 631.6C997.2 631.9 995.3 632.2 993.3 632.5C991.3 632.9 989.3 633.2 987.4 633.5C985.4 633.8 983.4 634.2 981.4 634.5C979.5 634.8 977.5 635.2 975.5 635.5C973.5 635.8 971.6 636.2 969.6 636.5C967.6 636.8 965.6 637.2 963.7 637.5C961.7 637.9 959.7 638.2 957.7 638.6C955.8 639.0 953.8 639.3 951.8 639.7C949.8 640.1 947.9 640.4 945.9 640.8C943.9 641.2 942.0 641.6 940.0 642.0C938.0 642.4 936.1 642.8 934.1 643.3C932.1 643.7 930.2 644.1 928.2 644.6C926.2 645.1 924.3 645.5 922.3 646.1C920.4 646.6 918.4 647.1 916.5 647.7C914.6 648.2 912.6 648.8 910.7 649.4C908.8 650.0 906.9 650.6 905.0 651.2C903.1 651.8 901.2 652.5 899.3 653.0C897.4 653.6 895.5 654.1 893.6 654.5C891.8 655.0 889.9 655.4 888.0 655.6C886.1 655.9 884.3 656.0 882.4 656.0C880.6 655.9 878.7 655.7 876.9 655.3C875.1 655.0 873.4 654.4 871.6 653.7C869.8 653.0 868.1 652.2 866.4 651.3C864.7 650.4 863.0 649.4 861.3 648.4C859.7 647.3 858.1 646.2 856.5 645.1C855.0 643.9 853.5 642.6 852.1 641.3C850.8 640.0 849.5 638.6 848.3 637.1C847.2 635.5 846.2 633.9 845.3 632.2C844.4 630.5 843.7 628.7 842.9 626.9C842.2 625.1 841.6 623.2 841.0 621.3C840.4 619.4 839.8 617.5 839.2 615.6C838.6 613.7 838.0 611.8 837.3 609.9C836.6 608.0 835.9 606.1 835.1 604.2C834.3 602.4 833.5 600.6 832.4 598.8C831.4 597.1 830.3 595.4 829.0 593.8C827.8 592.2 826.4 590.7 824.9 589.3C823.4 588.0 821.8 586.7 820.1 585.6C818.4 584.5 816.5 583.6 814.7 582.7C812.8 581.9 810.9 581.2 808.9 580.6C807.0 580.0 805.0 579.5 803.0 579.1C801.0 578.7 799.0 578.3 797.0 578.0C795.0 577.7 793.0 577.5 791.0 577.3C789.0 577.1 787.0 577.0 785.0 576.9C783.0 576.7 780.9 576.7 778.9 576.7C776.9 576.6 774.9 576.6 772.9 576.7C770.9 576.7 768.9 576.7 766.9 576.7C764.9 576.8 762.9 576.8 760.9 576.9C758.9 576.9 756.9 576.9 754.9 577.0C752.9 577.0 750.9 577.0 748.9 577.1C746.9 577.1 744.9 577.1 742.9 577.1C740.9 577.1 738.9 577.1 737.0 577.0C735.0 577.0 733.0 576.9 731.0 576.7C729.1 576.6 727.1 576.5 725.1 576.2C723.2 576.0 721.2 575.8 719.3 575.4C717.4 575.1 715.5 574.7 713.6 574.2C711.8 573.7 709.9 573.1 708.1 572.5C706.3 571.8 704.5 571.0 702.8 570.1C701.1 569.3 699.4 568.3 697.8 567.2C696.1 566.2 694.5 565.0 693.0 563.8C691.5 562.6 690.0 561.3 688.6 560.0C687.2 558.6 685.8 557.2 684.5 555.7C683.2 554.2 681.9 552.7 680.7 551.1C679.5 549.6 678.2 548.0 677.1 546.4C675.9 544.8 674.7 543.1 673.7 541.5C672.6 540.0 671.6 538.5 670.8 537.0C670.0 535.5 669.3 534.0 668.8 532.6C668.3 531.2 668.0 529.9 667.7 528.4Z" fill="#1ff05a" fill-rule="evenodd"/>
<path d="M667.5 528.5C667.2 526.9 667.0 525.3 666.9 523.5C666.7 521.8 666.5 520.0 666.4 518.1C666.2 516.2 666.1 514.1 665.9 512.1C665.8 510.1 665.7 508.1 665.6 506.1C665.5 504.1 665.4 502.1 665.3 500.1C665.2 498.1 665.1 496.1 665.1 494.1C665.0 492.1 664.9 490.1 664.9 488.1C664.8 486.1 664.8 484.1 664.7 482.1C664.7 480.1 664.7 478.1 664.7 476.1C664.7 474.1 664.8 472.1 664.8 470.1C664.8 468.1 664.9 466.1 664.9 464.1C665.0 462.1 665.1 460.1 665.1 458.1C665.2 456.1 665.3 454.1 665.4 452.1C665.4 450.1 665.5 448.1 665.5 446.1C665.6 444.1 665.6 442.1 665.7 440.1C665.7 438.1 665.8 436.1 665.8 434.1C665.9 432.1 665.9 430.1 665.9 428.1C666.0 426.1 666.0 424.1 666.1 422.1C666.1 420.1 666.2 418.1 666.3 416.1C666.3 414.1 666.4 412.1 666.5 410.1C666.6 408.1 666.7 406.1 666.8 404.1C666.9 402.1 667.0 400.1 667.1 398.1C667.2 396.1 667.3 394.1 667.4 392.2C667.6 390.2 667.7 388.2 667.8 386.2C668.0 384.2 668.2 382.2 668.3 380.2C668.5 378.2 668.7 376.2 668.9 374.2C669.1 372.2 669.4 370.2 669.6 368.3C669.9 366.3 670.1 364.3 670.4 362.3C670.7 360.3 671.1 358.4 671.4 356.4C671.7 354.4 672.1 352.4 672.4 350.5C672.8 348.5 673.1 346.5 673.5 344.6C673.9 342.6 674.2 340.6 674.6 338.7C674.9 336.7 675.3 334.7 675.6 332.8C676.0 330.8 676.3 328.8 676.6 326.8C676.9 324.9 677.2 322.9 677.6 320.9C677.9 318.9 678.2 317.0 678.5 315.0C678.9 313.0 679.2 311.1 679.6 309.1C680.0 307.2 680.5 305.2 681.0 303.3C681.5 301.3 682.0 299.4 682.6 297.5C683.2 295.6 683.8 293.7 684.4 291.8C685.1 289.9 685.7 288.0 686.5 286.1C687.2 284.3 687.9 282.4 688.7 280.6C689.5 278.7 690.3 276.9 691.2 275.1C692.0 273.3 692.9 271.5 693.9 269.8C694.8 268.0 695.8 266.3 696.8 264.6C697.9 262.8 698.9 261.1 700.0 259.5C701.1 257.8 702.2 256.1 703.4 254.5C704.5 252.9 705.7 251.2 706.9 249.6C708.1 248.0 709.3 246.5 710.6 244.9C711.8 243.3 713.1 241.8 714.4 240.3C715.7 238.7 717.0 237.2 718.3 235.7C719.7 234.3 721.0 232.8 722.5 231.4C723.9 230.0 725.3 228.6 726.8 227.2C728.2 225.9 729.7 224.5 731.2 223.2C732.8 222.0 734.3 220.7 735.9 219.5C737.5 218.3 739.1 217.1 740.7 215.9C742.4 214.8 744.0 213.7 745.7 212.6C747.4 211.5 749.1 210.4 750.8 209.4C752.5 208.4 754.2 207.3 756.0 206.3C757.7 205.3 759.4 204.4 761.2 203.4C762.9 202.4 764.7 201.5 766.5 200.5C768.2 199.6 770.0 198.6 771.8 197.7C773.6 196.8 775.3 195.9 777.1 195.1C778.9 194.2 780.7 193.3 782.6 192.5C784.4 191.6 786.2 190.8 788.0 190.0C789.9 189.2 791.7 188.4 793.5 187.6C795.4 186.8 797.2 186.1 799.1 185.3C800.9 184.6 802.8 183.9 804.7 183.2C806.6 182.5 808.4 181.8 810.3 181.2C812.2 180.5 814.1 179.9 816.0 179.3C817.9 178.7 819.8 178.1 821.8 177.5C823.7 176.9 825.6 176.4 827.5 175.8C829.5 175.3 831.4 174.8 833.3 174.3C835.3 173.8 837.2 173.4 839.2 172.9C841.1 172.4 843.1 172.0 845.0 171.6C847.0 171.2 848.9 170.7 850.9 170.3C852.8 169.9 854.8 169.5 856.8 169.2C858.7 168.8 860.7 168.4 862.7 168.0C864.6 167.7 866.6 167.3 868.6 167.0C870.5 166.6 872.5 166.3 874.5 165.9C876.4 165.5 878.4 165.2 880.4 164.8C882.3 164.4 884.3 164.0 886.2 163.5C888.2 163.1 890.1 162.7 892.1 162.2C894.0 161.7 896.0 161.3 897.9 160.8C899.8 160.3 901.8 159.8 903.7 159.4C905.7 158.9 907.6 158.4 909.6 158.0C911.5 157.5 913.5 157.0 915.4 156.6C917.4 156.2 919.3 155.8 921.3 155.4C923.3 155.0 925.2 154.7 927.2 154.3C929.2 154.0 931.1 153.7 933.1 153.4C935.1 153.1 937.1 152.8 939.1 152.6C941.0 152.3 943.0 152.1 945.0 151.8C947.0 151.6 949.0 151.4 951.0 151.2C953.0 151.0 955.0 150.8 957.0 150.6C958.9 150.4 960.9 150.2 962.9 150.0C964.9 149.9 966.9 149.7 968.9 149.6C970.9 149.4 972.9 149.3 974.9 149.1C976.9 149.0 978.9 148.9 980.9 148.8C982.9 148.7 984.9 148.6 986.9 148.5C988.9 148.4 990.9 148.4 992.9 148.3C994.9 148.3 996.9 148.2 998.9 148.2C1000.9 148.1 1002.9 148.1 1004.9 148.1C1006.9 148.1 1008.9 148.1 1010.9 148.1C1012.9 148.1 1014.9 148.2 1016.9 148.2C1018.9 148.3 1020.9 148.3 1022.9 148.4C1024.9 148.4 1026.9 148.5 1028.9 148.6C1030.9 148.7 1032.9 148.8 1034.9 148.9C1036.9 149.0 1038.9 149.2 1040.8 149.3C1042.8 149.5 1044.8 149.7 1046.8 149.9C1048.8 150.1 1050.8 150.3 1052.8 150.6C1054.8 150.8 1056.7 151.1 1058.7 151.4C1060.7 151.7 1062.7 152.1 1064.6 152.5C1066.6 152.9 1068.5 153.3 1070.5 153.8C1072.4 154.2 1074.4 154.7 1076.3 155.2C1078.2 155.8 1080.1 156.3 1082.1 156.9C1084.0 157.5 1085.9 158.1 1087.8 158.7C1089.7 159.4 1091.6 160.0 1093.4 160.7C1095.3 161.4 1097.2 162.2 1099.0 163.0C1100.8 163.7 1102.6 164.6 1104.4 165.4C1106.2 166.3 1108.0 167.2 1109.8 168.1C1111.6 169.1 1113.3 170.0 1115.1 171.0C1116.8 172.0 1118.6 172.9 1120.3 174.0C1122.0 175.0 1123.7 176.0 1125.3 177.2C1127.0 178.3 1128.6 179.5 1130.2 180.7C1131.7 182.0 1133.2 183.3 1134.7 184.6C1136.1 186.0 1137.5 187.4 1138.9 188.8C1140.3 190.3 1141.7 191.7 1143.1 193.2C1144.4 194.7 1145.8 196.1 1147.1 197.6C1148.5 199.1 1149.8 200.6 1151.2 202.0C1152.5 203.5 1153.9 205.0 1155.2 206.5C1156.6 207.9 1157.9 209.4 1159.2 210.9C1160.6 212.4 1161.9 213.9 1163.1 215.5C1164.4 217.0 1165.7 218.6 1166.9 220.1C1168.2 221.7 1169.4 223.3 1170.6 224.9C1171.8 226.5 1173.0 228.1 1174.2 229.7C1175.3 231.3 1176.5 233.0 1177.7 234.6C1178.8 236.2 1180.0 237.9 1181.1 239.5C1182.2 241.1 1183.4 242.8 1184.5 244.4C1185.6 246.1 1186.7 247.8 1187.9 249.4C1189.0 251.1 1190.1 252.7 1191.2 254.4C1192.3 256.1 1193.4 257.8 1194.5 259.4C1195.5 261.1 1196.6 262.8 1197.7 264.5C1198.8 266.2 1199.9 267.9 1200.9 269.6C1202.0 271.2 1203.1 272.9 1204.1 274.6C1205.2 276.3 1206.2 278.0 1207.2 279.8C1208.2 281.5 1209.3 283.2 1210.2 285.0C1211.2 286.7 1212.2 288.5 1213.1 290.2C1214.1 292.0 1215.0 293.8 1215.9 295.6C1216.8 297.3 1217.6 299.1 1218.5 300.9C1219.4 302.7 1220.3 304.5 1221.2 306.3C1222.1 308.1 1223.1 309.8 1224.0 311.6C1225.0 313.3 1225.9 315.1 1226.9 316.8C1227.9 318.6 1228.9 320.3 1229.9 322.0C1230.9 323.7 1232.0 325.5 1233.0 327.2C1234.0 328.9 1235.0 330.6 1236.0 332.4C1237.0 334.1 1237.9 335.9 1238.9 337.6C1239.9 339.4 1240.8 341.1 1241.7 342.9C1242.7 344.7 1243.6 346.5 1244.5 348.2C1245.5 350.0 1246.5 351.7 1247.5 353.4C1248.5 355.1 1249.5 356.8 1250.6 358.5C1251.7 360.2 1252.9 361.8 1254.0 363.4C1255.1 365.1 1256.3 366.7 1257.3 368.3C1258.4 370.0 1259.5 371.7 1260.5 373.4C1261.5 375.1 1262.5 376.9 1263.5 378.6C1264.4 380.4 1265.3 382.2 1266.3 383.9C1267.2 385.7 1268.1 387.5 1269.0 389.3C1269.9 391.0 1270.9 392.8 1271.8 394.6C1272.7 396.4 1273.6 398.1 1274.6 399.9C1275.5 401.7 1276.4 403.5 1277.3 405.2C1278.2 407.0 1279.2 408.8 1280.1 410.6C1280.9 412.4 1281.8 414.2 1282.6 416.0C1283.4 417.8 1284.2 419.7 1284.9 421.5C1285.6 423.4 1286.2 425.3 1286.7 427.2C1287.2 429.2 1287.6 431.1 1288.0 433.1C1288.3 435.0 1288.5 437.0 1288.7 439.0C1288.8 441.0 1288.9 443.0 1288.8 445.0C1288.7 446.9 1288.5 448.9 1288.2 450.9C1287.9 452.8 1287.5 454.8 1286.9 456.7C1286.4 458.6 1285.7 460.4 1284.9 462.3C1284.1 464.1 1283.2 465.9 1282.2 467.6C1281.2 469.3 1280.1 471.0 1279.0 472.7C1277.8 474.3 1276.5 475.9 1275.2 477.4C1273.8 478.9 1272.4 480.3 1270.9 481.6C1269.3 482.9 1267.7 484.2 1266.0 485.3C1264.4 486.4 1262.6 487.5 1260.8 488.4C1259.0 489.4 1257.2 490.2 1255.3 491.0C1253.4 491.8 1251.5 492.5 1249.6 493.1C1247.7 493.8 1245.8 494.4 1243.9 495.0C1242.0 495.6 1240.0 496.1 1238.1 496.6C1236.1 497.2 1234.2 497.7 1232.2 498.1C1230.3 498.6 1228.4 499.1 1226.4 499.6C1224.5 500.1 1222.5 500.5 1220.6 501.0C1218.6 501.5 1216.7 501.9 1214.7 502.4C1212.8 502.8 1210.8 503.3 1208.9 503.8C1207.0 504.3 1205.1 504.8 1203.2 505.3C1201.3 505.9 1199.5 506.5 1197.7 507.2C1195.8 508.0 1194.1 508.7 1192.3 509.6C1190.6 510.5 1188.9 511.4 1187.3 512.5C1185.7 513.5 1184.2 514.7 1182.7 515.9C1181.3 517.2 1179.9 518.5 1178.6 519.9C1177.3 521.4 1176.1 522.9 1175.1 524.4C1174.0 526.0 1173.0 527.7 1172.3 529.4C1171.5 531.0 1170.8 532.8 1170.4 534.6C1169.9 536.3 1169.7 538.2 1169.6 540.1C1169.5 541.9 1169.6 543.9 1169.7 545.8C1169.8 547.7 1170.1 549.7 1170.3 551.7C1170.6 553.6 1170.9 555.6 1171.2 557.6C1171.5 559.5 1171.8 561.5 1172.1 563.5C1172.5 565.4 1172.8 567.4 1173.1 569.4C1173.4 571.4 1173.7 573.4 1173.9 575.4C1174.0 577.4 1174.1 579.5 1174.0 581.5C1173.8 583.5 1173.5 585.6 1173.0 587.5C1172.5 589.5 1171.8 591.4 1171.0 593.3C1170.1 595.1 1169.1 596.9 1167.9 598.6C1166.7 600.3 1165.4 601.9 1164.0 603.4C1162.6 604.8 1161.0 606.2 1159.4 607.5C1157.7 608.8 1156.0 610.0 1154.2 611.0C1152.4 612.0 1150.5 612.9 1148.6 613.7C1146.7 614.5 1144.7 615.2 1142.7 615.8C1140.7 616.3 1138.7 616.8 1136.7 617.2C1134.7 617.7 1132.7 618.0 1130.7 618.4C1128.7 618.7 1126.7 619.0 1124.7 619.3C1122.7 619.6 1120.8 619.9 1118.8 620.1C1116.8 620.4 1114.8 620.6 1112.8 620.9C1110.8 621.1 1108.8 621.4 1106.8 621.6C1104.9 621.8 1102.9 622.1 1100.9 622.3C1098.9 622.6 1096.9 622.8 1094.9 623.1C1093.0 623.3 1091.0 623.6 1089.0 623.8C1087.0 624.1 1085.1 624.3 1083.1 624.6C1081.1 624.9 1079.1 625.2 1077.2 625.5C1075.2 625.7 1073.2 626.0 1071.3 626.3C1069.3 626.7 1067.3 627.0 1065.4 627.3C1063.4 627.6 1061.4 627.9 1059.5 628.3C1057.5 628.6 1055.5 628.9 1053.6 629.3C1051.6 629.6 1049.6 629.9 1047.7 630.3C1045.7 630.6 1043.7 631.0 1041.7 631.3C1039.8 631.6 1037.8 632.0 1035.8 632.3C1033.9 632.7 1031.9 633.0 1029.9 633.3C1027.9 633.7 1026.0 634.0 1024.0 634.4C1022.0 634.7 1020.0 635.0 1018.1 635.4C1016.1 635.7 1014.1 636.0 1012.1 636.3C1010.2 636.7 1008.2 637.0 1006.2 637.3C1004.2 637.6 1002.3 638.0 1000.3 638.3C998.3 638.6 996.4 638.9 994.4 639.3C992.4 639.6 990.4 639.9 988.5 640.2C986.5 640.6 984.5 640.9 982.5 641.2C980.6 641.5 978.6 641.9 976.6 642.2C974.7 642.5 972.7 642.9 970.7 643.2C968.8 643.5 966.8 643.9 964.8 644.2C962.9 644.6 960.9 644.9 959.0 645.3C957.0 645.7 955.0 646.0 953.1 646.4C951.1 646.7 949.2 647.1 947.2 647.5C945.2 647.9 943.3 648.3 941.3 648.7C939.4 649.0 937.4 649.4 935.5 649.8C933.5 650.2 931.6 650.6 929.6 651.0C927.7 651.5 925.8 651.9 923.8 652.3C921.9 652.7 920.0 653.2 918.0 653.6C916.1 654.1 914.2 654.5 912.2 655.0C910.3 655.5 908.4 656.0 906.4 656.4C904.5 656.9 902.5 657.4 900.5 657.8C898.5 658.2 896.5 658.7 894.5 659.0C892.5 659.3 890.5 659.7 888.4 659.8C886.4 660.0 884.3 660.0 882.2 659.9C880.2 659.7 878.1 659.4 876.1 658.9C874.1 658.5 872.2 657.8 870.3 657.0C868.4 656.2 866.6 655.2 864.8 654.2C863.0 653.2 861.3 652.1 859.6 650.9C858.0 649.8 856.3 648.6 854.8 647.3C853.2 646.0 851.7 644.6 850.3 643.1C848.9 641.6 847.6 640.1 846.4 638.4C845.3 636.8 844.3 635.0 843.4 633.2C842.5 631.4 841.7 629.5 841.0 627.7C840.3 625.8 839.7 623.9 839.1 621.9C838.5 620.0 837.9 618.1 837.3 616.2C836.7 614.3 836.1 612.4 835.4 610.6C834.7 608.7 834.0 606.9 833.2 605.1C832.4 603.3 831.5 601.6 830.5 600.0C829.5 598.3 828.4 596.8 827.2 595.3C826.0 593.9 824.6 592.5 823.2 591.3C821.7 590.1 820.2 589.0 818.6 588.0C817.0 587.0 815.2 586.2 813.5 585.4C811.7 584.7 809.9 584.1 808.1 583.6C806.2 583.0 804.3 582.6 802.4 582.2C800.5 581.8 798.5 581.5 796.6 581.2C794.6 580.9 792.7 580.7 790.7 580.5C788.7 580.3 786.8 580.2 784.8 580.0C782.8 579.9 780.9 579.9 778.9 579.9C776.9 579.8 774.9 579.8 772.9 579.9C770.9 579.9 768.9 579.9 766.9 579.9C764.9 580.0 762.9 580.0 760.9 580.1C758.9 580.1 756.9 580.1 754.9 580.2C752.9 580.2 750.9 580.2 748.9 580.3C746.9 580.3 744.9 580.3 742.9 580.3C740.9 580.3 738.9 580.3 736.9 580.2C734.9 580.1 732.8 580.1 730.8 579.9C728.8 579.8 726.8 579.6 724.8 579.4C722.8 579.2 720.7 578.9 718.8 578.5C716.8 578.1 714.8 577.7 712.8 577.1C710.9 576.6 708.9 575.9 707.0 575.1C705.2 574.4 703.3 573.5 701.6 572.5C699.8 571.5 698.1 570.4 696.4 569.2C694.8 568.0 693.2 566.7 691.7 565.4C690.2 564.1 688.7 562.6 687.4 561.2C686.0 559.7 684.7 558.1 683.5 556.6C682.2 555.0 681.1 553.4 679.9 551.7C678.7 550.1 677.6 548.5 676.4 546.8C675.3 545.2 674.2 543.4 673.2 541.8C672.2 540.2 671.2 538.7 670.5 537.2C669.7 535.6 669.0 534.1 668.6 532.7C668.1 531.2 667.8 530.0 667.5 528.5ZM663.6 529.2C663.3 527.5 663.2 525.7 663.0 523.9C662.8 522.1 662.6 520.3 662.5 518.4C662.3 516.4 662.2 514.3 662.1 512.3C661.9 510.3 661.8 508.3 661.7 506.3C661.6 504.3 661.5 502.3 661.4 500.3C661.3 498.3 661.2 496.3 661.2 494.2C661.1 492.2 661.0 490.2 661.0 488.2C660.9 486.2 660.9 484.2 660.8 482.1C660.8 480.1 660.8 478.1 660.8 476.1C660.8 474.1 660.9 472.0 660.9 470.0C660.9 468.0 661.0 466.0 661.0 464.0C661.1 462.0 661.2 460.0 661.2 458.0C661.3 456.0 661.4 454.0 661.5 452.0C661.5 450.0 661.6 448.0 661.6 446.0C661.7 444.0 661.7 442.0 661.8 440.0C661.8 438.0 661.9 436.0 661.9 434.0C662.0 432.0 662.0 430.0 662.0 428.0C662.1 426.0 662.1 424.0 662.2 422.0C662.2 420.0 662.3 418.0 662.4 416.0C662.4 414.0 662.5 412.0 662.6 410.0C662.7 408.0 662.8 405.9 662.9 403.9C663.0 401.9 663.1 399.9 663.2 397.9C663.3 395.9 663.4 393.9 663.5 391.9C663.7 389.9 663.8 387.9 664.0 385.9C664.1 383.9 664.3 381.8 664.5 379.8C664.6 377.8 664.8 375.8 665.0 373.8C665.3 371.8 665.5 369.8 665.8 367.8C666.0 365.7 666.3 363.7 666.6 361.7C666.9 359.7 667.2 357.7 667.5 355.7C667.9 353.8 668.2 351.8 668.6 349.8C668.9 347.8 669.3 345.8 669.7 343.9C670.0 341.9 670.4 339.9 670.7 338.0C671.1 336.0 671.5 334.1 671.8 332.1C672.1 330.1 672.5 328.2 672.8 326.2C673.1 324.3 673.4 322.3 673.7 320.3C674.0 318.3 674.3 316.3 674.7 314.3C675.0 312.3 675.4 310.3 675.8 308.3C676.2 306.3 676.7 304.3 677.2 302.3C677.7 300.3 678.3 298.3 678.9 296.4C679.4 294.4 680.1 292.5 680.7 290.5C681.4 288.6 682.1 286.7 682.8 284.8C683.5 282.8 684.3 280.9 685.1 279.0C685.9 277.2 686.8 275.3 687.7 273.4C688.5 271.6 689.5 269.7 690.5 267.9C691.4 266.1 692.4 264.3 693.5 262.6C694.5 260.8 695.6 259.1 696.7 257.3C697.9 255.6 699.0 253.9 700.2 252.3C701.3 250.6 702.5 248.9 703.8 247.3C705.0 245.7 706.2 244.1 707.5 242.5C708.8 240.9 710.1 239.3 711.4 237.7C712.7 236.2 714.1 234.6 715.4 233.1C716.8 231.6 718.2 230.1 719.7 228.7C721.1 227.2 722.6 225.8 724.1 224.4C725.6 223.0 727.1 221.6 728.7 220.3C730.3 218.9 731.9 217.6 733.5 216.4C735.2 215.1 736.8 213.9 738.5 212.7C740.2 211.6 741.9 210.4 743.6 209.3C745.3 208.2 747.0 207.1 748.8 206.1C750.5 205.0 752.3 204.0 754.0 203.0C755.8 201.9 757.5 201.0 759.3 200.0C761.1 199.0 762.8 198.0 764.6 197.1C766.4 196.1 768.2 195.2 770.0 194.3C771.8 193.3 773.6 192.4 775.4 191.6C777.3 190.7 779.1 189.8 780.9 188.9C782.7 188.1 784.6 187.3 786.4 186.4C788.3 185.6 790.1 184.8 792.0 184.0C793.9 183.2 795.8 182.5 797.6 181.7C799.5 181.0 801.4 180.2 803.3 179.5C805.2 178.8 807.1 178.1 809.1 177.5C811.0 176.8 812.9 176.2 814.8 175.5C816.8 174.9 818.7 174.3 820.6 173.8C822.6 173.2 824.5 172.6 826.5 172.1C828.4 171.5 830.4 171.0 832.4 170.5C834.3 170.0 836.3 169.6 838.3 169.1C840.2 168.6 842.2 168.2 844.2 167.8C846.1 167.3 848.1 166.9 850.1 166.5C852.1 166.1 854.0 165.7 856.0 165.3C858.0 164.9 860.0 164.6 861.9 164.2C863.9 163.8 865.9 163.5 867.9 163.1C869.8 162.8 871.8 162.4 873.7 162.1C875.7 161.7 877.6 161.3 879.6 160.9C881.5 160.5 883.5 160.1 885.4 159.7C887.3 159.3 889.2 158.9 891.2 158.4C893.1 157.9 895.0 157.5 897.0 157.0C898.9 156.5 900.9 156.0 902.8 155.6C904.8 155.1 906.7 154.6 908.7 154.2C910.6 153.7 912.6 153.2 914.6 152.8C916.6 152.4 918.6 152.0 920.5 151.6C922.5 151.2 924.5 150.8 926.5 150.5C928.5 150.2 930.5 149.8 932.5 149.5C934.5 149.2 936.5 149.0 938.6 148.7C940.6 148.4 942.6 148.2 944.6 148.0C946.6 147.7 948.6 147.5 950.6 147.3C952.6 147.1 954.6 146.9 956.6 146.7C958.6 146.5 960.6 146.3 962.6 146.2C964.6 146.0 966.6 145.8 968.6 145.7C970.6 145.5 972.6 145.4 974.6 145.3C976.7 145.1 978.7 145.0 980.7 144.9C982.7 144.8 984.7 144.7 986.7 144.6C988.7 144.5 990.7 144.5 992.8 144.4C994.8 144.4 996.8 144.3 998.8 144.3C1000.8 144.2 1002.8 144.2 1004.9 144.2C1006.9 144.2 1008.9 144.2 1010.9 144.2C1012.9 144.2 1014.9 144.3 1017.0 144.3C1019.0 144.4 1021.0 144.4 1023.0 144.5C1025.0 144.5 1027.0 144.6 1029.0 144.7C1031.1 144.8 1033.1 144.9 1035.1 145.0C1037.1 145.2 1039.1 145.3 1041.2 145.5C1043.2 145.6 1045.2 145.8 1047.2 146.0C1049.2 146.2 1051.3 146.4 1053.3 146.7C1055.3 146.9 1057.3 147.2 1059.3 147.6C1061.4 147.9 1063.4 148.3 1065.4 148.7C1067.4 149.1 1069.4 149.5 1071.4 150.0C1073.4 150.4 1075.3 150.9 1077.3 151.5C1079.3 152.0 1081.2 152.6 1083.2 153.2C1085.1 153.8 1087.1 154.4 1089.0 155.0C1091.0 155.7 1092.9 156.4 1094.8 157.1C1096.7 157.8 1098.6 158.6 1100.5 159.4C1102.4 160.2 1104.3 161.0 1106.1 161.9C1108.0 162.8 1109.8 163.7 1111.6 164.7C1113.4 165.6 1115.2 166.6 1117.0 167.6C1118.8 168.6 1120.5 169.6 1122.3 170.6C1124.1 171.7 1125.8 172.8 1127.5 173.9C1129.3 175.1 1131.0 176.4 1132.6 177.7C1134.2 179.0 1135.8 180.4 1137.3 181.8C1138.8 183.2 1140.3 184.6 1141.7 186.1C1143.2 187.6 1144.5 189.1 1145.9 190.5C1147.3 192.0 1148.6 193.5 1150.0 195.0C1151.4 196.5 1152.7 197.9 1154.1 199.4C1155.4 200.9 1156.8 202.4 1158.1 203.8C1159.5 205.3 1160.8 206.8 1162.2 208.4C1163.5 209.9 1164.8 211.4 1166.1 213.0C1167.4 214.5 1168.7 216.1 1170.0 217.7C1171.3 219.3 1172.5 220.9 1173.7 222.5C1174.9 224.1 1176.1 225.8 1177.3 227.4C1178.5 229.0 1179.7 230.7 1180.8 232.3C1182.0 234.0 1183.2 235.6 1184.3 237.3C1185.4 238.9 1186.6 240.6 1187.7 242.3C1188.8 243.9 1190.0 245.6 1191.1 247.2C1192.2 248.9 1193.3 250.6 1194.4 252.3C1195.5 254.0 1196.6 255.6 1197.7 257.3C1198.8 259.0 1199.9 260.7 1201.0 262.4C1202.1 264.1 1203.2 265.8 1204.2 267.5C1205.3 269.2 1206.4 270.9 1207.4 272.6C1208.5 274.3 1209.5 276.0 1210.6 277.8C1211.6 279.5 1212.6 281.3 1213.6 283.0C1214.6 284.8 1215.6 286.6 1216.6 288.4C1217.5 290.2 1218.4 292.0 1219.3 293.8C1220.2 295.6 1221.1 297.4 1222.0 299.2C1222.9 301.0 1223.8 302.7 1224.7 304.5C1225.6 306.3 1226.5 308.0 1227.4 309.7C1228.4 311.5 1229.3 313.2 1230.3 314.9C1231.3 316.6 1232.3 318.3 1233.3 320.1C1234.3 321.8 1235.3 323.5 1236.3 325.2C1237.3 327.0 1238.4 328.7 1239.4 330.5C1240.4 332.2 1241.3 334.0 1242.3 335.7C1243.3 337.5 1244.2 339.3 1245.2 341.1C1246.1 342.8 1247.0 344.6 1248.0 346.3C1248.9 348.1 1249.8 349.8 1250.8 351.5C1251.8 353.1 1252.8 354.7 1253.9 356.4C1254.9 358.0 1256.1 359.6 1257.2 361.2C1258.3 362.9 1259.5 364.5 1260.6 366.2C1261.7 367.9 1262.8 369.7 1263.9 371.4C1264.9 373.2 1265.9 375.0 1266.9 376.8C1267.9 378.6 1268.8 380.4 1269.7 382.1C1270.7 383.9 1271.6 385.7 1272.5 387.5C1273.4 389.3 1274.3 391.0 1275.2 392.8C1276.2 394.6 1277.1 396.3 1278.0 398.1C1278.9 399.9 1279.9 401.7 1280.8 403.5C1281.7 405.2 1282.7 407.0 1283.6 408.9C1284.5 410.7 1285.4 412.5 1286.2 414.4C1287.0 416.3 1287.8 418.2 1288.6 420.2C1289.3 422.2 1289.9 424.2 1290.5 426.2C1291.0 428.3 1291.5 430.3 1291.8 432.4C1292.2 434.5 1292.4 436.6 1292.6 438.7C1292.7 440.8 1292.8 443.0 1292.7 445.1C1292.6 447.2 1292.4 449.4 1292.1 451.5C1291.8 453.6 1291.3 455.8 1290.7 457.8C1290.1 459.9 1289.4 461.9 1288.5 463.9C1287.7 465.9 1286.7 467.9 1285.7 469.7C1284.7 471.6 1283.5 473.5 1282.3 475.2C1281.0 477.0 1279.7 478.7 1278.3 480.4C1276.8 482.0 1275.3 483.6 1273.7 485.0C1272.0 486.5 1270.3 487.8 1268.5 489.1C1266.7 490.3 1264.8 491.4 1262.9 492.5C1261.0 493.5 1259.0 494.4 1257.1 495.2C1255.1 496.1 1253.1 496.8 1251.2 497.5C1249.2 498.2 1247.2 498.8 1245.2 499.4C1243.2 500.0 1241.2 500.5 1239.3 501.1C1237.3 501.6 1235.3 502.1 1233.4 502.6C1231.4 503.1 1229.5 503.6 1227.5 504.1C1225.5 504.5 1223.6 505.0 1221.6 505.5C1219.7 505.9 1217.7 506.4 1215.8 506.8C1213.9 507.3 1211.9 507.7 1210.1 508.2C1208.2 508.7 1206.4 509.2 1204.6 509.7C1202.8 510.3 1201.0 510.9 1199.3 511.5C1197.6 512.2 1196.0 512.9 1194.4 513.7C1192.8 514.5 1191.3 515.4 1189.8 516.3C1188.4 517.3 1187.0 518.3 1185.7 519.4C1184.4 520.5 1183.2 521.7 1182.0 523.0C1180.9 524.3 1179.8 525.6 1178.9 527.0C1177.9 528.4 1177.1 529.8 1176.4 531.3C1175.8 532.7 1175.2 534.2 1174.9 535.7C1174.5 537.2 1174.3 538.7 1174.2 540.3C1174.1 542.0 1174.2 543.7 1174.3 545.5C1174.4 547.3 1174.7 549.2 1174.9 551.1C1175.1 553.0 1175.4 554.9 1175.7 556.9C1176.0 558.8 1176.4 560.7 1176.7 562.7C1177.0 564.7 1177.4 566.7 1177.7 568.7C1178.0 570.8 1178.3 572.9 1178.5 575.1C1178.6 577.3 1178.7 579.6 1178.6 581.8C1178.4 584.1 1178.1 586.4 1177.5 588.7C1176.9 590.9 1176.1 593.2 1175.2 595.3C1174.2 597.4 1173.0 599.5 1171.7 601.4C1170.4 603.3 1168.9 605.1 1167.3 606.8C1165.8 608.5 1164.0 610.0 1162.2 611.5C1160.4 612.9 1158.5 614.2 1156.5 615.4C1154.5 616.6 1152.4 617.6 1150.3 618.5C1148.2 619.4 1146.1 620.1 1144.0 620.7C1141.8 621.3 1139.7 621.8 1137.7 622.3C1135.6 622.8 1133.5 623.1 1131.5 623.5C1129.5 623.8 1127.5 624.2 1125.4 624.5C1123.4 624.8 1121.4 625.0 1119.4 625.3C1117.4 625.5 1115.4 625.8 1113.4 626.0C1111.4 626.3 1109.4 626.5 1107.5 626.8C1105.5 627.0 1103.5 627.2 1101.5 627.5C1099.5 627.7 1097.6 628.0 1095.6 628.2C1093.6 628.5 1091.7 628.7 1089.7 629.0C1087.7 629.2 1085.8 629.5 1083.8 629.8C1081.8 630.0 1079.9 630.3 1077.9 630.6C1076.0 630.9 1074.0 631.2 1072.1 631.5C1070.1 631.8 1068.2 632.1 1066.2 632.4C1064.2 632.7 1062.3 633.1 1060.3 633.4C1058.4 633.7 1056.4 634.0 1054.4 634.4C1052.5 634.7 1050.5 635.1 1048.5 635.4C1046.6 635.7 1044.6 636.1 1042.6 636.4C1040.7 636.8 1038.7 637.1 1036.7 637.4C1034.7 637.8 1032.8 638.1 1030.8 638.5C1028.8 638.8 1026.8 639.1 1024.9 639.5C1022.9 639.8 1020.9 640.2 1018.9 640.5C1017.0 640.8 1015.0 641.1 1013.0 641.5C1011.0 641.8 1009.0 642.1 1007.1 642.5C1005.1 642.8 1003.1 643.1 1001.1 643.4C999.2 643.7 997.2 644.1 995.2 644.4C993.2 644.7 991.3 645.0 989.3 645.4C987.3 645.7 985.4 646.0 983.4 646.3C981.4 646.7 979.5 647.0 977.5 647.3C975.5 647.7 973.6 648.0 971.6 648.3C969.7 648.7 967.7 649.0 965.7 649.4C963.8 649.7 961.8 650.1 959.9 650.4C957.9 650.8 956.0 651.1 954.0 651.5C952.1 651.9 950.1 652.2 948.2 652.6C946.2 653.0 944.3 653.4 942.4 653.8C940.4 654.1 938.5 654.5 936.6 654.9C934.6 655.3 932.7 655.7 930.8 656.1C928.9 656.5 927.0 656.9 925.1 657.3C923.2 657.7 921.3 658.2 919.3 658.6C917.4 659.0 915.5 659.5 913.6 660.0C911.7 660.4 909.7 660.9 907.8 661.4C905.8 661.8 903.8 662.3 901.8 662.7C899.7 663.2 897.7 663.6 895.5 664.0C893.4 664.3 891.2 664.7 888.9 664.8C886.6 665.0 884.3 665.1 882.0 664.9C879.7 664.7 877.3 664.4 875.0 663.8C872.8 663.3 870.5 662.5 868.4 661.6C866.4 660.7 864.4 659.6 862.5 658.5C860.5 657.4 858.7 656.2 857.0 655.0C855.2 653.7 853.4 652.4 851.8 651.0C850.1 649.6 848.4 648.1 846.9 646.4C845.4 644.8 843.9 643.0 842.6 641.2C841.4 639.3 840.2 637.3 839.2 635.4C838.2 633.4 837.5 631.3 836.7 629.3C835.9 627.3 835.4 625.3 834.7 623.4C834.1 621.4 833.5 619.5 832.9 617.6C832.3 615.8 831.7 613.9 831.0 612.2C830.4 610.4 829.7 608.7 828.9 607.0C828.2 605.4 827.4 603.8 826.4 602.4C825.5 601.0 824.5 599.6 823.4 598.4C822.3 597.2 821.1 596.0 819.9 595.0C818.6 594.0 817.3 593.1 815.8 592.3C814.4 591.5 812.9 590.8 811.4 590.2C809.8 589.6 808.2 589.1 806.5 588.6C804.8 588.2 803.1 587.8 801.3 587.4C799.5 587.1 797.6 586.8 795.8 586.5C793.9 586.3 792.1 586.1 790.2 585.9C788.3 585.7 786.4 585.5 784.5 585.4C782.6 585.3 780.7 585.3 778.8 585.3C776.9 585.2 774.9 585.2 773.0 585.3C771.0 585.3 769.0 585.3 767.0 585.3C765.0 585.4 763.0 585.4 761.0 585.5C759.0 585.5 757.0 585.5 755.0 585.6C753.0 585.6 751.0 585.6 749.0 585.7C747.0 585.7 744.9 585.7 742.9 585.7C740.8 585.7 738.8 585.7 736.7 585.6C734.6 585.5 732.6 585.5 730.5 585.3C728.4 585.2 726.3 585.0 724.2 584.8C722.1 584.5 719.9 584.2 717.8 583.8C715.7 583.4 713.5 582.9 711.4 582.3C709.3 581.6 707.2 580.9 705.1 580.0C703.1 579.1 701.1 578.1 699.2 577.0C697.3 575.9 695.4 574.6 693.7 573.3C691.9 572.0 690.2 570.5 688.6 569.1C687.0 567.6 685.5 566.0 684.1 564.4C682.7 562.8 681.4 561.1 680.1 559.4C678.8 557.7 677.7 556.0 676.5 554.3C675.3 552.6 674.2 550.9 673.1 549.2C672.0 547.5 670.8 545.7 669.8 544.0C668.8 542.3 667.8 540.7 666.9 539.0C666.1 537.3 665.4 535.6 664.8 534.0C664.3 532.4 663.9 530.9 663.6 529.2Z" fill="#1ff05a" fill-rule="evenodd"/>
<path d="M669.6 528.1C669.3 526.6 669.2 525.0 669.0 523.3C668.8 521.6 668.7 519.8 668.5 517.9C668.4 516.0 668.2 513.9 668.1 511.9C668.0 510.0 667.8 508.0 667.7 506.0C667.6 504.0 667.5 502.0 667.4 500.0C667.4 498.0 667.3 496.0 667.2 494.0C667.1 492.0 667.1 490.0 667.0 488.0C667.0 486.1 666.9 484.1 666.9 482.1C666.9 480.1 666.9 478.1 666.9 476.1C666.9 474.1 666.9 472.1 666.9 470.1C667.0 468.2 667.0 466.2 667.1 464.2C667.1 462.2 667.2 460.2 667.3 458.2C667.4 456.2 667.4 454.2 667.5 452.2C667.6 450.2 667.6 448.2 667.7 446.2C667.7 444.2 667.8 442.2 667.8 440.2C667.9 438.2 667.9 436.2 668.0 434.2C668.0 432.2 668.1 430.2 668.1 428.2C668.1 426.2 668.2 424.2 668.2 422.2C668.3 420.2 668.3 418.2 668.4 416.2C668.5 414.2 668.6 412.2 668.6 410.2C668.7 408.2 668.8 406.2 668.9 404.2C669.0 402.2 669.1 400.3 669.2 398.3C669.3 396.3 669.5 394.3 669.6 392.3C669.7 390.3 669.8 388.3 670.0 386.3C670.1 384.3 670.3 382.4 670.5 380.4C670.7 378.4 670.8 376.4 671.1 374.4C671.3 372.5 671.5 370.5 671.8 368.5C672.0 366.6 672.3 364.6 672.6 362.6C672.9 360.7 673.2 358.7 673.5 356.7C673.8 354.8 674.2 352.8 674.5 350.8C674.9 348.9 675.2 346.9 675.6 345.0C676.0 343.0 676.3 341.0 676.7 339.1C677.1 337.1 677.4 335.1 677.8 333.1C678.1 331.2 678.4 329.2 678.7 327.2C679.1 325.2 679.4 323.2 679.7 321.3C680.0 319.3 680.3 317.3 680.6 315.4C681.0 313.4 681.3 311.5 681.7 309.6C682.1 307.6 682.6 305.7 683.1 303.8C683.5 301.9 684.1 300.0 684.6 298.1C685.2 296.2 685.8 294.3 686.5 292.5C687.1 290.6 687.8 288.7 688.5 286.9C689.2 285.1 689.9 283.2 690.7 281.4C691.4 279.6 692.3 277.8 693.1 276.0C694.0 274.3 694.9 272.5 695.8 270.8C696.7 269.1 697.7 267.4 698.7 265.7C699.7 264.0 700.8 262.3 701.8 260.6C702.9 259.0 704.0 257.3 705.1 255.7C706.3 254.1 707.4 252.5 708.6 250.9C709.8 249.3 711.0 247.8 712.2 246.2C713.5 244.7 714.7 243.2 716.0 241.6C717.3 240.1 718.6 238.7 719.9 237.2C721.2 235.7 722.6 234.3 724.0 232.9C725.4 231.5 726.8 230.1 728.2 228.8C729.7 227.5 731.1 226.2 732.6 224.9C734.1 223.6 735.7 222.4 737.2 221.2C738.8 220.0 740.4 218.8 742.0 217.7C743.6 216.6 745.2 215.5 746.9 214.4C748.5 213.3 750.2 212.3 751.9 211.2C753.6 210.2 755.3 209.2 757.0 208.2C758.8 207.2 760.5 206.2 762.2 205.3C764.0 204.3 765.7 203.3 767.5 202.4C769.2 201.5 771.0 200.6 772.7 199.7C774.5 198.7 776.3 197.9 778.1 197.0C779.9 196.1 781.7 195.3 783.5 194.4C785.3 193.6 787.1 192.8 788.9 192.0C790.7 191.2 792.5 190.4 794.4 189.6C796.2 188.8 798.0 188.1 799.9 187.3C801.7 186.6 803.6 185.9 805.4 185.2C807.3 184.5 809.2 183.8 811.0 183.2C812.9 182.5 814.8 181.9 816.7 181.3C818.6 180.7 820.5 180.1 822.4 179.6C824.3 179.0 826.2 178.4 828.1 177.9C830.0 177.4 831.9 176.9 833.9 176.4C835.8 175.9 837.7 175.4 839.6 175.0C841.6 174.5 843.5 174.1 845.5 173.7C847.4 173.3 849.4 172.8 851.3 172.4C853.3 172.0 855.2 171.7 857.2 171.3C859.1 170.9 861.1 170.5 863.1 170.2C865.0 169.8 867.0 169.4 868.9 169.1C870.9 168.7 872.9 168.4 874.9 168.0C876.8 167.6 878.8 167.3 880.8 166.9C882.7 166.5 884.7 166.1 886.7 165.6C888.6 165.2 890.6 164.8 892.6 164.3C894.5 163.8 896.5 163.4 898.4 162.9C900.4 162.4 902.3 161.9 904.2 161.4C906.2 161.0 908.1 160.5 910.0 160.0C912.0 159.6 913.9 159.1 915.9 158.7C917.8 158.3 919.7 157.9 921.7 157.5C923.6 157.1 925.6 156.8 927.6 156.5C929.5 156.1 931.5 155.8 933.4 155.5C935.4 155.2 937.4 155.0 939.3 154.7C941.3 154.4 943.3 154.2 945.3 154.0C947.2 153.7 949.2 153.5 951.2 153.3C953.2 153.1 955.2 152.9 957.2 152.7C959.1 152.5 961.1 152.4 963.1 152.2C965.1 152.0 967.1 151.9 969.1 151.7C971.1 151.6 973.0 151.4 975.0 151.3C977.0 151.2 979.0 151.0 981.0 150.9C983.0 150.8 985.0 150.7 987.0 150.7C989.0 150.6 990.9 150.5 992.9 150.5C994.9 150.4 996.9 150.4 998.9 150.3C1000.9 150.3 1002.9 150.3 1004.9 150.3C1006.9 150.3 1008.9 150.3 1010.9 150.3C1012.8 150.3 1014.8 150.3 1016.8 150.4C1018.8 150.4 1020.8 150.5 1022.8 150.5C1024.8 150.6 1026.8 150.7 1028.8 150.8C1030.8 150.8 1032.7 150.9 1034.7 151.1C1036.7 151.2 1038.7 151.3 1040.7 151.5C1042.7 151.6 1044.6 151.8 1046.6 152.0C1048.6 152.2 1050.5 152.4 1052.5 152.7C1054.5 152.9 1056.4 153.2 1058.4 153.5C1060.3 153.9 1062.3 154.2 1064.2 154.6C1066.1 155.0 1068.1 155.4 1070.0 155.9C1071.9 156.3 1073.8 156.8 1075.7 157.3C1077.6 157.8 1079.5 158.4 1081.4 159.0C1083.3 159.5 1085.2 160.1 1087.1 160.8C1089.0 161.4 1090.8 162.0 1092.7 162.7C1094.5 163.4 1096.3 164.2 1098.1 164.9C1100.0 165.7 1101.7 166.5 1103.5 167.4C1105.3 168.2 1107.1 169.1 1108.8 170.1C1110.6 171.0 1112.3 171.9 1114.0 172.9C1115.8 173.8 1117.5 174.8 1119.2 175.8C1120.9 176.8 1122.5 177.9 1124.1 178.9C1125.7 180.0 1127.3 181.2 1128.8 182.4C1130.3 183.6 1131.8 184.9 1133.2 186.2C1134.6 187.5 1136.0 188.9 1137.4 190.3C1138.8 191.7 1140.1 193.2 1141.5 194.7C1142.8 196.1 1144.2 197.6 1145.5 199.1C1146.9 200.5 1148.2 202.0 1149.6 203.5C1150.9 205.0 1152.3 206.4 1153.6 207.9C1155.0 209.4 1156.3 210.9 1157.6 212.4C1158.9 213.8 1160.2 215.3 1161.5 216.9C1162.8 218.4 1164.0 219.9 1165.3 221.5C1166.5 223.0 1167.7 224.6 1168.9 226.2C1170.1 227.8 1171.3 229.4 1172.4 231.0C1173.6 232.6 1174.8 234.2 1175.9 235.8C1177.1 237.5 1178.2 239.1 1179.3 240.7C1180.5 242.4 1181.6 244.0 1182.7 245.7C1183.8 247.3 1185.0 249.0 1186.1 250.6C1187.2 252.3 1188.3 253.9 1189.4 255.6C1190.5 257.3 1191.6 258.9 1192.7 260.6C1193.7 262.3 1194.8 264.0 1195.9 265.6C1197.0 267.3 1198.0 269.0 1199.1 270.7C1200.2 272.4 1201.2 274.1 1202.3 275.8C1203.3 277.5 1204.4 279.2 1205.4 280.9C1206.4 282.6 1207.4 284.3 1208.4 286.0C1209.3 287.7 1210.3 289.5 1211.2 291.2C1212.1 293.0 1213.0 294.7 1213.9 296.5C1214.8 298.3 1215.7 300.1 1216.6 301.9C1217.5 303.7 1218.4 305.5 1219.3 307.3C1220.2 309.1 1221.2 310.8 1222.1 312.6C1223.1 314.4 1224.1 316.1 1225.0 317.9C1226.0 319.6 1227.1 321.4 1228.1 323.1C1229.1 324.8 1230.1 326.6 1231.1 328.3C1232.1 330.0 1233.1 331.7 1234.1 333.5C1235.1 335.2 1236.1 336.9 1237.0 338.7C1238.0 340.4 1238.9 342.2 1239.8 343.9C1240.8 345.7 1241.7 347.5 1242.7 349.2C1243.6 351.0 1244.6 352.8 1245.6 354.5C1246.6 356.3 1247.7 358.0 1248.8 359.7C1249.9 361.4 1251.1 363.0 1252.2 364.6C1253.3 366.3 1254.5 367.9 1255.6 369.5C1256.6 371.2 1257.7 372.8 1258.7 374.5C1259.7 376.2 1260.6 377.9 1261.6 379.7C1262.5 381.4 1263.4 383.2 1264.4 384.9C1265.3 386.7 1266.2 388.5 1267.1 390.3C1268.0 392.0 1269.0 393.8 1269.9 395.6C1270.8 397.4 1271.7 399.1 1272.6 400.9C1273.6 402.7 1274.5 404.5 1275.4 406.2C1276.3 408.0 1277.3 409.8 1278.1 411.5C1279.0 413.3 1279.9 415.1 1280.7 416.9C1281.5 418.7 1282.2 420.5 1282.9 422.3C1283.5 424.1 1284.1 425.9 1284.6 427.8C1285.1 429.6 1285.5 431.5 1285.8 433.4C1286.2 435.3 1286.4 437.2 1286.5 439.1C1286.7 441.1 1286.7 443.0 1286.6 444.9C1286.6 446.8 1286.4 448.7 1286.1 450.5C1285.7 452.4 1285.3 454.2 1284.7 456.0C1284.1 457.8 1283.4 459.5 1282.6 461.2C1281.7 462.9 1280.8 464.5 1279.7 466.1C1278.7 467.6 1277.5 469.2 1276.3 470.6C1275.1 472.0 1273.8 473.4 1272.4 474.7C1271.0 475.9 1269.6 477.1 1268.1 478.3C1266.6 479.4 1265.1 480.4 1263.5 481.4C1261.9 482.3 1260.3 483.2 1258.6 484.0C1256.9 484.9 1255.1 485.6 1253.4 486.3C1251.6 487.0 1249.8 487.7 1248.0 488.3C1246.1 489.0 1244.3 489.6 1242.4 490.1C1240.5 490.7 1238.6 491.2 1236.7 491.7C1234.8 492.2 1232.9 492.7 1231.0 493.2C1229.1 493.7 1227.1 494.2 1225.2 494.6C1223.3 495.1 1221.3 495.6 1219.4 496.0C1217.4 496.5 1215.5 496.9 1213.5 497.4C1211.6 497.9 1209.6 498.3 1207.6 498.8C1205.7 499.3 1203.7 499.9 1201.7 500.5C1199.7 501.1 1197.7 501.7 1195.8 502.5C1193.9 503.3 1191.9 504.1 1190.0 505.0C1188.1 506.0 1186.3 507.0 1184.5 508.2C1182.7 509.4 1181.0 510.7 1179.4 512.0C1177.8 513.4 1176.2 514.9 1174.8 516.5C1173.4 518.1 1172.0 519.8 1170.8 521.6C1169.6 523.4 1168.5 525.3 1167.6 527.2C1166.7 529.2 1166.0 531.3 1165.4 533.3C1164.9 535.4 1164.7 537.6 1164.5 539.7C1164.4 541.9 1164.5 544.0 1164.6 546.1C1164.8 548.2 1165.0 550.2 1165.3 552.3C1165.5 554.3 1165.8 556.3 1166.1 558.3C1166.4 560.3 1166.8 562.3 1167.1 564.3C1167.4 566.3 1167.8 568.2 1168.1 570.1C1168.4 572.0 1168.7 573.9 1168.8 575.8C1168.9 577.6 1169.0 579.4 1168.9 581.1C1168.7 582.9 1168.5 584.6 1168.0 586.2C1167.6 587.8 1166.9 589.4 1166.2 590.9C1165.4 592.5 1164.4 593.9 1163.4 595.3C1162.3 596.6 1161.1 597.9 1159.8 599.1C1158.5 600.2 1157.0 601.3 1155.6 602.2C1154.1 603.1 1152.5 604.0 1150.9 604.7C1149.3 605.4 1147.7 605.9 1146.0 606.4C1144.2 606.9 1142.5 607.3 1140.7 607.7C1138.9 608.0 1137.0 608.3 1135.1 608.6C1133.2 608.9 1131.3 609.1 1129.4 609.4C1127.4 609.6 1125.5 609.9 1123.5 610.1C1121.5 610.4 1119.6 610.6 1117.6 610.8C1115.6 611.1 1113.6 611.3 1111.7 611.5C1109.7 611.8 1107.7 612.0 1105.7 612.3C1103.7 612.5 1101.7 612.7 1099.7 613.0C1097.8 613.2 1095.8 613.5 1093.8 613.7C1091.8 614.0 1089.8 614.2 1087.8 614.5C1085.8 614.8 1083.8 615.0 1081.8 615.3C1079.8 615.6 1077.8 615.9 1075.8 616.2C1073.8 616.4 1071.8 616.8 1069.8 617.1C1067.8 617.4 1065.9 617.7 1063.9 618.0C1061.9 618.3 1059.9 618.7 1057.9 619.0C1055.9 619.3 1054.0 619.7 1052.0 620.0C1050.0 620.3 1048.0 620.7 1046.1 621.0C1044.1 621.3 1042.1 621.7 1040.1 622.0C1038.2 622.4 1036.2 622.7 1034.2 623.1C1032.3 623.4 1030.3 623.7 1028.3 624.1C1026.4 624.4 1024.4 624.8 1022.4 625.1C1020.5 625.4 1018.5 625.8 1016.5 626.1C1014.6 626.4 1012.6 626.7 1010.6 627.1C1008.6 627.4 1006.7 627.7 1004.7 628.0C1002.7 628.4 1000.8 628.7 998.8 629.0C996.8 629.3 994.8 629.7 992.9 630.0C990.9 630.3 988.9 630.6 986.9 631.0C985.0 631.3 983.0 631.6 981.0 631.9C979.0 632.3 977.0 632.6 975.1 632.9C973.1 633.3 971.1 633.6 969.1 633.9C967.2 634.3 965.2 634.6 963.2 635.0C961.2 635.3 959.2 635.7 957.3 636.0C955.3 636.4 953.3 636.8 951.3 637.1C949.4 637.5 947.4 637.9 945.4 638.3C943.4 638.7 941.5 639.1 939.5 639.5C937.5 639.9 935.5 640.3 933.6 640.7C931.6 641.2 929.6 641.6 927.6 642.1C925.7 642.5 923.7 643.0 921.7 643.5C919.8 644.1 917.8 644.6 915.8 645.2C913.9 645.7 911.9 646.4 910.0 647.0C908.1 647.5 906.2 648.2 904.3 648.8C902.4 649.4 900.5 650.0 898.7 650.5C896.8 651.1 895.0 651.6 893.1 652.1C891.3 652.5 889.5 652.9 887.8 653.1C886.0 653.4 884.3 653.5 882.5 653.5C880.8 653.4 879.2 653.2 877.5 652.9C875.8 652.6 874.2 652.0 872.5 651.4C870.9 650.8 869.2 650.0 867.6 649.1C865.9 648.3 864.3 647.3 862.7 646.3C861.1 645.3 859.5 644.3 858.0 643.2C856.6 642.1 855.1 640.9 853.8 639.7C852.5 638.4 851.3 637.1 850.2 635.7C849.2 634.3 848.2 632.8 847.4 631.2C846.5 629.6 845.8 627.9 845.1 626.1C844.4 624.3 843.8 622.5 843.2 620.6C842.6 618.7 842.0 616.8 841.4 614.9C840.8 613.0 840.2 611.0 839.5 609.1C838.8 607.2 838.1 605.2 837.3 603.3C836.4 601.4 835.5 599.4 834.5 597.6C833.4 595.8 832.2 593.9 830.9 592.2C829.6 590.6 828.1 588.9 826.5 587.5C825.0 586.0 823.2 584.6 821.4 583.4C819.6 582.3 817.7 581.2 815.7 580.3C813.8 579.4 811.7 578.7 809.7 578.1C807.7 577.4 805.6 576.9 803.6 576.5C801.5 576.0 799.5 575.7 797.4 575.4C795.4 575.1 793.3 574.8 791.3 574.6C789.2 574.4 787.2 574.3 785.1 574.2C783.1 574.0 781.0 574.0 779.0 574.0C776.9 573.9 774.9 573.9 772.9 574.0C770.8 574.0 768.8 574.0 766.8 574.1C764.8 574.1 762.8 574.1 760.8 574.2C758.8 574.2 756.8 574.2 754.8 574.3C752.8 574.3 750.8 574.3 748.9 574.4C746.9 574.4 744.9 574.4 742.9 574.4C741.0 574.4 739.0 574.4 737.0 574.3C735.1 574.3 733.1 574.2 731.2 574.1C729.3 573.9 727.3 573.8 725.4 573.6C723.5 573.4 721.7 573.1 719.8 572.8C717.9 572.5 716.1 572.1 714.3 571.7C712.5 571.2 710.8 570.7 709.1 570.0C707.4 569.4 705.7 568.7 704.0 567.9C702.4 567.1 700.7 566.2 699.1 565.2C697.6 564.2 696.0 563.1 694.5 562.0C693.1 560.9 691.6 559.7 690.2 558.4C688.8 557.1 687.5 555.7 686.2 554.3C684.9 552.9 683.6 551.3 682.4 549.8C681.2 548.3 679.9 546.8 678.8 545.2C677.6 543.6 676.4 541.9 675.3 540.4C674.3 538.9 673.3 537.5 672.5 536.1C671.7 534.7 671.1 533.3 670.7 532.0C670.2 530.6 669.9 529.5 669.6 528.1Z" fill="none" stroke="#3fc884" stroke-width="1.100"/>
<path d="M665.6 528.8C665.3 527.2 665.1 525.5 664.9 523.7C664.7 522.0 664.6 520.1 664.4 518.2C664.3 516.3 664.1 514.2 664.0 512.2C663.9 510.2 663.8 508.2 663.6 506.2C663.5 504.2 663.4 502.2 663.4 500.2C663.3 498.2 663.2 496.2 663.1 494.2C663.0 492.2 663.0 490.2 662.9 488.2C662.9 486.1 662.8 484.1 662.8 482.1C662.8 480.1 662.8 478.1 662.8 476.1C662.8 474.1 662.8 472.1 662.8 470.1C662.9 468.1 662.9 466.1 663.0 464.0C663.1 462.0 663.1 460.0 663.2 458.0C663.3 456.0 663.3 454.0 663.4 452.0C663.5 450.0 663.5 448.1 663.6 446.1C663.6 444.1 663.7 442.1 663.7 440.1C663.8 438.1 663.8 436.1 663.9 434.1C663.9 432.1 664.0 430.1 664.0 428.1C664.0 426.1 664.1 424.1 664.1 422.1C664.2 420.1 664.2 418.1 664.3 416.1C664.4 414.1 664.5 412.1 664.5 410.0C664.6 408.0 664.7 406.0 664.8 404.0C664.9 402.0 665.0 400.0 665.1 398.0C665.2 396.0 665.4 394.0 665.5 392.0C665.6 390.0 665.8 388.0 665.9 386.0C666.1 384.0 666.2 382.0 666.4 380.0C666.6 378.0 666.8 376.0 667.0 374.0C667.2 372.0 667.4 370.0 667.7 368.0C667.9 366.0 668.2 364.0 668.5 362.0C668.8 360.0 669.1 358.0 669.5 356.1C669.8 354.1 670.1 352.1 670.5 350.1C670.8 348.2 671.2 346.2 671.6 344.2C671.9 342.2 672.3 340.3 672.7 338.3C673.0 336.4 673.4 334.4 673.7 332.4C674.1 330.5 674.4 328.5 674.7 326.5C675.0 324.6 675.3 322.6 675.6 320.6C675.9 318.6 676.2 316.7 676.6 314.7C676.9 312.7 677.3 310.7 677.7 308.7C678.1 306.7 678.6 304.7 679.1 302.8C679.6 300.8 680.1 298.9 680.7 296.9C681.3 295.0 681.9 293.1 682.6 291.2C683.2 289.2 683.9 287.3 684.6 285.4C685.4 283.6 686.1 281.7 686.9 279.8C687.7 277.9 688.5 276.1 689.4 274.3C690.3 272.4 691.2 270.6 692.2 268.9C693.1 267.1 694.1 265.3 695.2 263.6C696.2 261.8 697.3 260.1 698.4 258.4C699.5 256.7 700.6 255.0 701.8 253.4C702.9 251.7 704.1 250.1 705.3 248.5C706.5 246.9 707.8 245.3 709.0 243.7C710.3 242.1 711.6 240.5 712.9 239.0C714.2 237.5 715.5 235.9 716.9 234.4C718.3 232.9 719.6 231.5 721.1 230.0C722.5 228.6 723.9 227.2 725.4 225.8C726.9 224.4 728.4 223.1 730.0 221.8C731.5 220.4 733.1 219.2 734.7 217.9C736.3 216.7 738.0 215.5 739.6 214.3C741.3 213.2 743.0 212.0 744.6 210.9C746.3 209.8 748.1 208.8 749.8 207.7C751.5 206.7 753.2 205.7 755.0 204.6C756.7 203.6 758.5 202.7 760.2 201.7C762.0 200.7 763.8 199.7 765.5 198.8C767.3 197.8 769.1 196.9 770.9 196.0C772.7 195.1 774.5 194.2 776.3 193.3C778.1 192.4 779.9 191.6 781.7 190.7C783.6 189.9 785.4 189.0 787.2 188.2C789.1 187.4 790.9 186.6 792.8 185.8C794.6 185.0 796.5 184.3 798.4 183.5C800.2 182.8 802.1 182.1 804.0 181.4C805.9 180.7 807.8 180.0 809.7 179.3C811.6 178.7 813.5 178.0 815.4 177.4C817.3 176.8 819.3 176.2 821.2 175.6C823.1 175.1 825.1 174.5 827.0 174.0C828.9 173.4 830.9 172.9 832.8 172.4C834.8 171.9 836.8 171.5 838.7 171.0C840.7 170.5 842.6 170.1 844.6 169.7C846.6 169.3 848.5 168.8 850.5 168.4C852.5 168.0 854.4 167.6 856.4 167.2C858.4 166.9 860.3 166.5 862.3 166.1C864.3 165.8 866.2 165.4 868.2 165.0C870.2 164.7 872.1 164.3 874.1 164.0C876.1 163.6 878.0 163.2 880.0 162.8C881.9 162.5 883.9 162.1 885.8 161.6C887.7 161.2 889.7 160.8 891.6 160.3C893.6 159.8 895.5 159.4 897.4 158.9C899.4 158.4 901.3 157.9 903.3 157.5C905.2 157.0 907.2 156.5 909.1 156.1C911.1 155.6 913.0 155.1 915.0 154.7C917.0 154.3 918.9 153.9 920.9 153.5C922.9 153.1 924.9 152.8 926.9 152.4C928.8 152.1 930.8 151.8 932.8 151.5C934.8 151.2 936.8 150.9 938.8 150.6C940.8 150.4 942.8 150.1 944.8 149.9C946.8 149.7 948.8 149.4 950.8 149.2C952.8 149.0 954.8 148.8 956.8 148.6C958.8 148.4 960.8 148.3 962.8 148.1C964.8 147.9 966.8 147.8 968.8 147.6C970.8 147.5 972.8 147.3 974.8 147.2C976.8 147.1 978.8 147.0 980.8 146.8C982.8 146.7 984.8 146.6 986.8 146.6C988.8 146.5 990.8 146.4 992.8 146.4C994.8 146.3 996.8 146.3 998.8 146.2C1000.9 146.2 1002.9 146.2 1004.9 146.2C1006.9 146.2 1008.9 146.2 1010.9 146.2C1012.9 146.2 1014.9 146.2 1016.9 146.3C1018.9 146.3 1020.9 146.4 1022.9 146.4C1024.9 146.5 1027.0 146.6 1029.0 146.7C1031.0 146.8 1033.0 146.9 1035.0 147.0C1037.0 147.1 1039.0 147.2 1041.0 147.4C1043.0 147.6 1045.0 147.7 1047.0 147.9C1049.0 148.1 1051.0 148.4 1053.0 148.6C1055.0 148.9 1057.0 149.2 1059.0 149.5C1061.0 149.8 1063.0 150.2 1065.0 150.6C1067.0 151.0 1069.0 151.4 1070.9 151.9C1072.9 152.3 1074.9 152.8 1076.8 153.4C1078.8 153.9 1080.7 154.4 1082.6 155.0C1084.6 155.6 1086.5 156.2 1088.4 156.9C1090.3 157.5 1092.2 158.2 1094.1 158.9C1096.0 159.6 1097.9 160.4 1099.8 161.2C1101.6 162.0 1103.5 162.8 1105.3 163.7C1107.1 164.6 1108.9 165.5 1110.7 166.4C1112.5 167.4 1114.3 168.3 1116.0 169.3C1117.8 170.3 1119.6 171.3 1121.3 172.3C1123.0 173.3 1124.8 174.4 1126.4 175.6C1128.1 176.7 1129.8 177.9 1131.4 179.2C1133.0 180.5 1134.5 181.8 1136.0 183.2C1137.5 184.6 1138.9 186.0 1140.3 187.5C1141.8 188.9 1143.1 190.4 1144.5 191.9C1145.9 193.3 1147.2 194.8 1148.6 196.3C1149.9 197.8 1151.3 199.2 1152.6 200.7C1154.0 202.2 1155.3 203.7 1156.7 205.2C1158.0 206.6 1159.4 208.1 1160.7 209.6C1162.0 211.2 1163.3 212.7 1164.6 214.2C1165.9 215.8 1167.2 217.3 1168.5 218.9C1169.7 220.5 1171.0 222.1 1172.2 223.7C1173.4 225.3 1174.6 226.9 1175.8 228.6C1176.9 230.2 1178.1 231.8 1179.3 233.5C1180.4 235.1 1181.6 236.7 1182.7 238.4C1183.8 240.0 1185.0 241.7 1186.1 243.4C1187.2 245.0 1188.4 246.7 1189.5 248.3C1190.6 250.0 1191.7 251.7 1192.8 253.3C1193.9 255.0 1195.0 256.7 1196.1 258.4C1197.2 260.1 1198.3 261.7 1199.3 263.4C1200.4 265.1 1201.5 266.8 1202.6 268.5C1203.6 270.2 1204.7 271.9 1205.8 273.6C1206.8 275.3 1207.9 277.0 1208.9 278.8C1209.9 280.5 1210.9 282.2 1211.9 284.0C1212.9 285.8 1213.9 287.5 1214.8 289.3C1215.8 291.1 1216.7 292.9 1217.6 294.7C1218.5 296.5 1219.4 298.3 1220.3 300.1C1221.2 301.8 1222.0 303.6 1222.9 305.4C1223.9 307.2 1224.8 308.9 1225.7 310.7C1226.7 312.4 1227.6 314.1 1228.6 315.9C1229.6 317.6 1230.6 319.3 1231.6 321.0C1232.6 322.8 1233.6 324.5 1234.6 326.2C1235.7 327.9 1236.7 329.7 1237.7 331.4C1238.7 333.2 1239.6 334.9 1240.6 336.7C1241.6 338.4 1242.5 340.2 1243.5 342.0C1244.4 343.8 1245.3 345.5 1246.3 347.3C1247.2 349.0 1248.1 350.7 1249.1 352.4C1250.1 354.1 1251.2 355.8 1252.2 357.4C1253.3 359.1 1254.5 360.7 1255.6 362.3C1256.7 364.0 1257.9 365.6 1259.0 367.3C1260.1 369.0 1261.2 370.7 1262.2 372.4C1263.2 374.2 1264.2 375.9 1265.2 377.7C1266.1 379.5 1267.1 381.3 1268.0 383.0C1268.9 384.8 1269.8 386.6 1270.8 388.4C1271.7 390.2 1272.6 391.9 1273.5 393.7C1274.4 395.5 1275.4 397.2 1276.3 399.0C1277.2 400.8 1278.1 402.6 1279.1 404.3C1280.0 406.1 1280.9 407.9 1281.8 409.7C1282.7 411.5 1283.6 413.4 1284.4 415.2C1285.2 417.1 1286.0 419.0 1286.7 420.9C1287.4 422.8 1288.0 424.8 1288.6 426.7C1289.1 428.7 1289.5 430.7 1289.9 432.7C1290.2 434.8 1290.5 436.8 1290.6 438.9C1290.8 440.9 1290.8 443.0 1290.7 445.0C1290.7 447.1 1290.5 449.2 1290.2 451.2C1289.9 453.2 1289.4 455.3 1288.8 457.2C1288.3 459.2 1287.5 461.2 1286.7 463.1C1285.9 465.0 1285.0 466.9 1284.0 468.7C1282.9 470.5 1281.8 472.2 1280.6 473.9C1279.4 475.6 1278.1 477.3 1276.7 478.9C1275.3 480.4 1273.8 481.9 1272.3 483.3C1270.7 484.7 1269.0 486.0 1267.3 487.2C1265.5 488.4 1263.7 489.5 1261.9 490.4C1260.0 491.4 1258.1 492.3 1256.2 493.1C1254.3 493.9 1252.3 494.6 1250.4 495.3C1248.5 496.0 1246.5 496.6 1244.5 497.2C1242.6 497.8 1240.6 498.3 1238.7 498.9C1236.7 499.4 1234.8 499.9 1232.8 500.4C1230.9 500.9 1228.9 501.4 1226.9 501.8C1225.0 502.3 1223.0 502.8 1221.1 503.2C1219.1 503.7 1217.2 504.1 1215.3 504.6C1213.3 505.1 1211.4 505.5 1209.5 506.0C1207.6 506.5 1205.7 507.0 1203.9 507.5C1202.1 508.1 1200.3 508.7 1198.5 509.4C1196.7 510.1 1195.0 510.8 1193.4 511.7C1191.7 512.5 1190.1 513.4 1188.6 514.4C1187.0 515.4 1185.6 516.5 1184.2 517.7C1182.8 518.8 1181.5 520.1 1180.3 521.5C1179.1 522.8 1178.0 524.3 1177.0 525.7C1176.0 527.2 1175.1 528.8 1174.3 530.3C1173.6 531.9 1173.0 533.5 1172.6 535.1C1172.2 536.8 1172.0 538.4 1171.9 540.2C1171.8 542.0 1171.9 543.8 1172.0 545.6C1172.1 547.5 1172.4 549.4 1172.6 551.4C1172.9 553.3 1173.2 555.3 1173.5 557.2C1173.8 559.2 1174.1 561.1 1174.4 563.1C1174.7 565.1 1175.1 567.0 1175.4 569.1C1175.7 571.1 1176.0 573.2 1176.2 575.3C1176.3 577.4 1176.4 579.5 1176.3 581.7C1176.1 583.8 1175.8 586.0 1175.3 588.1C1174.7 590.2 1174.0 592.3 1173.1 594.3C1172.2 596.3 1171.0 598.2 1169.8 600.0C1168.6 601.8 1167.2 603.5 1165.7 605.1C1164.2 606.7 1162.5 608.1 1160.8 609.5C1159.1 610.9 1157.2 612.1 1155.3 613.2C1153.5 614.3 1151.5 615.3 1149.5 616.1C1147.5 616.9 1145.4 617.6 1143.3 618.2C1141.3 618.8 1139.2 619.3 1137.2 619.8C1135.2 620.2 1133.1 620.6 1131.1 620.9C1129.1 621.3 1127.1 621.6 1125.1 621.9C1123.1 622.2 1121.1 622.4 1119.1 622.7C1117.1 623.0 1115.1 623.2 1113.1 623.5C1111.1 623.7 1109.1 623.9 1107.2 624.2C1105.2 624.4 1103.2 624.7 1101.2 624.9C1099.2 625.1 1097.2 625.4 1095.3 625.6C1093.3 625.9 1091.3 626.1 1089.4 626.4C1087.4 626.6 1085.4 626.9 1083.4 627.2C1081.5 627.5 1079.5 627.7 1077.6 628.0C1075.6 628.3 1073.6 628.6 1071.7 628.9C1069.7 629.2 1067.7 629.5 1065.8 629.9C1063.8 630.2 1061.9 630.5 1059.9 630.8C1057.9 631.1 1056.0 631.5 1054.0 631.8C1052.0 632.2 1050.1 632.5 1048.1 632.8C1046.1 633.2 1044.2 633.5 1042.2 633.9C1040.2 634.2 1038.2 634.5 1036.3 634.9C1034.3 635.2 1032.3 635.6 1030.4 635.9C1028.4 636.2 1026.4 636.6 1024.4 636.9C1022.5 637.3 1020.5 637.6 1018.5 637.9C1016.5 638.3 1014.5 638.6 1012.6 638.9C1010.6 639.2 1008.6 639.6 1006.6 639.9C1004.7 640.2 1002.7 640.5 1000.7 640.9C998.7 641.2 996.8 641.5 994.8 641.8C992.8 642.1 990.9 642.5 988.9 642.8C986.9 643.1 984.9 643.4 983.0 643.8C981.0 644.1 979.0 644.4 977.1 644.8C975.1 645.1 973.1 645.4 971.2 645.8C969.2 646.1 967.3 646.4 965.3 646.8C963.3 647.1 961.4 647.5 959.4 647.9C957.5 648.2 955.5 648.6 953.6 648.9C951.6 649.3 949.6 649.7 947.7 650.1C945.7 650.4 943.8 650.8 941.9 651.2C939.9 651.6 938.0 652.0 936.0 652.4C934.1 652.8 932.1 653.2 930.2 653.6C928.3 654.0 926.4 654.4 924.4 654.8C922.5 655.2 920.6 655.7 918.7 656.1C916.8 656.6 914.9 657.0 912.9 657.5C911.0 657.9 909.1 658.4 907.1 658.9C905.1 659.4 903.2 659.8 901.1 660.3C899.1 660.7 897.1 661.1 895.0 661.5C892.9 661.8 890.8 662.2 888.7 662.3C886.5 662.5 884.3 662.5 882.1 662.4C879.9 662.2 877.7 661.9 875.6 661.4C873.4 660.9 871.4 660.1 869.4 659.3C867.4 658.4 865.5 657.4 863.6 656.4C861.8 655.3 860.0 654.2 858.3 653.0C856.6 651.8 854.9 650.5 853.3 649.1C851.7 647.8 850.1 646.3 848.6 644.8C847.2 643.2 845.8 641.6 844.5 639.8C843.3 638.1 842.2 636.2 841.3 634.3C840.4 632.4 839.6 630.4 838.9 628.5C838.1 626.6 837.5 624.6 836.9 622.7C836.3 620.7 835.7 618.8 835.1 616.9C834.5 615.1 833.9 613.2 833.2 611.4C832.5 609.6 831.9 607.8 831.1 606.1C830.3 604.4 829.4 602.7 828.5 601.2C827.5 599.6 826.5 598.2 825.3 596.9C824.1 595.5 822.9 594.3 821.5 593.2C820.2 592.0 818.7 591.0 817.2 590.2C815.7 589.3 814.1 588.5 812.4 587.8C810.8 587.2 809.1 586.6 807.3 586.1C805.5 585.6 803.7 585.2 801.8 584.8C800.0 584.4 798.1 584.1 796.2 583.9C794.3 583.6 792.4 583.4 790.4 583.2C788.5 583.0 786.6 582.8 784.7 582.7C782.7 582.6 780.8 582.6 778.8 582.6C776.9 582.5 774.9 582.5 772.9 582.6C771.0 582.6 769.0 582.6 767.0 582.6C765.0 582.7 763.0 582.7 761.0 582.8C759.0 582.8 757.0 582.8 755.0 582.9C753.0 582.9 751.0 582.9 749.0 583.0C746.9 583.0 744.9 583.0 742.9 583.0C740.9 583.0 738.8 583.0 736.8 582.9C734.7 582.8 732.7 582.8 730.6 582.6C728.6 582.5 726.5 582.3 724.5 582.1C722.4 581.8 720.3 581.6 718.3 581.2C716.2 580.8 714.1 580.3 712.1 579.7C710.1 579.1 708.0 578.4 706.1 577.6C704.1 576.7 702.2 575.8 700.4 574.7C698.5 573.7 696.7 572.5 695.0 571.2C693.3 570.0 691.7 568.6 690.2 567.2C688.6 565.8 687.1 564.3 685.7 562.8C684.3 561.2 683.0 559.6 681.8 558.0C680.5 556.4 679.4 554.7 678.2 553.0C677.0 551.4 675.9 549.7 674.8 548.0C673.6 546.3 672.5 544.5 671.5 542.9C670.5 541.2 669.5 539.7 668.7 538.1C667.9 536.5 667.2 534.9 666.7 533.3C666.2 531.8 665.9 530.4 665.6 528.8Z" fill="none" stroke="#3fc884" stroke-width="1"/>
<path d="M807.8 218.3C806.6 218.7 802.6 219.9 800.6 220.6C798.7 221.2 798.0 221.4 796.4 222.0C794.7 222.5 792.6 223.2 790.7 223.9C788.8 224.6 787.0 225.3 785.1 226.0C783.2 226.8 781.4 227.6 779.6 228.4C777.7 229.2 775.9 230.0 774.1 230.9C772.3 231.8 770.6 232.7 768.8 233.6C767.0 234.6 765.3 235.6 763.6 236.6C761.9 237.6 760.2 238.7 758.6 239.8C756.9 240.9 755.3 242.1 753.7 243.3C752.1 244.5 750.6 245.8 749.0 247.1C747.5 248.4 746.1 249.7 744.7 251.1C743.2 252.5 741.9 254.0 740.6 255.5C739.3 257.0 738.0 258.6 736.8 260.2C735.7 261.8 734.5 263.4 733.5 265.1C732.4 266.8 731.4 268.5 730.4 270.3C729.5 272.0 728.6 273.8 727.8 275.6C727.0 277.4 726.3 279.3 725.6 281.2C724.9 283.0 724.2 284.9 723.6 286.8C722.9 288.7 722.3 290.6 721.6 292.5C721.0 294.4 720.3 296.3 719.6 298.1C719.0 300.0 718.3 301.9 717.6 303.8C717.0 305.7 716.3 307.6 715.6 309.5C715.0 311.3 714.3 313.2 713.6 315.1C712.9 317.0 712.3 318.9 711.6 320.8C710.9 322.6 710.2 324.5 709.5 326.4C708.8 328.2 708.0 330.1 707.3 331.9C706.5 333.8 705.7 335.6 704.8 337.4C704.0 339.2 703.1 341.0 702.2 342.8C701.2 344.5 700.2 346.3 699.2 348.0C698.2 349.7 697.1 351.4 696.1 353.1C695.1 354.9 694.1 356.6 693.2 358.3C692.3 360.1 691.5 361.9 690.7 363.8C690.0 365.6 689.3 367.5 688.8 369.4C688.2 371.3 687.7 373.2 687.3 375.2C686.9 377.1 686.5 379.1 686.2 381.1C685.9 383.0 685.7 385.0 685.5 387.0C685.3 389.0 685.2 391.0 685.1 393.0C684.9 395.0 684.8 397.0 684.8 399.0C684.7 401.0 684.7 403.0 684.6 405.0C684.6 407.0 684.6 409.0 684.6 411.0C684.5 413.0 684.5 415.0 684.5 417.0C684.5 419.0 684.5 421.0 684.5 423.0C684.5 425.0 684.5 427.0 684.5 429.0C684.5 431.0 684.4 433.0 684.4 435.0C684.4 437.0 684.4 439.0 684.4 441.0C684.4 443.0 684.4 445.0 684.4 447.0C684.4 449.0 684.4 451.0 684.4 453.0C684.4 455.0 684.5 457.0 684.5 459.0C684.5 461.0 684.5 463.0 684.5 465.0C684.5 467.0 684.6 469.0 684.6 471.0C684.6 473.0 684.7 475.0 684.7 477.0C684.7 479.0 684.8 481.0 684.8 483.0C684.8 485.0 684.9 487.0 684.9 489.0C685.0 491.0 685.0 493.0 685.1 495.0C685.1 497.0 685.2 499.0 685.2 501.0C685.3 503.0 685.4 505.0 685.4 507.0C685.5 508.9 685.5 510.9 685.6 512.9C685.7 514.9 685.8 516.9 685.9 518.9C686.1 520.9 686.2 522.9 686.4 524.9C686.7 526.9 686.9 528.9 687.3 530.8C687.7 532.7 688.2 534.7 688.9 536.5C689.5 538.3 690.3 540.1 691.3 541.8C692.2 543.5 693.4 545.1 694.7 546.6C695.9 548.0 697.4 549.4 698.9 550.7C700.4 551.9 702.0 553.0 703.7 554.1C705.4 555.1 707.2 556.0 709.0 556.8C710.8 557.7 712.6 558.4 714.5 559.0C716.4 559.6 718.3 560.0 720.3 560.4C722.2 560.8 724.2 561.1 726.2 561.3C728.1 561.5 730.1 561.6 732.1 561.6C734.1 561.7 736.1 561.7 738.1 561.6C740.1 561.6 742.1 561.5 744.1 561.4C746.1 561.4 748.1 561.3 750.1 561.2C752.1 561.1 754.1 561.0 756.1 560.9C758.1 560.8 760.1 560.7 762.1 560.6C764.1 560.5 766.1 560.4 768.1 560.3C770.1 560.2 772.1 560.1 774.1 560.1C776.1 560.0 778.1 559.9 780.1 559.9C782.1 559.9 784.1 559.9 786.1 560.0C788.1 560.1 790.0 560.2 792.0 560.4C794.0 560.7 796.0 561.0 797.9 561.3C799.9 561.7 801.8 562.1 803.8 562.6C805.7 563.1 807.6 563.7 809.5 564.3C811.4 564.9 813.3 565.5 815.2 566.2C817.0 566.9 818.9 567.7 820.7 568.5C822.5 569.3 824.3 570.2 826.0 571.2C827.8 572.2 829.5 573.2 831.1 574.3C832.7 575.5 834.3 576.7 835.8 578.0C837.3 579.3 838.8 580.6 840.1 582.1C841.4 583.5 842.6 585.1 843.8 586.7C844.9 588.3 846.0 590.0 847.0 591.7C848.0 593.4 849.0 595.2 849.9 596.9C850.9 598.7 851.9 600.5 852.9 602.1C853.9 603.8 855.0 605.6 856.2 607.1C857.3 608.7 858.6 610.3 859.9 611.7C861.3 613.1 862.8 614.3 864.4 615.5C865.9 616.7 867.6 617.8 869.3 618.7C871.0 619.7 872.8 620.6 874.6 621.3C876.3 622.0 878.1 622.6 880.0 623.0C881.8 623.4 883.7 623.5 885.6 623.5C887.5 623.4 889.4 623.2 891.3 622.8C893.2 622.5 895.2 621.9 897.1 621.4C899.0 620.9 901.0 620.4 902.9 619.8C904.8 619.3 906.7 618.8 908.7 618.2C910.6 617.7 912.5 617.2 914.5 616.7C916.4 616.2 918.3 615.7 920.3 615.2C922.2 614.8 924.2 614.3 926.1 613.9C928.1 613.5 930.0 613.1 932.0 612.7C934.0 612.3 935.9 612.0 937.9 611.6C939.9 611.3 941.8 610.9 943.8 610.6C945.8 610.3 947.8 610.0 949.7 609.6C951.7 609.3 953.7 609.0 955.7 608.7C957.6 608.4 959.6 608.1 961.6 607.7C963.6 607.4 965.5 607.1 967.5 606.8C969.5 606.5 971.5 606.2 973.5 606.0C975.4 605.7 977.4 605.4 979.4 605.1C981.4 604.8 983.4 604.5 985.3 604.2C987.3 603.9 989.3 603.6 991.3 603.3C993.2 603.0 995.2 602.7 997.2 602.4C999.2 602.1 1001.1 601.8 1003.1 601.5C1005.1 601.1 1007.1 600.8 1009.0 600.4C1011.0 600.1 1013.0 599.7 1014.9 599.3C1016.9 599.0 1018.9 598.6 1020.8 598.2C1022.8 597.9 1024.8 597.5 1026.7 597.2C1028.7 596.8 1030.7 596.5 1032.6 596.2C1034.6 595.9 1036.6 595.6 1038.6 595.3C1040.6 595.0 1042.5 594.8 1044.5 594.5C1046.5 594.3 1048.5 594.1 1050.5 593.9C1052.5 593.7 1054.5 593.5 1056.5 593.3C1058.5 593.1 1060.4 592.9 1062.4 592.7C1064.4 592.5 1066.4 592.4 1068.4 592.2C1070.4 592.0 1072.4 591.8 1074.4 591.6C1076.4 591.5 1078.4 591.3 1080.4 591.1C1082.4 590.9 1084.3 590.7 1086.3 590.5C1088.3 590.4 1090.3 590.2 1092.3 590.0C1094.3 589.8 1096.3 589.6 1098.3 589.4C1100.3 589.2 1102.3 589.0 1104.3 588.8C1106.2 588.6 1108.2 588.4 1110.2 588.1C1112.2 587.8 1114.2 587.6 1116.1 587.2C1118.1 586.9 1120.1 586.5 1122.0 586.1C1123.9 585.6 1125.9 585.1 1127.7 584.4C1129.6 583.8 1131.4 583.0 1133.1 582.0C1134.7 581.1 1136.3 580.0 1137.8 578.7C1139.2 577.4 1140.5 575.9 1141.6 574.4C1142.7 572.8 1143.7 571.1 1144.5 569.3C1145.3 567.5 1146.0 565.6 1146.5 563.7C1147.0 561.8 1147.3 559.9 1147.5 557.9C1147.7 556.0 1147.7 554.0 1147.7 552.0C1147.7 550.1 1147.4 548.1 1147.4 546.1C1147.3 544.1 1147.1 542.1 1147.2 540.2C1147.3 538.3 1147.5 536.3 1147.9 534.4C1148.3 532.5 1148.9 530.7 1149.7 528.9C1150.4 527.1 1151.4 525.4 1152.5 523.7C1153.5 522.1 1154.7 520.4 1155.9 518.9C1157.2 517.3 1158.5 515.8 1159.9 514.4C1161.2 512.9 1162.7 511.5 1164.1 510.2C1165.6 508.9 1167.2 507.6 1168.8 506.4C1170.3 505.2 1172.0 504.1 1173.7 503.1C1175.4 502.0 1177.1 501.1 1178.9 500.2C1180.7 499.3 1182.5 498.5 1184.3 497.7C1186.2 496.9 1188.1 496.3 1189.9 495.6C1191.8 495.0 1193.7 494.4 1195.7 493.9C1197.6 493.4 1199.5 492.9 1201.5 492.4C1203.4 491.9 1205.4 491.5 1207.3 491.0C1209.3 490.5 1211.2 490.1 1213.1 489.6C1215.1 489.1 1217.0 488.6 1218.9 488.1C1220.9 487.5 1222.8 486.9 1224.6 486.3C1226.5 485.6 1228.4 484.9 1230.2 484.1C1232.1 483.4 1233.9 482.5 1235.6 481.6C1237.4 480.7 1239.2 479.7 1240.9 478.7C1242.6 477.7 1244.2 476.6 1245.9 475.4C1247.5 474.3 1249.1 473.1 1250.7 471.9C1252.3 470.7 1253.8 469.4 1255.3 468.1C1256.8 466.7 1258.2 465.4 1259.6 463.9C1260.9 462.5 1262.2 460.9 1263.3 459.3C1264.5 457.7 1265.5 456.1 1266.4 454.3C1267.2 452.6 1268.0 450.7 1268.5 448.8C1269.0 447.0 1269.3 445.0 1269.4 443.1C1269.5 441.2 1269.4 439.3 1269.1 437.3C1268.9 435.4 1268.3 433.6 1267.7 431.7C1267.1 429.8 1266.3 428.0 1265.5 426.2C1264.7 424.4 1263.7 422.6 1262.8 420.8C1261.9 419.0 1261.0 417.3 1260.0 415.5C1259.1 413.7 1258.1 412.0 1257.1 410.3C1256.2 408.5 1255.2 406.8 1254.3 405.0C1253.3 403.2 1252.4 401.5 1251.5 399.7C1250.6 397.9 1249.8 396.1 1249.0 394.2C1248.2 392.4 1247.4 390.6 1246.7 388.7C1245.9 386.9 1245.2 385.0 1244.3 383.2C1243.5 381.4 1242.7 379.6 1241.8 377.8C1240.9 376.0 1239.9 374.3 1238.9 372.6C1237.9 370.8 1236.8 369.1 1235.8 367.4C1234.7 365.7 1233.6 364.1 1232.6 362.4C1231.5 360.7 1230.5 359.0 1229.4 357.3C1228.4 355.5 1227.4 353.8 1226.4 352.1C1225.5 350.3 1224.5 348.6 1223.6 346.8C1222.7 345.0 1221.8 343.2 1221.0 341.4C1220.1 339.6 1219.3 337.8 1218.4 336.0C1217.6 334.2 1216.7 332.3 1215.9 330.5C1215.0 328.7 1214.1 327.0 1213.2 325.2C1212.3 323.4 1211.4 321.6 1210.5 319.8C1209.5 318.1 1208.6 316.3 1207.6 314.6C1206.7 312.8 1205.7 311.1 1204.7 309.3C1203.6 307.6 1202.6 305.9 1201.5 304.2C1200.4 302.6 1199.3 300.9 1198.1 299.3C1197.0 297.7 1195.7 296.1 1194.5 294.5C1193.3 293.0 1192.0 291.4 1190.7 289.9C1189.4 288.4 1188.0 286.9 1186.7 285.5C1185.3 284.0 1183.9 282.5 1182.5 281.1C1181.1 279.7 1179.7 278.3 1178.3 276.9C1176.9 275.4 1175.5 274.1 1174.0 272.7C1172.6 271.3 1171.1 269.9 1169.6 268.6C1168.2 267.2 1166.7 265.9 1165.2 264.5C1163.7 263.2 1162.2 261.9 1160.7 260.6C1159.2 259.2 1157.7 257.9 1156.3 256.5C1154.8 255.2 1153.4 253.8 1152.0 252.4C1150.6 250.9 1149.2 249.5 1147.9 248.0C1146.6 246.5 1145.3 244.9 1144.0 243.4C1142.8 241.8 1141.5 240.3 1140.3 238.7C1139.1 237.1 1137.9 235.5 1136.6 234.0C1135.4 232.4 1134.2 230.8 1132.9 229.2C1131.7 227.7 1130.4 226.1 1129.2 224.6C1127.9 223.0 1126.6 221.4 1125.4 219.9C1124.1 218.4 1122.8 216.8 1121.5 215.3C1120.2 213.8 1118.8 212.3 1117.5 210.9C1116.1 209.4 1114.7 208.0 1113.3 206.6C1111.9 205.2 1110.4 203.9 1108.8 202.6C1107.3 201.3 1105.7 200.1 1104.1 199.0C1102.4 197.9 1100.7 196.9 1099.0 195.9C1097.3 195.0 1095.5 194.1 1093.6 193.3C1091.8 192.5 1089.9 191.8 1088.1 191.1C1086.2 190.5 1084.3 189.8 1082.4 189.3C1080.5 188.7 1078.5 188.2 1076.6 187.7C1074.7 187.2 1072.7 186.7 1070.8 186.3C1068.8 185.9 1066.8 185.5 1064.9 185.2C1062.9 184.8 1060.9 184.5 1059.0 184.2C1057.0 183.9 1055.0 183.7 1053.0 183.5C1051.0 183.2 1049.0 183.0 1047.0 182.8C1045.1 182.7 1043.1 182.5 1041.1 182.4C1039.1 182.3 1037.0 182.2 1035.1 182.1C1033.1 182.1 1031.0 182.0 1029.3 182.0C1027.7 181.9 1026.8 181.9 1025.2 181.9C1023.5 181.9 1020.4 181.8 1019.4 181.8" fill="none" stroke="#1ff05a" stroke-width="5.800" stroke-linejoin="round" stroke-linecap="round"/>
<path d="M1135.0 582.0C1135.8 581.1 1138.7 577.9 1139.9 576.4C1141.2 574.8 1141.5 574.2 1142.4 572.7C1143.3 571.2 1144.4 569.3 1145.1 567.5C1145.9 565.7 1146.5 563.8 1146.9 561.9C1147.3 560.0 1147.5 558.1 1147.6 556.1C1147.8 554.1 1147.7 552.1 1147.6 550.2C1147.5 548.2 1147.3 546.2 1147.3 544.2C1147.2 542.3 1147.1 540.3 1147.3 538.4C1147.5 536.4 1147.8 534.5 1148.3 532.7C1148.8 530.8 1149.6 529.0 1150.5 527.2C1151.3 525.5 1152.4 523.8 1153.5 522.2C1154.6 520.5 1155.9 519.0 1157.1 517.4C1158.4 515.9 1159.8 514.4 1161.2 513.0C1162.6 511.6 1164.0 510.3 1165.6 509.0C1167.1 507.7 1168.6 506.5 1170.3 505.3C1171.9 504.2 1173.6 503.1 1175.3 502.1C1177.0 501.1 1178.8 500.2 1180.6 499.4C1182.4 498.5 1184.2 497.7 1186.1 497.0C1187.9 496.3 1189.8 495.6 1191.7 495.0C1193.6 494.4 1195.6 493.9 1197.5 493.4C1199.4 492.9 1201.4 492.4 1203.3 492.0C1205.3 491.5 1207.2 491.1 1209.1 490.6C1211.1 490.1 1213.0 489.6 1215.0 489.1C1216.9 488.6 1218.8 488.1 1220.7 487.5C1222.6 486.9 1224.6 486.3 1226.4 485.6C1228.3 485.0 1230.1 484.2 1232.0 483.4C1233.8 482.6 1235.6 481.7 1237.3 480.7C1239.1 479.8 1240.8 478.8 1242.5 477.7C1244.2 476.6 1245.8 475.5 1247.4 474.4C1249.0 473.2 1250.6 472.0 1252.2 470.7C1253.7 469.5 1255.3 468.2 1256.7 466.8C1258.1 465.4 1259.5 464.0 1260.8 462.5C1262.1 461.0 1263.3 459.5 1264.4 457.8C1265.4 456.2 1266.4 454.4 1267.1 452.6C1267.9 450.8 1268.5 448.9 1268.9 447.1C1269.3 445.2 1269.5 443.2 1269.5 441.3C1269.5 439.4 1269.2 437.4 1268.8 435.6C1268.4 433.7 1267.8 431.8 1267.1 429.9C1266.4 428.1 1265.5 426.3 1264.7 424.5C1263.8 422.7 1262.9 420.9 1262.0 419.1C1261.0 417.4 1260.1 415.6 1259.1 413.9C1258.2 412.1 1257.2 410.4 1256.2 408.6C1255.3 406.8 1254.3 405.1 1253.4 403.3C1252.4 401.6 1251.5 399.8 1250.7 398.0C1249.8 396.2 1249.0 394.3 1248.2 392.5C1247.5 390.7 1246.7 388.8 1245.9 387.0C1245.2 385.1 1244.4 383.3 1243.6 381.5C1242.7 379.7 1241.8 377.9 1240.9 376.1C1240.0 374.4 1239.0 372.7 1237.9 370.9C1236.9 369.2 1235.8 367.5 1234.8 365.8C1233.7 364.1 1232.6 362.5 1231.6 360.8C1230.5 359.1 1229.5 357.4 1228.5 355.6C1227.5 353.9 1226.5 352.2 1225.5 350.4C1224.6 348.7 1223.7 346.9 1222.8 345.1C1221.9 343.3 1221.0 341.5 1220.2 339.7C1219.3 337.9 1218.5 336.1 1217.6 334.3C1216.8 332.4 1215.9 330.6 1215.0 328.8C1214.2 327.1 1213.3 325.3 1212.3 323.5C1211.4 321.7 1210.5 319.9 1209.6 318.2C1208.6 316.4 1207.7 314.6 1206.7 312.9C1205.7 311.2 1204.7 309.4 1203.7 307.7C1202.6 306.0 1201.6 304.3 1200.5 302.7C1199.4 301.0 1198.2 299.4 1197.0 297.8C1195.8 296.2 1194.6 294.6 1193.3 293.1C1192.1 291.5 1190.7 290.0 1189.4 288.5C1188.1 287.0 1186.7 285.5 1185.4 284.1C1184.0 282.6 1182.6 281.2 1181.2 279.8C1179.8 278.3 1178.4 276.9 1177.0 275.5C1175.5 274.1 1174.1 272.7 1172.6 271.4C1171.2 270.0 1169.7 268.6 1168.2 267.3C1166.8 265.9 1165.3 264.6 1163.8 263.3C1162.3 262.0 1160.8 260.6 1159.3 259.3C1157.8 258.0 1156.3 256.6 1154.9 255.2C1153.4 253.9 1152.0 252.4 1150.7 251.0C1149.3 249.5 1148.0 248.1 1146.7 246.5C1145.4 245.0 1144.1 243.5 1142.9 241.9C1141.6 240.4 1140.4 238.8 1139.1 237.2C1137.9 235.6 1136.7 234.0 1135.5 232.5C1134.2 230.9 1133.0 229.3 1131.7 227.8C1130.5 226.2 1129.2 224.6 1128.0 223.1C1126.7 221.5 1125.4 220.0 1124.2 218.5C1122.9 216.9 1121.6 215.4 1120.2 213.9C1118.9 212.4 1117.6 210.9 1116.2 209.5C1114.8 208.1 1113.4 206.7 1111.9 205.3C1110.5 204.0 1109.0 202.6 1107.4 201.4C1105.8 200.2 1104.2 199.1 1102.5 198.0C1100.9 196.9 1099.1 196.0 1097.3 195.1C1095.6 194.2 1093.7 193.3 1091.9 192.6C1090.1 191.8 1088.2 191.2 1086.3 190.5C1084.4 189.9 1082.5 189.3 1080.6 188.7C1078.7 188.2 1076.7 187.7 1074.8 187.2C1072.8 186.8 1070.9 186.3 1068.9 185.9C1067.0 185.6 1065.0 185.2 1063.0 184.9C1061.0 184.5 1059.1 184.2 1057.1 184.0C1055.1 183.7 1053.1 183.5 1051.1 183.2C1049.2 183.0 1047.2 182.8 1045.2 182.7C1043.2 182.5 1041.2 182.4 1039.2 182.3C1037.2 182.2 1035.1 182.1 1033.2 182.1C1031.3 182.0 1029.2 182.0 1027.7 181.9C1026.1 181.9 1025.1 181.9 1023.7 181.9C1022.4 181.9 1020.1 181.8 1019.4 181.8" fill="none" stroke="#259a74" stroke-width="1.400" stroke-linejoin="round"/>
<path d="M807.8 218.3C806.6 218.7 802.6 219.9 800.6 220.6C798.7 221.2 798.0 221.4 796.4 222.0C794.7 222.5 792.6 223.2 790.7 223.9C788.8 224.6 787.0 225.3 785.1 226.0C783.2 226.8 781.4 227.6 779.6 228.4C777.7 229.2 775.9 230.0 774.1 230.9C772.3 231.8 770.6 232.7 768.8 233.6C767.0 234.6 765.3 235.6 763.6 236.6C761.9 237.6 760.2 238.7 758.6 239.8C756.9 240.9 755.3 242.1 753.7 243.3C752.1 244.5 750.6 245.8 749.0 247.1C747.5 248.4 746.1 249.7 744.7 251.1C743.2 252.5 741.9 254.0 740.6 255.5C739.3 257.0 738.0 258.6 736.8 260.2C735.7 261.8 734.5 263.4 733.5 265.1C732.4 266.8 731.4 268.5 730.4 270.3C729.5 272.0 728.6 273.8 727.8 275.6C727.0 277.4 726.3 279.3 725.6 281.2C724.9 283.0 724.2 284.9 723.6 286.8C722.9 288.7 722.3 290.6 721.6 292.5C721.0 294.4 720.3 296.3 719.6 298.1C719.0 300.0 718.3 301.9 717.6 303.8C717.0 305.7 716.3 307.6 715.6 309.5C715.0 311.3 714.3 313.2 713.6 315.1C712.9 317.0 712.3 318.9 711.6 320.8C710.9 322.6 710.2 324.5 709.5 326.4C708.8 328.2 708.0 330.1 707.3 332.0C706.5 333.8 705.7 335.6 704.9 337.5C704.1 339.3 703.2 341.1 702.3 342.9C701.4 344.6 700.4 346.4 699.5 348.1C698.5 349.9 697.4 351.8 696.5 353.2C695.7 354.7 695.2 355.4 694.3 356.9C693.3 358.5 691.3 361.7 690.7 362.6" fill="none" stroke="#259a74" stroke-width="1.200" stroke-linejoin="round"/>
<defs><path id="rb0" d="M721.0 293.0C721.7 293.5 723.6 295.1 724.9 296.1C726.2 297.1 727.6 298.1 728.9 299.2C730.2 300.2 731.5 301.2 732.9 302.2C734.2 303.1 735.6 304.1 737.0 305.0C738.4 305.9 739.8 306.8 741.2 307.6C742.7 308.5 744.1 309.3 745.6 310.0C747.1 310.8 748.6 311.5 750.1 312.3C751.6 313.0 753.1 313.7 754.6 314.4C756.1 315.1 757.7 315.7 759.2 316.4C760.7 317.1 762.2 317.8 763.7 318.5C765.3 319.2 766.8 319.8 768.3 320.5C769.8 321.2 771.4 321.8 772.9 322.4C774.5 323.0 776.1 323.6 777.7 324.0C779.2 324.4 780.9 324.8 782.5 324.9C784.1 325.0 785.8 324.9 787.3 324.5C788.9 324.1 790.4 323.4 791.8 322.6C793.2 321.8 794.5 320.7 795.6 319.5C796.7 318.3 797.7 317.0 798.7 315.6C799.6 314.3 800.3 312.8 801.1 311.3C801.9 309.8 802.6 308.3 803.3 306.8C804.1 305.3 804.8 303.8 805.6 302.3C806.3 300.9 807.1 299.4 807.9 297.9C808.8 296.5 809.7 295.1 810.7 293.9C811.8 292.7 813.0 291.5 814.4 290.6C815.7 289.7 817.2 288.9 818.7 288.3C820.2 287.8 821.9 287.4 823.5 287.2C825.1 287.1 826.8 287.2 828.4 287.4C830.0 287.6 831.6 288.1 833.2 288.5C834.8 289.0 836.4 289.5 838.0 290.1C839.5 290.7 841.0 291.3 842.6 292.0C844.1 292.7 845.6 293.5 847.0 294.3C848.5 295.1 850.0 295.9 851.3 296.8C852.7 297.8 854.0 298.8 855.1 299.9C856.2 301.1 857.2 302.5 857.9 303.9C858.6 305.4 859.1 307.0 859.3 308.6C859.6 310.2 859.6 311.8 859.5 313.5C859.4 315.1 859.0 316.8 858.6 318.4C858.3 320.0 857.7 321.6 857.2 323.2C856.7 324.7 856.1 326.3 855.5 327.8C854.9 329.4 854.3 330.9 853.6 332.5C852.9 334.0 852.3 335.5 851.5 337.0C850.8 338.5 850.0 340.0 849.2 341.4C848.4 342.9 847.5 344.3 846.7 345.7C845.8 347.1 844.8 348.5 843.9 349.9C842.9 351.2 841.9 352.6 840.9 353.9C840.0 355.3 839.0 356.6 838.1 358.0C837.1 359.4 836.2 360.8 835.4 362.2C834.5 363.7 833.7 365.1 833.0 366.6C832.2 368.1 831.5 369.6 830.9 371.1C830.2 372.7 829.6 374.2 829.1 375.8C828.5 377.4 828.0 378.9 827.5 380.5C827.0 382.1 826.5 383.7 826.1 385.3C825.6 386.9 825.2 388.5 824.8 390.2C824.5 391.8 824.1 393.4 823.8 395.1C823.6 396.7 823.3 398.4 823.2 400.0C823.0 401.7 822.9 403.3 822.9 405.0C823.0 406.6 823.1 408.3 823.4 409.9C823.7 411.5 824.1 413.1 824.8 414.6C825.4 416.1 826.3 417.6 827.3 418.9C828.3 420.2 829.4 421.4 830.7 422.4C832.0 423.4 833.4 424.2 834.9 424.7C836.4 425.2 838.1 425.3 839.6 425.2C841.2 425.0 842.8 424.4 844.3 423.8C845.7 423.1 847.1 422.2 848.5 421.3C849.9 420.3 851.2 419.2 852.4 418.2C853.7 417.1 854.9 416.0 856.1 414.8C857.4 413.7 858.5 412.5 859.7 411.3C860.9 410.2 862.1 409.0 863.2 407.7C864.3 406.5 865.5 405.3 866.6 404.1C867.7 402.8 868.8 401.5 869.8 400.3C870.9 399.0 872.0 397.7 873.0 396.4C874.1 395.1 875.1 393.9 876.2 392.6C877.2 391.3 878.3 390.0 879.3 388.7C880.4 387.4 881.4 386.1 882.5 384.8C883.5 383.5 884.6 382.2 885.6 380.9C886.6 379.6 887.7 378.3 888.7 377.0C889.7 375.6 890.7 374.3 891.6 372.9C892.5 371.5 893.4 370.1 894.2 368.6C895.0 367.2 895.7 365.7 896.3 364.1C896.9 362.6 897.5 361.0 898.0 359.4C898.5 357.8 898.9 356.2 899.2 354.6C899.4 353.0 899.6 351.3 899.7 349.7C899.7 348.0 899.6 346.3 899.5 344.7C899.3 343.0 899.1 341.4 898.9 339.7C898.6 338.1 898.3 336.4 898.1 334.8C897.8 333.1 897.6 331.5 897.3 329.8C897.0 328.2 896.7 326.6 896.4 324.9C896.1 323.3 895.8 321.7 895.5 320.0C895.1 318.4 894.8 316.7 894.5 315.1C894.2 313.5 893.9 311.8 893.5 310.2C893.2 308.6 892.8 306.9 892.6 305.3C892.4 303.7 892.1 302.0 892.4 300.5C892.7 299.0 893.3 297.6 894.2 296.4C895.2 295.3 896.6 294.4 898.0 293.5C899.4 292.7 901.0 292.1 902.5 291.5C904.1 290.9 905.7 290.4 907.3 289.9C908.9 289.4 910.5 289.0 912.1 288.6C913.7 288.2 915.3 287.9 917.0 287.6C918.6 287.2 920.2 286.9 921.9 286.6C923.5 286.3 925.2 286.0 926.8 285.7C928.4 285.3 930.1 285.0 931.7 284.7C933.3 284.4 935.0 284.0 936.6 283.7C938.2 283.4 939.9 283.0 941.5 282.7C943.2 282.5 944.8 282.2 946.5 282.1C948.1 281.9 949.8 281.8 951.4 281.9C953.1 281.9 954.8 282.0 956.4 282.2C958.0 282.4 959.7 282.7 961.3 283.2C962.9 283.6 964.4 284.2 965.9 284.9C967.3 285.7 968.7 286.6 969.9 287.7C971.1 288.8 972.2 290.1 973.1 291.4C974.1 292.8 974.9 294.2 975.6 295.7C976.3 297.2 976.9 298.8 977.4 300.4C977.9 301.9 978.3 303.6 978.7 305.2C979.0 306.8 979.2 308.5 979.5 310.1C979.7 311.8 979.9 313.4 980.2 315.1C980.5 316.7 980.8 318.3 981.2 319.9C981.6 321.6 982.1 323.1 982.6 324.7C983.2 326.3 983.8 327.8 984.4 329.4C984.9 330.9 985.4 332.6 985.9 334.1C986.5 335.7 986.9 337.3 987.6 338.8C988.3 340.3 989.1 341.7 990.1 343.1C991.0 344.4 992.1 345.7 993.2 346.9C994.4 348.1 995.6 349.2 996.9 350.3C998.1 351.4 999.5 352.3 1000.9 353.3C1002.3 354.2 1003.7 355.0 1005.2 355.8C1006.6 356.6 1008.1 357.3 1009.6 358.0C1011.1 358.8 1012.7 359.4 1014.2 360.1C1015.7 360.9 1017.2 361.6 1018.7 362.3C1020.2 363.0 1021.7 363.7 1023.2 364.5C1024.7 365.2 1026.2 366.0 1027.6 366.7C1029.1 367.5 1030.6 368.2 1032.1 369.0C1033.6 369.7 1035.1 370.5 1036.6 371.2C1038.1 371.9 1039.6 372.7 1041.1 373.4C1042.6 374.2 1044.0 374.9 1045.5 375.7C1047.0 376.4 1048.5 377.2 1050.0 377.9C1051.5 378.6 1053.0 379.4 1054.5 380.1C1056.0 380.9 1057.4 381.7 1058.9 382.5C1060.4 383.3 1061.8 384.1 1063.3 384.9C1064.8 385.6 1066.3 386.3 1067.8 386.8C1069.4 387.2 1071.0 387.5 1072.6 387.5C1074.2 387.5 1075.9 387.2 1077.4 386.7C1078.9 386.2 1080.4 385.4 1081.6 384.4C1082.8 383.4 1083.8 382.0 1084.6 380.6C1085.3 379.2 1085.9 377.6 1086.2 376.0C1086.4 374.5 1086.4 372.8 1086.3 371.2C1086.1 369.6 1085.6 367.9 1085.2 366.4C1084.7 364.8 1084.1 363.2 1083.5 361.7C1082.9 360.1 1082.2 358.6 1081.4 357.1C1080.7 355.6 1079.9 354.1 1079.1 352.7C1078.2 351.3 1077.3 349.9 1076.3 348.6C1075.3 347.2 1074.2 346.0 1073.1 344.8C1072.0 343.5 1070.8 342.4 1069.5 341.3C1068.3 340.1 1067.0 339.1 1065.7 338.0C1064.4 337.0 1063.1 336.0 1061.7 335.1C1060.4 334.1 1058.9 333.2 1057.6 332.3C1056.2 331.4 1054.8 330.5 1053.4 329.5C1052.0 328.6 1050.7 327.6 1049.3 326.6C1048.0 325.6 1046.7 324.6 1045.3 323.6C1044.0 322.6 1042.7 321.6 1041.4 320.5C1040.1 319.4 1038.9 318.4 1037.6 317.2C1036.4 316.1 1035.2 315.0 1034.0 313.8C1032.8 312.7 1031.6 311.5 1030.5 310.3C1029.3 309.1 1028.2 307.9 1027.0 306.7C1025.8 305.5 1024.7 304.3 1023.5 303.1C1022.3 302.0 1021.1 300.8 1019.9 299.6C1018.7 298.5 1017.5 297.3 1016.3 296.1C1015.2 295.0 1014.0 293.8 1012.9 292.5C1011.8 291.3 1010.6 290.0 1009.7 288.7C1008.8 287.4 1007.8 286.0 1007.3 284.5C1006.7 283.0 1006.5 281.4 1006.4 279.8C1006.4 278.2 1006.7 276.5 1007.1 274.9C1007.6 273.4 1008.2 271.8 1009.0 270.4C1009.8 268.9 1010.8 267.6 1011.9 266.4C1013.0 265.2 1014.4 264.3 1015.6 263.2C1016.9 262.2 1018.2 261.2 1019.5 260.1C1020.7 259.0 1021.8 257.7 1023.0 256.6C1024.3 255.6 1025.5 254.4 1026.9 253.7C1028.3 253.0 1029.9 252.6 1031.4 252.4C1033.0 252.3 1034.7 252.4 1036.3 252.7C1037.9 253.0 1039.6 253.5 1041.1 254.1C1042.6 254.8 1044.0 255.6 1045.3 256.5C1046.7 257.5 1048.0 258.6 1049.2 259.7C1050.4 260.8 1051.6 262.0 1052.8 263.2C1053.9 264.4 1055.1 265.6 1056.2 266.8C1057.4 268.0 1058.5 269.2 1059.8 270.3C1061.0 271.4 1062.3 272.5 1063.6 273.5C1064.9 274.5 1066.3 275.5 1067.7 276.2C1069.2 277.0 1070.7 277.7 1072.3 278.2C1073.8 278.7 1075.5 279.0 1077.1 279.0C1078.7 279.1 1080.4 278.9 1081.9 278.5C1083.5 278.1 1085.0 277.4 1086.5 276.6C1087.9 275.8 1089.2 274.8 1090.5 273.7C1091.8 272.7 1092.9 271.5 1094.1 270.3C1095.3 269.1 1096.4 267.9 1097.5 266.6C1098.5 265.3 1099.5 264.0 1100.5 262.7C1101.5 261.3 1102.5 260.0 1103.5 258.6C1104.5 257.3 1105.4 255.9 1106.5 254.6C1107.5 253.3 1108.5 252.0 1109.6 250.7C1110.6 249.4 1111.7 248.1 1112.8 246.9C1113.9 245.6 1115.0 244.3 1116.1 243.1C1117.2 241.8 1118.3 240.6 1119.4 239.3C1120.5 238.1 1121.7 236.8 1122.7 235.6C1123.7 234.5 1124.8 233.4 1125.5 232.6C1126.2 231.9 1126.7 231.3 1127.0 231.0"/><path id="rb1" d="M705.0 337.7C705.8 337.9 708.2 338.5 709.9 338.9C711.5 339.3 713.1 339.7 714.7 340.1C716.3 340.6 717.9 341.0 719.5 341.6C721.1 342.1 722.6 342.6 724.2 343.2C725.8 343.8 727.3 344.4 728.9 345.0C730.4 345.7 731.9 346.3 733.5 346.9C735.0 347.6 736.5 348.3 738.1 348.9C739.6 349.6 741.1 350.3 742.6 351.0C744.1 351.7 745.7 352.3 747.2 353.1C748.7 353.8 750.2 354.5 751.7 355.2C753.1 356.0 754.7 356.8 755.9 357.8C757.2 358.8 758.4 360.0 759.3 361.2C760.2 362.3 760.7 363.7 761.1 364.6C761.5 365.5 761.6 366.2 761.7 366.5"/><path id="rb2" d="M761.7 366.5C761.2 367.1 759.6 369.1 758.5 370.3C757.3 371.4 756.0 372.5 754.7 373.4C753.3 374.4 751.9 375.1 750.4 375.9C748.9 376.6 747.3 377.3 745.8 377.9C744.3 378.6 742.7 379.2 741.2 379.8C739.6 380.4 738.1 381.0 736.5 381.6C735.0 382.2 733.4 382.8 731.9 383.5C730.3 384.1 728.8 384.7 727.2 385.3C725.7 385.9 724.1 386.5 722.6 387.1C721.0 387.8 719.5 388.4 717.9 389.0C716.4 389.6 714.8 390.2 713.3 390.8C711.7 391.5 710.2 392.1 708.7 392.8C707.2 393.5 705.7 394.2 704.1 394.9C702.6 395.5 701.1 396.1 699.5 396.6C697.9 397.1 696.1 397.4 694.6 397.6C693.1 397.8 691.6 397.9 690.5 397.9C689.4 398.0 688.4 398.0 688.0 398.0"/><path id="rb3" d="M685.0 445.2C685.8 445.4 688.3 445.8 689.9 446.1C691.6 446.4 693.2 446.7 694.8 446.9C696.5 447.1 698.2 447.2 699.8 447.2C701.5 447.2 703.1 447.0 704.7 446.7C706.4 446.4 708.0 445.9 709.5 445.4C711.1 444.9 712.6 444.3 714.2 443.6C715.7 443.0 717.2 442.2 718.7 441.5C720.2 440.8 721.7 440.1 723.2 439.4C724.7 438.7 726.3 438.0 727.8 437.2C729.3 436.5 730.8 435.8 732.3 435.1C733.8 434.4 735.3 433.7 736.8 432.9C738.3 432.2 739.8 431.4 741.2 430.7C742.7 429.9 744.2 429.2 745.7 428.4C747.2 427.6 748.6 426.8 750.1 426.0C751.5 425.2 753.0 424.4 754.4 423.5C755.9 422.7 757.3 421.8 758.7 420.9C760.1 420.1 761.5 419.2 762.9 418.3C764.4 417.4 765.8 416.5 767.3 415.8C768.7 415.0 770.2 414.2 771.8 413.8C773.3 413.3 774.9 413.0 776.5 413.0C778.1 413.0 779.8 413.3 781.3 413.8C782.8 414.3 784.3 415.1 785.5 416.1C786.7 417.1 787.7 418.5 788.5 419.8C789.2 421.2 789.7 422.9 790.0 424.5C790.4 426.1 790.6 427.7 790.8 429.4C791.0 431.0 791.0 432.7 791.1 434.4C791.2 436.0 791.2 437.7 791.3 439.4C791.4 441.0 791.4 442.7 791.5 444.4C791.6 446.0 791.7 447.7 791.8 449.4C791.9 451.0 792.0 452.7 792.1 454.3C792.2 456.0 792.3 457.7 792.4 459.3C792.5 461.0 792.6 462.7 792.7 464.3C792.7 466.0 792.8 467.7 792.7 469.3C792.6 470.9 792.4 472.6 792.0 474.2C791.7 475.8 791.0 477.3 790.4 478.9C789.8 480.4 789.0 481.9 788.2 483.3C787.4 484.8 786.6 486.3 785.8 487.7C785.0 489.2 784.1 490.6 783.2 492.0C782.3 493.4 781.4 494.8 780.4 496.1C779.4 497.4 778.3 498.7 777.3 500.0C776.2 501.2 775.0 502.5 773.9 503.7C772.8 504.9 771.6 506.1 770.5 507.3C769.3 508.5 768.2 509.7 767.0 510.9C765.8 512.1 764.7 513.3 763.5 514.5C762.4 515.7 761.2 516.9 760.1 518.1C758.9 519.3 757.8 520.5 756.6 521.7C755.5 522.9 754.3 524.2 753.2 525.4C752.0 526.6 750.9 527.8 749.8 529.0C748.6 530.3 747.5 531.5 746.4 532.7C745.3 534.0 744.1 535.2 743.0 536.4C741.9 537.7 740.8 538.9 739.7 540.2C738.7 541.5 737.6 542.7 736.6 544.1C735.6 545.4 734.7 546.8 733.8 548.2C733.0 549.6 732.2 551.2 731.5 552.6C730.9 554.0 730.3 555.5 729.9 556.5C729.5 557.6 729.2 558.6 729.0 559.0"/><path id="rb4" d="M792.4 470.0C793.7 470.0 796.8 470.1 800.0 470.0C803.2 469.9 809.8 469.3 811.7 469.2"/><path id="rb5" d="M855.8 464.0C858.0 463.7 866.1 463.0 869.3 462.0C872.5 461.0 874.0 458.7 875.0 458.0"/><path id="rb6" d="M873.0 464.0C873.0 463.2 872.8 460.7 872.9 459.0C873.0 457.4 873.1 455.7 873.5 454.1C873.8 452.5 874.4 450.9 875.0 449.4C875.6 447.9 876.3 446.4 877.1 444.9C877.8 443.4 878.6 441.9 879.4 440.5C880.2 439.0 881.1 437.6 882.0 436.2C882.9 434.8 883.9 433.4 884.9 432.1C885.9 430.8 886.9 429.5 888.0 428.2C889.1 426.9 890.1 425.7 891.2 424.4C892.3 423.1 893.4 421.9 894.6 420.7C895.7 419.4 896.8 418.2 898.0 417.0C899.1 415.8 900.2 414.6 901.4 413.4C902.6 412.2 903.8 411.0 905.0 409.9C906.2 408.8 907.5 407.7 908.8 406.6C910.1 405.6 911.4 404.5 912.7 403.6C914.1 402.6 915.5 401.7 916.9 400.8C918.3 399.9 919.7 399.1 921.2 398.4C922.7 397.6 924.2 396.9 925.8 396.3C927.3 395.7 928.9 395.1 930.5 394.7C932.1 394.2 933.7 393.8 935.3 393.4C936.9 393.0 938.6 392.7 940.2 392.5C941.9 392.2 943.5 392.0 945.2 391.7C946.8 391.5 948.5 391.4 950.1 391.2C951.8 391.0 953.4 390.8 955.1 390.6C956.8 390.4 958.4 390.2 960.1 390.0C961.7 389.8 963.4 389.5 965.0 389.3C966.7 389.2 968.3 389.0 970.0 388.9C971.7 388.8 973.3 388.7 975.0 388.7C976.6 388.8 978.3 388.9 980.0 389.0C981.6 389.2 983.3 389.5 984.9 389.8C986.5 390.0 988.2 390.4 989.8 390.8C991.4 391.2 993.0 391.6 994.6 392.1C996.2 392.6 997.8 393.1 999.3 393.7C1000.9 394.2 1002.4 394.9 1004.0 395.5C1005.5 396.2 1007.0 396.8 1008.6 397.5C1010.1 398.2 1011.6 399.0 1013.1 399.7C1014.6 400.4 1016.1 401.2 1017.5 401.9C1019.0 402.7 1020.5 403.4 1022.0 404.2C1023.5 404.9 1025.0 405.7 1026.5 406.4C1028.0 407.2 1029.5 407.9 1031.0 408.6C1032.5 409.4 1034.0 410.0 1035.5 410.8C1037.0 411.5 1038.5 412.2 1040.0 412.9C1041.5 413.7 1043.0 414.4 1044.4 415.2C1045.8 416.1 1047.3 416.9 1048.6 417.9C1050.0 418.9 1051.3 419.9 1052.4 421.1C1053.6 422.2 1054.7 423.5 1055.7 424.8C1056.6 426.2 1057.5 427.6 1058.3 429.1C1059.0 430.5 1059.7 432.1 1060.2 433.6C1060.7 435.2 1061.1 436.8 1061.2 438.4C1061.3 440.0 1061.1 441.7 1060.7 443.2C1060.3 444.8 1059.6 446.3 1058.8 447.7C1058.0 449.2 1057.0 450.6 1056.1 451.9C1055.1 453.3 1054.1 454.6 1053.1 455.9C1052.1 457.2 1051.0 458.5 1050.0 459.8C1048.9 461.1 1047.8 462.4 1046.7 463.6C1045.6 464.8 1044.4 466.1 1043.3 467.3C1042.1 468.5 1041.0 469.7 1039.8 470.8C1038.6 472.0 1037.4 473.1 1036.2 474.3C1034.9 475.4 1033.7 476.5 1032.4 477.5C1031.1 478.6 1029.8 479.6 1028.5 480.6C1027.1 481.6 1025.8 482.6 1024.4 483.6C1023.1 484.5 1021.7 485.5 1020.3 486.4C1018.9 487.3 1017.5 488.1 1016.0 489.0C1014.6 489.8 1013.1 490.5 1011.6 491.3C1010.1 492.0 1008.5 492.6 1007.0 493.3C1005.5 493.9 1003.9 494.5 1002.3 495.0C1000.8 495.6 999.2 496.1 997.6 496.6C996.0 497.0 994.4 497.5 992.8 497.9C991.1 498.3 989.5 498.7 987.9 499.0C986.3 499.4 984.6 499.7 983.0 500.0C981.3 500.3 979.7 500.6 978.1 500.8C976.4 501.0 974.7 501.3 973.1 501.4C971.4 501.6 969.8 501.7 968.1 501.8C966.4 501.9 964.8 501.9 963.1 501.9C961.5 501.9 959.8 501.8 958.1 501.7C956.5 501.7 954.8 501.5 953.1 501.4C951.5 501.2 949.8 501.0 948.2 500.8C946.5 500.6 944.9 500.4 943.2 500.2C941.6 499.9 939.9 499.6 938.3 499.3C936.7 499.0 935.0 498.6 933.4 498.2C931.8 497.7 930.2 497.2 928.7 496.7C927.1 496.2 925.5 495.5 924.0 494.9C922.5 494.3 921.0 493.6 919.4 492.9C917.9 492.2 916.4 491.4 914.9 490.7C913.4 490.0 911.9 489.3 910.4 488.6C908.9 487.8 907.4 487.1 905.9 486.5C904.4 485.8 902.8 485.1 901.3 484.4C899.8 483.7 898.3 483.0 896.7 482.4C895.2 481.7 893.7 481.1 892.1 480.5C890.6 479.8 889.0 479.3 887.5 478.6C886.0 478.0 884.4 477.4 882.9 476.7C881.4 476.0 879.8 475.3 878.6 474.3C877.3 473.4 876.0 472.2 875.2 471.0C874.4 469.8 873.9 468.3 873.5 467.2C873.2 466.0 873.1 464.5 873.0 464.0"/><path id="rb7" d="M1057.8 427.9C1059.7 428.1 1065.6 429.0 1069.3 428.9C1073.0 428.8 1078.2 427.3 1080.0 427.0"/><path id="rb8" d="M1122.1 420.2C1124.2 419.9 1130.7 418.4 1135.0 418.5C1139.3 418.6 1145.8 420.2 1148.0 420.6"/><path id="rb9" d="M777.1 558.0C777.6 557.4 779.1 555.4 780.2 554.1C781.3 552.9 782.5 551.7 783.7 550.5C784.9 549.4 786.2 548.4 787.5 547.3C788.8 546.2 790.1 545.2 791.3 544.1C792.6 543.0 793.8 541.9 795.0 540.7C796.2 539.6 797.3 538.3 798.4 537.1C799.5 535.8 800.6 534.5 801.5 533.2C802.5 531.9 803.4 530.5 804.2 529.0C805.1 527.6 805.7 526.1 806.5 524.6C807.3 523.2 808.1 521.7 809.0 520.3C809.8 518.9 810.7 517.5 811.6 516.1C812.6 514.7 813.5 513.3 814.4 511.9C815.4 510.5 816.3 509.2 817.3 507.8C818.3 506.5 819.4 505.2 820.5 504.0C821.6 502.8 822.8 501.6 824.1 500.5C825.3 499.5 826.7 498.6 828.2 497.9C829.7 497.2 831.2 496.6 832.8 496.2C834.4 495.8 836.1 495.5 837.7 495.3C839.4 495.1 841.0 495.0 842.7 495.0C844.4 495.0 846.0 495.1 847.7 495.3C849.3 495.4 851.0 495.7 852.6 496.0C854.3 496.3 855.9 496.6 857.5 497.0C859.1 497.4 860.7 497.8 862.4 498.2C864.0 498.6 865.6 499.1 867.2 499.6C868.8 500.0 870.4 500.5 871.9 501.1C873.5 501.6 875.1 502.1 876.7 502.7C878.2 503.2 879.8 503.8 881.3 504.5C882.8 505.1 884.4 505.8 885.8 506.7C887.2 507.5 888.6 508.5 889.8 509.5C891.1 510.6 892.3 511.8 893.4 513.0C894.6 514.1 895.7 515.4 896.9 516.6C898.0 517.8 899.2 518.9 900.4 520.1C901.6 521.3 902.8 522.4 904.0 523.6C905.1 524.8 906.3 526.0 907.4 527.2C908.6 528.4 909.7 529.7 910.7 531.0C911.8 532.2 912.9 533.5 913.9 534.8C914.9 536.2 915.9 537.5 916.8 538.9C917.7 540.3 918.5 541.7 919.2 543.2C919.9 544.7 920.4 546.3 920.9 547.9C921.3 549.5 921.6 551.1 921.9 552.8C922.3 554.4 922.5 556.0 922.9 557.7C923.2 559.3 923.5 560.9 923.9 562.6C924.3 564.2 924.7 565.8 925.1 567.4C925.4 569.0 925.8 570.7 926.3 572.3C926.7 573.9 927.1 575.5 927.5 577.1C927.9 578.7 928.3 580.4 928.8 582.0C929.2 583.6 929.6 585.2 930.1 586.8C930.6 588.4 931.0 590.0 931.5 591.6C932.0 593.2 932.5 594.8 933.0 596.4C933.5 597.9 934.0 599.5 934.3 601.2C934.7 602.8 935.1 604.4 935.4 606.0C935.7 607.7 935.9 610.2 936.0 611.0"/><path id="rb10" d="M971.4 605.0C971.1 604.2 970.1 601.9 969.5 600.4C968.9 598.8 968.3 597.3 967.9 595.7C967.4 594.1 967.0 592.5 966.6 590.8C966.3 589.2 965.9 587.6 965.6 585.9C965.3 584.3 965.0 582.7 964.7 581.0C964.3 579.4 964.0 577.8 963.7 576.1C963.4 574.5 963.0 572.9 962.6 571.2C962.3 569.6 961.9 568.0 961.6 566.4C961.2 564.7 960.9 563.1 960.6 561.4C960.4 559.8 960.1 558.1 960.1 556.5C960.0 554.9 960.0 553.2 960.3 551.6C960.5 549.9 960.9 548.3 961.5 546.8C962.1 545.3 962.9 543.8 963.8 542.5C964.8 541.3 966.1 540.1 967.4 539.2C968.7 538.3 970.2 537.6 971.8 537.0C973.3 536.5 974.9 536.1 976.5 535.7C978.2 535.4 979.8 535.1 981.5 534.8C983.1 534.6 984.8 534.3 986.4 534.1C988.1 533.9 989.7 533.7 991.4 533.5C993.0 533.3 994.7 533.2 996.4 533.0C998.0 532.9 999.7 532.8 1001.3 532.8C1003.0 532.7 1004.7 532.7 1006.3 532.8C1008.0 533.0 1009.6 533.1 1011.2 533.5C1012.9 533.9 1014.5 534.4 1015.9 535.0C1017.4 535.7 1018.9 536.5 1020.2 537.5C1021.5 538.5 1022.8 539.6 1023.8 540.8C1024.9 542.1 1025.8 543.5 1026.6 544.9C1027.3 546.4 1027.8 548.0 1028.3 549.5C1028.8 551.1 1029.1 552.8 1029.5 554.4C1029.9 556.0 1030.2 557.6 1030.6 559.2C1031.0 560.9 1031.5 562.5 1032.0 564.1C1032.4 565.7 1032.9 567.2 1033.4 568.8C1033.9 570.4 1034.4 572.0 1034.9 573.6C1035.4 575.2 1035.9 576.8 1036.3 578.4C1036.7 580.0 1037.0 581.7 1037.4 583.3C1037.7 584.9 1038.0 586.8 1038.2 588.2C1038.4 589.7 1038.6 591.2 1038.7 592.1C1038.9 593.1 1039.0 593.7 1039.0 594.0"/><path id="rb11" d="M1192.6 489.0C1192.3 488.3 1191.5 486.1 1190.6 484.9C1189.6 483.7 1188.4 482.7 1187.1 481.8C1185.8 480.9 1184.2 480.1 1182.7 479.3C1181.3 478.5 1179.8 477.7 1178.3 477.0C1176.8 476.2 1175.4 475.4 1173.9 474.7C1172.4 473.9 1170.9 473.2 1169.4 472.4C1167.9 471.7 1166.4 470.9 1164.9 470.2C1163.4 469.5 1161.9 468.8 1160.4 468.0C1158.9 467.3 1157.5 466.5 1156.0 465.7C1154.5 464.9 1153.1 464.0 1151.7 463.2C1150.3 462.3 1148.9 461.3 1147.5 460.4C1146.2 459.5 1144.8 458.5 1143.4 457.6C1142.0 456.7 1140.6 455.8 1139.1 455.0C1137.7 454.3 1136.1 453.6 1134.5 453.2C1133.0 452.7 1131.3 452.4 1129.7 452.2C1128.1 452.0 1126.4 452.0 1124.7 452.0C1123.1 452.0 1121.4 452.2 1119.8 452.4C1118.1 452.5 1116.4 452.8 1114.8 453.1C1113.2 453.5 1111.6 453.8 1110.0 454.3C1108.4 454.8 1106.8 455.4 1105.3 456.1C1103.8 456.7 1102.3 457.5 1100.9 458.3C1099.4 459.1 1098.0 460.0 1096.7 461.0C1095.3 462.0 1094.0 463.0 1092.8 464.1C1091.6 465.2 1090.4 466.4 1089.2 467.6C1088.0 468.8 1086.9 470.0 1085.8 471.2C1084.7 472.5 1083.6 473.7 1082.5 475.0C1081.4 476.3 1080.4 477.6 1079.3 478.9C1078.3 480.1 1077.2 481.4 1076.1 482.7C1075.0 484.0 1073.9 485.2 1072.8 486.5C1071.8 487.8 1070.7 489.0 1069.7 490.3C1068.6 491.6 1067.6 493.0 1066.7 494.3C1065.7 495.7 1064.8 497.1 1063.9 498.5C1063.1 499.9 1062.2 501.4 1061.5 502.9C1060.8 504.4 1060.1 505.9 1059.5 507.4C1059.0 509.0 1058.5 510.6 1058.1 512.2C1057.7 513.8 1057.3 515.5 1057.2 517.1C1057.0 518.7 1057.0 520.4 1057.1 522.0C1057.2 523.7 1057.6 525.3 1058.0 526.9C1058.4 528.5 1059.0 530.1 1059.5 531.6C1060.1 533.2 1060.6 534.8 1061.1 536.4C1061.6 538.0 1062.1 539.6 1062.5 541.2C1062.9 542.8 1063.3 544.4 1063.7 546.0C1064.1 547.6 1064.5 549.3 1064.9 550.9C1065.3 552.5 1065.7 554.1 1066.1 555.7C1066.6 557.3 1067.0 559.0 1067.4 560.6C1067.9 562.2 1068.3 563.8 1068.8 565.4C1069.3 567.0 1069.8 568.6 1070.3 570.2C1070.7 571.7 1071.3 573.3 1071.7 574.9C1072.2 576.5 1072.7 578.1 1073.1 579.7C1073.6 581.3 1074.0 583.1 1074.3 584.6C1074.7 586.0 1075.0 587.5 1075.2 588.4C1075.4 589.3 1075.4 589.7 1075.5 590.0"/><path id="rb12" d="M1227.0 360.5C1226.2 360.8 1224.0 362.0 1222.5 362.5C1220.9 363.1 1219.3 363.6 1217.7 363.8C1216.1 364.0 1214.4 364.0 1212.8 364.0C1211.1 363.9 1209.5 363.7 1207.8 363.4C1206.2 363.2 1204.5 362.9 1202.9 362.6C1201.3 362.3 1199.6 362.0 1198.0 361.7C1196.3 361.5 1194.7 361.2 1193.0 360.9C1191.4 360.6 1189.7 360.4 1188.1 360.2C1186.4 359.9 1184.8 359.7 1183.1 359.5C1181.5 359.3 1179.8 359.1 1178.2 358.9C1176.5 358.7 1174.9 358.4 1173.2 358.2C1171.6 358.0 1169.9 357.8 1168.3 357.6C1166.6 357.4 1165.0 357.1 1163.3 356.9C1161.7 356.7 1160.0 356.4 1158.4 356.2C1156.7 355.9 1155.1 355.6 1153.4 355.3C1151.8 355.1 1150.2 354.8 1148.5 354.5C1146.9 354.2 1145.2 353.9 1143.6 353.7C1141.9 353.4 1140.3 353.2 1138.6 353.0C1137.0 352.8 1135.3 352.6 1133.7 352.6C1132.0 352.7 1130.3 352.8 1128.8 353.3C1127.3 353.7 1125.8 354.5 1124.7 355.5C1123.5 356.5 1122.5 357.9 1122.0 359.3C1121.6 360.7 1121.5 362.4 1121.8 363.9C1122.0 365.3 1122.8 366.9 1123.6 368.3C1124.4 369.7 1125.6 370.9 1126.6 372.2C1127.6 373.6 1128.7 374.8 1129.5 376.3C1130.3 377.7 1130.9 379.2 1131.5 380.8C1132.0 382.3 1132.3 384.0 1132.6 385.6C1133.0 387.2 1133.3 388.9 1133.6 390.5C1134.0 392.1 1134.3 393.7 1134.8 395.3C1135.3 396.9 1135.8 398.5 1136.4 400.1C1137.0 401.6 1137.7 403.1 1138.4 404.7C1139.0 406.2 1139.8 407.7 1140.6 409.1C1141.4 410.6 1142.2 412.0 1143.1 413.4C1144.1 414.7 1145.1 416.0 1146.3 417.2C1147.5 418.3 1148.8 419.3 1150.1 420.3C1151.5 421.3 1152.9 422.2 1154.3 423.0C1155.7 423.9 1157.2 424.7 1158.6 425.6C1160.1 426.4 1161.5 427.2 1163.0 428.1C1164.4 428.9 1165.9 429.7 1167.3 430.5C1168.8 431.4 1170.2 432.2 1171.7 433.0C1173.1 433.8 1174.5 434.7 1176.0 435.5C1177.4 436.4 1178.9 437.2 1180.3 438.1C1181.7 438.9 1183.2 439.8 1184.6 440.6C1186.0 441.5 1187.5 442.3 1188.9 443.2C1190.3 444.0 1191.8 444.8 1193.2 445.7C1194.7 446.5 1196.1 447.3 1197.6 448.1C1199.0 449.0 1200.5 449.8 1201.9 450.6C1203.4 451.4 1204.9 452.2 1206.3 453.0C1207.8 453.8 1209.2 454.6 1210.7 455.3C1212.2 456.1 1213.7 456.9 1215.1 457.7C1216.6 458.5 1218.1 459.2 1219.6 460.0C1221.1 460.7 1222.6 461.4 1224.1 462.2C1225.6 462.9 1227.1 463.6 1228.6 464.4C1230.0 465.2 1231.5 466.0 1232.9 466.9C1234.2 467.8 1235.6 468.9 1236.8 469.9C1238.1 470.9 1239.2 471.9 1240.1 472.8C1241.1 473.6 1242.1 474.6 1242.5 475.0"/><path id="rb13" d="M1250.0 400.0C1251.3 399.5 1255.2 397.8 1258.0 397.0C1260.8 396.2 1265.5 395.8 1267.0 395.5"/><path id="rb14" d="M666.0 497.0C667.7 496.6 672.8 495.2 676.0 494.5C679.2 493.8 683.5 493.2 685.0 493.0"/><path id="rb15" d="M1152.2 262.0C1151.7 262.7 1150.4 264.8 1149.4 266.2C1148.5 267.6 1147.6 268.9 1146.6 270.3C1145.7 271.7 1144.7 273.0 1143.7 274.4C1142.7 275.7 1141.7 277.0 1140.7 278.3C1139.6 279.6 1138.6 280.9 1137.5 282.2C1136.4 283.5 1135.3 284.7 1134.2 285.9C1133.1 287.2 1132.0 288.4 1130.8 289.6C1129.6 290.8 1128.4 292.0 1127.3 293.1C1126.1 294.3 1124.7 295.5 1123.8 296.7C1122.9 297.9 1121.9 299.3 1121.7 300.6C1121.5 301.9 1121.9 303.4 1122.6 304.6C1123.3 305.9 1124.5 307.2 1125.7 308.3C1126.9 309.3 1128.3 310.2 1129.8 310.9C1131.3 311.7 1132.9 312.2 1134.4 312.6C1136.0 313.0 1137.7 313.2 1139.4 313.3C1141.0 313.5 1142.7 313.6 1144.3 313.7C1146.0 313.8 1147.7 313.8 1149.3 313.9C1151.0 313.9 1152.7 314.0 1154.3 314.0C1156.0 314.1 1157.7 314.2 1159.3 314.3C1161.0 314.4 1162.6 314.5 1164.3 314.7C1166.0 314.9 1167.6 315.1 1169.3 315.3C1170.9 315.5 1172.6 315.7 1174.2 315.9C1175.9 316.2 1177.5 316.4 1179.2 316.6C1180.8 316.8 1182.5 317.0 1184.2 317.1C1185.8 317.2 1187.5 317.2 1189.1 317.1C1190.8 317.0 1192.4 316.7 1194.0 316.3C1195.5 315.8 1197.2 315.1 1198.5 314.4C1199.9 313.7 1201.1 312.9 1202.0 312.3C1202.9 311.7 1203.7 311.2 1204.0 311.0"/></defs>
<g fill="none" stroke-linejoin="round" stroke-linecap="round" stroke="#1ff05a" stroke-width="6.400"><use href="#rb0"/><use href="#rb1"/><use href="#rb2"/><use href="#rb3"/><use href="#rb4"/><use href="#rb5"/><use href="#rb6"/><use href="#rb7"/><use href="#rb8"/><use href="#rb9"/><use href="#rb10"/><use href="#rb11"/><use href="#rb12"/><use href="#rb13"/><use href="#rb14"/><use href="#rb15"/></g>
<g fill="none" stroke-linejoin="round" stroke="#3fb98c" stroke-width="2.800"><use href="#rb0"/><use href="#rb1"/><use href="#rb2"/><use href="#rb3"/><use href="#rb4"/><use href="#rb5"/><use href="#rb6"/><use href="#rb7"/><use href="#rb8"/><use href="#rb9"/><use href="#rb10"/><use href="#rb11"/><use href="#rb12"/><use href="#rb13"/><use href="#rb14"/><use href="#rb15"/></g>
<g fill="none" stroke-linejoin="round" stroke="#baf6ce" stroke-width="1.300"><use href="#rb0"/><use href="#rb1"/><use href="#rb2"/><use href="#rb3"/><use href="#rb4"/><use href="#rb5"/><use href="#rb6"/><use href="#rb7"/><use href="#rb8"/><use href="#rb9"/><use href="#rb10"/><use href="#rb11"/><use href="#rb12"/><use href="#rb13"/><use href="#rb14"/><use href="#rb15"/></g>
<path d="M929.2 274.0C930.2 279.3 934.0 300.4 934.9 305.7" fill="none" stroke="#1ff05a" stroke-width="1.300"/>
<path d="M948.4 366.5C949.7 370.4 954.7 386.1 956.0 390.0" fill="none" stroke="#1ff05a" stroke-width="1.300"/>
<path d="M990.0 527.0C990.3 530.0 991.7 542.0 992.0 545.0" fill="none" stroke="#1ff05a" stroke-width="1.300"/>
<path d="M1005.0 597.0C1006.1 601.8 1009.8 617.8 1011.7 626.0C1013.6 634.2 1015.7 642.7 1016.5 646.0" fill="none" stroke="#1ff05a" stroke-width="1.300"/>
<path d="M903.0 152.0C903.7 155.8 905.8 168.7 907.0 175.0C908.2 181.3 909.5 187.5 910.0 190.0" fill="none" stroke="#1ff05a" stroke-width="1.300"/>
<path d="M696.7 636.8C696.9 635.2 697.3 633.5 697.9 631.7C698.5 630.0 699.3 628.0 700.2 626.2C701.1 624.5 702.2 622.8 703.3 621.2C704.5 619.5 705.7 618.0 707.0 616.5C708.3 614.9 709.7 613.5 711.1 612.1C712.6 610.7 714.1 609.4 715.6 608.2C717.2 606.9 718.8 605.8 720.5 604.7C722.1 603.6 723.9 602.6 725.6 601.6C727.4 600.6 729.1 599.7 730.9 598.9C732.8 598.0 734.6 597.2 736.4 596.4C738.3 595.6 740.1 594.9 742.0 594.2C743.9 593.5 745.8 592.8 747.7 592.3C749.6 591.7 751.5 591.1 753.4 590.6C755.4 590.1 757.3 589.7 759.3 589.3C761.3 589.0 763.2 588.6 765.2 588.4C767.2 588.1 769.2 587.9 771.2 587.8C773.2 587.7 775.2 587.7 777.2 587.7C779.2 587.7 781.2 587.8 783.1 587.9C785.1 588.1 787.1 588.3 789.1 588.6C791.1 588.8 793.1 589.1 795.0 589.5C797.0 589.9 798.9 590.4 800.8 591.0C802.7 591.6 804.6 592.2 806.4 593.1C808.1 594.0 809.8 595.0 811.3 596.3C812.8 597.6 814.0 599.1 815.1 600.7C816.3 602.3 817.1 604.2 818.0 606.0C818.9 607.7 819.6 609.6 820.3 611.5C821.0 613.3 821.7 615.2 822.3 617.1C822.9 619.0 823.5 621.0 824.0 622.9C824.5 624.8 825.0 626.8 825.4 628.7C825.8 630.7 826.2 632.6 826.5 634.6C826.8 636.6 827.0 638.6 827.0 640.6C827.0 642.5 826.9 644.6 826.5 646.4C826.0 648.3 825.4 650.2 824.5 651.9C823.6 653.6 822.4 655.2 821.0 656.7C819.7 658.1 818.1 659.3 816.5 660.5C814.9 661.7 813.2 662.7 811.4 663.6C809.7 664.6 807.9 665.5 806.0 666.3C804.2 667.1 802.3 667.8 800.4 668.4C798.5 669.0 796.6 669.5 794.7 670.0C792.7 670.4 790.8 670.8 788.8 671.3C786.9 671.7 784.9 672.1 782.9 672.5C781.0 673.0 779.1 673.5 777.2 674.1C775.3 674.7 773.4 675.4 771.5 676.1C769.7 676.9 767.8 677.7 766.0 678.4C764.1 679.2 762.3 680.0 760.5 680.7C758.6 681.5 756.7 682.1 754.8 682.7C752.9 683.2 750.9 683.7 749.0 684.0C747.0 684.3 745.0 684.5 743.0 684.6C741.0 684.6 739.0 684.6 737.1 684.4C735.1 684.2 733.1 683.9 731.2 683.4C729.2 682.9 727.3 682.3 725.5 681.6C723.6 680.9 721.8 680.0 720.1 679.1C718.3 678.1 716.6 677.1 714.9 676.0C713.3 674.9 711.6 673.8 710.1 672.5C708.6 671.2 707.1 669.9 705.7 668.4C704.4 666.9 703.2 665.3 702.2 663.7C701.2 662.0 700.4 660.1 699.7 658.3C699.0 656.4 698.4 654.5 698.0 652.6C697.5 650.6 697.2 648.5 696.9 646.7C696.7 644.8 696.5 643.0 696.4 641.4C696.4 639.8 696.4 638.5 696.7 636.8Z" fill="none" stroke="#1ff05a" stroke-width="6.0" stroke-linejoin="round" stroke-linecap="round"/>
<path d="M696.7 636.8C696.9 635.2 697.3 633.5 697.9 631.7C698.5 630.0 699.3 628.0 700.2 626.2C701.1 624.5 702.2 622.8 703.3 621.2C704.5 619.5 705.7 618.0 707.0 616.5C708.3 614.9 709.7 613.5 711.1 612.1C712.6 610.7 714.1 609.4 715.6 608.2C717.2 606.9 718.8 605.8 720.5 604.7C722.1 603.6 723.9 602.6 725.6 601.6C727.4 600.6 729.1 599.7 730.9 598.9C732.8 598.0 734.6 597.2 736.4 596.4C738.3 595.6 740.1 594.9 742.0 594.2C743.9 593.5 745.8 592.8 747.7 592.3C749.6 591.7 751.5 591.1 753.4 590.6C755.4 590.1 757.3 589.7 759.3 589.3C761.3 589.0 763.2 588.6 765.2 588.4C767.2 588.1 769.2 587.9 771.2 587.8C773.2 587.7 775.2 587.7 777.2 587.7C779.2 587.7 781.2 587.8 783.1 587.9C785.1 588.1 787.1 588.3 789.1 588.6C791.1 588.8 793.1 589.1 795.0 589.5C797.0 589.9 798.9 590.4 800.8 591.0C802.7 591.6 804.6 592.2 806.4 593.1C808.1 594.0 809.8 595.0 811.3 596.3C812.8 597.6 814.0 599.1 815.1 600.7C816.3 602.3 817.1 604.2 818.0 606.0C818.9 607.7 819.6 609.6 820.3 611.5C821.0 613.3 821.7 615.2 822.3 617.1C822.9 619.0 823.5 621.0 824.0 622.9C824.5 624.8 825.0 626.8 825.4 628.7C825.8 630.7 826.2 632.6 826.5 634.6C826.8 636.6 827.0 638.6 827.0 640.6C827.0 642.5 826.9 644.6 826.5 646.4C826.0 648.3 825.4 650.2 824.5 651.9C823.6 653.6 822.4 655.2 821.0 656.7C819.7 658.1 818.1 659.3 816.5 660.5C814.9 661.7 813.2 662.7 811.4 663.6C809.7 664.6 807.9 665.5 806.0 666.3C804.2 667.1 802.3 667.8 800.4 668.4C798.5 669.0 796.6 669.5 794.7 670.0C792.7 670.4 790.8 670.8 788.8 671.3C786.9 671.7 784.9 672.1 782.9 672.5C781.0 673.0 779.1 673.5 777.2 674.1C775.3 674.7 773.4 675.4 771.5 676.1C769.7 676.9 767.8 677.7 766.0 678.4C764.1 679.2 762.3 680.0 760.5 680.7C758.6 681.5 756.7 682.1 754.8 682.7C752.9 683.2 750.9 683.7 749.0 684.0C747.0 684.3 745.0 684.5 743.0 684.6C741.0 684.6 739.0 684.6 737.1 684.4C735.1 684.2 733.1 683.9 731.2 683.4C729.2 682.9 727.3 682.3 725.5 681.6C723.6 680.9 721.8 680.0 720.1 679.1C718.3 678.1 716.6 677.1 714.9 676.0C713.3 674.9 711.6 673.8 710.1 672.5C708.6 671.2 707.1 669.9 705.7 668.4C704.4 666.9 703.2 665.3 702.2 663.7C701.2 662.0 700.4 660.1 699.7 658.3C699.0 656.4 698.4 654.5 698.0 652.6C697.5 650.6 697.2 648.5 696.9 646.7C696.7 644.8 696.5 643.0 696.4 641.4C696.4 639.8 696.4 638.5 696.7 636.8Z" fill="none" stroke="#5fcfa4" stroke-width="2.2" stroke-linejoin="round"/>
<path d="M1181.1 548.1C1181.1 546.7 1181.1 545.2 1181.4 543.4C1181.6 541.7 1181.9 539.5 1182.4 537.6C1183.0 535.7 1183.6 533.7 1184.5 532.0C1185.4 530.3 1186.4 528.6 1187.7 527.1C1189.0 525.6 1190.5 524.4 1192.1 523.2C1193.7 522.1 1195.6 521.2 1197.4 520.4C1199.2 519.7 1201.1 519.1 1203.0 518.5C1204.9 517.9 1206.9 517.5 1208.8 517.1C1210.8 516.7 1212.8 516.3 1214.7 516.0C1216.7 515.6 1218.7 515.3 1220.6 515.0C1222.6 514.7 1224.6 514.4 1226.6 514.1C1228.6 513.9 1230.6 513.6 1232.5 513.4C1234.5 513.2 1236.5 513.1 1238.5 513.0C1240.5 512.8 1242.5 512.8 1244.5 512.7C1246.5 512.7 1248.5 512.8 1250.5 512.9C1252.5 513.0 1254.5 513.1 1256.5 513.3C1258.5 513.5 1260.4 513.8 1262.4 514.2C1264.4 514.6 1266.3 515.0 1268.2 515.6C1270.1 516.1 1272.0 516.8 1273.9 517.5C1275.8 518.2 1277.6 518.9 1279.4 519.8C1281.2 520.6 1283.0 521.5 1284.8 522.5C1286.5 523.5 1288.2 524.6 1289.9 525.7C1291.5 526.8 1293.1 528.0 1294.7 529.2C1296.3 530.4 1297.9 531.6 1299.4 532.9C1300.9 534.2 1302.4 535.6 1303.8 537.0C1305.3 538.4 1306.7 539.8 1308.0 541.3C1309.3 542.7 1310.6 544.3 1311.8 545.9C1313.0 547.5 1314.1 549.2 1314.9 550.9C1315.8 552.7 1316.6 554.6 1317.1 556.5C1317.7 558.3 1318.0 560.3 1318.1 562.3C1318.3 564.2 1318.1 566.2 1317.8 568.2C1317.4 570.1 1316.8 572.0 1316.1 573.8C1315.3 575.7 1314.4 577.4 1313.3 579.1C1312.3 580.8 1311.1 582.4 1309.8 583.9C1308.5 585.4 1307.1 586.9 1305.6 588.2C1304.1 589.5 1302.5 590.7 1300.9 591.7C1299.2 592.8 1297.4 593.8 1295.6 594.6C1293.8 595.4 1291.9 596.1 1290.0 596.6C1288.1 597.1 1286.1 597.5 1284.2 597.9C1282.2 598.2 1280.2 598.4 1278.2 598.6C1276.2 598.8 1274.2 598.9 1272.2 599.0C1270.3 599.1 1268.3 599.2 1266.3 599.2C1264.3 599.3 1262.3 599.3 1260.3 599.3C1258.3 599.4 1256.3 599.4 1254.3 599.4C1252.3 599.4 1250.3 599.4 1248.3 599.4C1246.3 599.4 1244.3 599.3 1242.3 599.3C1240.3 599.3 1238.3 599.2 1236.3 599.1C1234.3 599.1 1232.3 599.0 1230.3 598.9C1228.3 598.7 1226.3 598.6 1224.3 598.4C1222.3 598.3 1220.3 598.1 1218.3 597.8C1216.3 597.5 1214.4 597.2 1212.5 596.7C1210.6 596.2 1208.7 595.5 1206.9 594.7C1205.1 593.8 1203.4 592.8 1201.7 591.7C1200.1 590.6 1198.5 589.4 1197.0 588.0C1195.6 586.7 1194.2 585.2 1193.0 583.7C1191.8 582.1 1190.7 580.4 1189.8 578.7C1188.9 576.9 1188.1 575.0 1187.4 573.2C1186.7 571.3 1186.1 569.4 1185.4 567.5C1184.8 565.6 1184.2 563.7 1183.6 561.8C1183.1 559.9 1182.6 557.7 1182.2 556.0C1181.8 554.3 1181.5 552.7 1181.3 551.4C1181.1 550.1 1181.0 549.4 1181.1 548.1Z" fill="none" stroke="#1ff05a" stroke-width="6.0" stroke-linejoin="round" stroke-linecap="round"/>
<path d="M1181.1 548.1C1181.1 546.7 1181.1 545.2 1181.4 543.4C1181.6 541.7 1181.9 539.5 1182.4 537.6C1183.0 535.7 1183.6 533.7 1184.5 532.0C1185.4 530.3 1186.4 528.6 1187.7 527.1C1189.0 525.6 1190.5 524.4 1192.1 523.2C1193.7 522.1 1195.6 521.2 1197.4 520.4C1199.2 519.7 1201.1 519.1 1203.0 518.5C1204.9 517.9 1206.9 517.5 1208.8 517.1C1210.8 516.7 1212.8 516.3 1214.7 516.0C1216.7 515.6 1218.7 515.3 1220.6 515.0C1222.6 514.7 1224.6 514.4 1226.6 514.1C1228.6 513.9 1230.6 513.6 1232.5 513.4C1234.5 513.2 1236.5 513.1 1238.5 513.0C1240.5 512.8 1242.5 512.8 1244.5 512.7C1246.5 512.7 1248.5 512.8 1250.5 512.9C1252.5 513.0 1254.5 513.1 1256.5 513.3C1258.5 513.5 1260.4 513.8 1262.4 514.2C1264.4 514.6 1266.3 515.0 1268.2 515.6C1270.1 516.1 1272.0 516.8 1273.9 517.5C1275.8 518.2 1277.6 518.9 1279.4 519.8C1281.2 520.6 1283.0 521.5 1284.8 522.5C1286.5 523.5 1288.2 524.6 1289.9 525.7C1291.5 526.8 1293.1 528.0 1294.7 529.2C1296.3 530.4 1297.9 531.6 1299.4 532.9C1300.9 534.2 1302.4 535.6 1303.8 537.0C1305.3 538.4 1306.7 539.8 1308.0 541.3C1309.3 542.7 1310.6 544.3 1311.8 545.9C1313.0 547.5 1314.1 549.2 1314.9 550.9C1315.8 552.7 1316.6 554.6 1317.1 556.5C1317.7 558.3 1318.0 560.3 1318.1 562.3C1318.3 564.2 1318.1 566.2 1317.8 568.2C1317.4 570.1 1316.8 572.0 1316.1 573.8C1315.3 575.7 1314.4 577.4 1313.3 579.1C1312.3 580.8 1311.1 582.4 1309.8 583.9C1308.5 585.4 1307.1 586.9 1305.6 588.2C1304.1 589.5 1302.5 590.7 1300.9 591.7C1299.2 592.8 1297.4 593.8 1295.6 594.6C1293.8 595.4 1291.9 596.1 1290.0 596.6C1288.1 597.1 1286.1 597.5 1284.2 597.9C1282.2 598.2 1280.2 598.4 1278.2 598.6C1276.2 598.8 1274.2 598.9 1272.2 599.0C1270.3 599.1 1268.3 599.2 1266.3 599.2C1264.3 599.3 1262.3 599.3 1260.3 599.3C1258.3 599.4 1256.3 599.4 1254.3 599.4C1252.3 599.4 1250.3 599.4 1248.3 599.4C1246.3 599.4 1244.3 599.3 1242.3 599.3C1240.3 599.3 1238.3 599.2 1236.3 599.1C1234.3 599.1 1232.3 599.0 1230.3 598.9C1228.3 598.7 1226.3 598.6 1224.3 598.4C1222.3 598.3 1220.3 598.1 1218.3 597.8C1216.3 597.5 1214.4 597.2 1212.5 596.7C1210.6 596.2 1208.7 595.5 1206.9 594.7C1205.1 593.8 1203.4 592.8 1201.7 591.7C1200.1 590.6 1198.5 589.4 1197.0 588.0C1195.6 586.7 1194.2 585.2 1193.0 583.7C1191.8 582.1 1190.7 580.4 1189.8 578.7C1188.9 576.9 1188.1 575.0 1187.4 573.2C1186.7 571.3 1186.1 569.4 1185.4 567.5C1184.8 565.6 1184.2 563.7 1183.6 561.8C1183.1 559.9 1182.6 557.7 1182.2 556.0C1181.8 554.3 1181.5 552.7 1181.3 551.4C1181.1 550.1 1181.0 549.4 1181.1 548.1Z" fill="none" stroke="#5fcfa4" stroke-width="2.2" stroke-linejoin="round"/>
<path d="M732.9 614.5C732.5 608.7 740.0 607.7 742.5 606.8C745.0 605.9 755.2 605.4 757.9 605.8C760.6 606.2 767.3 605.7 769.4 610.6C771.5 615.5 778.4 649.4 779.0 654.8C779.6 660.2 777.7 663.0 775.2 664.4C772.7 665.8 756.9 669.2 754.0 669.2C751.1 669.2 748.5 669.9 746.4 664.4C744.3 658.9 733.3 620.3 732.9 614.5Z" fill="none" stroke="#1ff05a" stroke-width="4.6" stroke-linejoin="round" stroke-linecap="round"/>
<path d="M732.9 614.5C732.5 608.7 740.0 607.7 742.5 606.8C745.0 605.9 755.2 605.4 757.9 605.8C760.6 606.2 767.3 605.7 769.4 610.6C771.5 615.5 778.4 649.4 779.0 654.8C779.6 660.2 777.7 663.0 775.2 664.4C772.7 665.8 756.9 669.2 754.0 669.2C751.1 669.2 748.5 669.9 746.4 664.4C744.3 658.9 733.3 620.3 732.9 614.5Z" fill="none" stroke="#aef3c8" stroke-width="2.0" stroke-linejoin="round"/>
<path d="M1229.1 536.0C1228.7 530.4 1236.0 528.5 1238.7 527.4C1241.4 526.2 1253.3 524.4 1256.0 524.5C1258.7 524.6 1263.5 523.3 1265.6 528.3C1267.7 533.3 1276.1 568.8 1277.1 574.4C1278.1 580.0 1277.9 582.7 1275.2 584.0C1272.5 585.3 1253.5 587.9 1250.2 587.8C1246.9 587.7 1244.6 588.2 1242.5 583.0C1240.4 577.8 1229.5 541.6 1229.1 536.0Z" fill="none" stroke="#1ff05a" stroke-width="4.6" stroke-linejoin="round" stroke-linecap="round"/>
<path d="M1229.1 536.0C1228.7 530.4 1236.0 528.5 1238.7 527.4C1241.4 526.2 1253.3 524.4 1256.0 524.5C1258.7 524.6 1263.5 523.3 1265.6 528.3C1267.7 533.3 1276.1 568.8 1277.1 574.4C1278.1 580.0 1277.9 582.7 1275.2 584.0C1272.5 585.3 1253.5 587.9 1250.2 587.8C1246.9 587.7 1244.6 588.2 1242.5 583.0C1240.4 577.8 1229.5 541.6 1229.1 536.0Z" fill="none" stroke="#aef3c8" stroke-width="2.0" stroke-linejoin="round"/>
</g>
<path d="M885.0 222.5L887.3 218.3L908.0 216.4L907.0 207.8L920.5 205.8L926.3 229.8L912.8 231.8L910.0 224.0L888.8 227.5Z" fill="#426386"/>
<use href="#sp" fill="none" stroke="#e0465a" stroke-width="1.700" stroke-linejoin="round"/>
<defs><path id="dts" d="M797.2 181.8h0M838.5 191.4h0M822.2 203.9h0M841.4 203.9h0M843.0 206.0h0M833.7 208.7h0M809.7 217.4h0M811.0 221.0h0M817.4 227.0h0M833.7 224.0h0M835.6 236.6h0M818.4 240.4h0M853.9 260.6h0M841.4 266.3h0M843.5 269.0h0M857.7 274.0h0M857.7 284.6h0M823.2 276.0h0M826.0 284.6h0M835.6 289.4h0M838.0 287.0h0M847.2 296.0h0M858.7 302.8h0M857.7 316.2h0M802.0 291.3h0M810.7 295.0h0M814.0 296.0h0M800.0 316.2h0M820.3 306.6h0M783.8 324.9h0M732.9 268.2h0M735.0 271.0h0M902.3 148.2h0M905.2 161.7h0M906.0 165.0h0M909.0 179.9h0M911.9 190.5h0M1014.6 147.3h0M980.0 168.4h0M983.0 180.9h0M985.0 184.0h0M992.5 183.8h0M999.2 175.1h0M1016.5 182.8h0M1017.0 186.0h0M998.3 197.2h0M1011.7 196.2h0M1001.2 208.7h0M1016.5 208.7h0M997.3 236.6h0M1009.8 239.4h0M1026.1 242.3h0M1031.9 237.5h0M998.3 251.0h0M999.2 262.5h0M907.0 207.8h0M920.5 205.8h0M908.0 215.4h0M910.0 224.0h0M912.8 231.8h0M926.3 229.8h0M929.2 274.0h0M934.9 305.7h0M948.4 366.5h0M956.0 390.0h0M990.0 527.0h0M992.0 545.0h0M1005.0 597.0h0M1008.0 612.0h0M1011.7 626.0h0M1013.0 634.0h0M1016.5 646.0h0M752.1 619.5h0M757.9 636.0h0M1251.2 539.0h0M1256.0 554.0h0M719.1 293.6h0M722.6 292.2h0M718.9 292.9h0M721.8 294.7h0M719.2 291.1h0M1128.1 231.7h0M1129.3 232.4h0M1126.8 230.4h0M1130.1 230.7h0M1125.8 229.2h0M732.9 305.4h0M736.3 300.9h0M752.6 316.3h0M755.1 311.3h0M786.5 326.7h0M784.2 321.5h0M804.1 311.0h0M799.2 308.2h0M818.4 292.3h0M815.9 287.3h0M842.4 295.3h0M844.6 290.2h0M855.4 307.6h0M860.9 306.8h0M848.0 337.5h0M853.2 339.5h0M831.4 363.5h0M836.6 365.6h0M820.4 404.2h0M825.9 403.4h0M842.3 426.6h0M841.4 421.1h0M871.0 402.9h0M866.7 399.3h0M891.7 377.0h0M887.2 373.7h0M901.4 340.5h0M895.8 341.1h0M896.3 308.8h0M890.8 309.6h0M907.6 292.9h0M905.9 287.6h0M950.3 284.5h0M949.4 279.0h0M976.1 308.6h0M981.6 307.6h0M990.3 347.1h0M994.3 343.1h0M1023.0 367.5h0M1025.5 362.5h0M1048.9 380.5h0M1051.4 375.5h0M1075.2 389.5h0M1074.3 383.9h0M1087.6 365.1h0M1082.1 366.0h0M1074.9 343.1h0M1070.9 347.1h0M1044.0 318.8h0M1040.6 323.3h0M1022.7 298.3h0M1018.7 302.3h0M1013.9 268.5h0M1010.5 264.1h0M1038.0 255.7h0M1038.0 250.1h0M1070.8 280.7h0M1073.6 275.8h0M1105.8 260.1h0M1101.3 256.7h0M705.7 340.6h0M701.9 338.3h0M704.4 338.1h0M703.2 335.8h0M704.9 338.4h0M760.2 369.2h0M761.7 365.7h0M761.7 367.3h0M764.2 367.5h0M762.6 368.3h0M724.0 346.3h0M726.1 341.1h0M761.6 365.7h0M761.2 365.9h0M760.8 367.0h0M761.3 369.6h0M762.1 365.3h0M688.8 397.3h0M685.8 399.7h0M687.5 397.4h0M689.1 397.9h0M687.9 400.6h0M745.4 374.7h0M747.6 379.9h0M718.6 385.7h0M720.7 390.9h0M686.7 446.3h0M685.1 447.3h0M683.8 446.4h0M686.7 444.7h0M682.5 443.9h0M729.4 559.8h0M731.3 557.5h0M729.0 560.0h0M728.8 556.0h0M730.0 561.9h0M713.3 446.3h0M711.2 441.1h0M745.3 431.6h0M742.8 426.6h0M771.7 416.8h0M770.4 411.4h0M787.2 425.3h0M792.4 423.2h0M788.8 446.3h0M794.3 445.9h0M782.8 487.2h0M787.8 489.6h0M766.4 507.4h0M770.4 511.3h0M741.2 534.7h0M745.4 538.4h0M793.3 468.1h0M792.1 470.9h0M792.3 469.3h0M792.7 472.0h0M793.7 468.3h0M811.1 472.1h0M811.9 469.7h0M811.5 470.9h0M812.6 469.6h0M810.3 470.7h0M853.9 466.2h0M858.1 463.7h0M855.0 462.1h0M856.2 464.5h0M858.7 464.3h0M874.1 455.0h0M877.2 458.3h0M872.5 458.3h0M873.7 460.9h0M876.8 458.9h0M875.0 462.5h0M872.2 461.5h0M874.2 463.3h0M871.8 461.3h0M874.1 462.8h0M873.7 461.3h0M871.0 463.0h0M871.5 465.4h0M872.4 463.5h0M871.0 461.6h0M883.7 439.4h0M878.9 436.5h0M907.6 411.5h0M904.3 407.1h0M932.7 397.2h0M930.8 392.0h0M969.5 392.0h0M969.0 386.4h0M1002.3 398.1h0M1004.3 392.8h0M1030.8 411.8h0M1033.4 406.8h0M1057.2 436.1h0M1062.6 434.6h0M1050.4 454.7h0M1054.6 458.4h0M1022.9 481.0h0M1025.9 485.8h0M1004.1 491.0h0M1006.0 496.3h0M969.6 498.9h0M970.6 504.5h0M938.9 496.1h0M937.8 501.6h0M914.3 487.2h0M911.9 492.3h0M1055.6 427.9h0M1058.8 427.3h0M1059.1 428.0h0M1057.3 427.0h0M1059.2 430.5h0M1079.1 425.6h0M1081.1 426.1h0M1079.5 426.1h0M1077.6 428.1h0M1082.5 425.5h0M1120.9 419.5h0M1123.3 421.6h0M1123.6 417.8h0M1121.4 417.2h0M1121.9 421.1h0M1146.8 421.0h0M1148.4 422.2h0M1146.7 419.3h0M1146.9 423.1h0M1149.7 420.4h0M779.9 558.6h0M779.4 558.6h0M775.9 557.4h0M777.2 557.5h0M778.2 559.3h0M938.7 611.4h0M936.1 611.9h0M938.1 611.6h0M933.9 611.7h0M934.5 608.8h0M799.7 539.5h0M795.5 535.9h0M820.8 509.0h0M816.2 505.7h0M839.9 498.1h0M840.4 492.5h0M871.4 504.5h0M873.2 499.2h0M892.5 516.5h0M896.3 512.3h0M907.9 531.9h0M912.0 528.1h0M920.2 559.1h0M925.7 557.9h0M971.9 606.1h0M970.1 607.0h0M969.3 604.7h0M971.5 603.4h0M972.2 602.2h0M1041.6 595.6h0M1038.9 593.2h0M1036.9 594.6h0M1040.3 593.2h0M1036.4 592.8h0M967.3 579.5h0M961.8 580.6h0M969.2 541.9h0M965.2 537.9h0M998.0 536.1h0M997.7 530.5h0M1025.2 549.1h0M1030.6 547.8h0M1032.1 574.3h0M1037.5 572.7h0M1193.5 487.0h0M1192.4 487.9h0M1195.1 487.1h0M1194.5 488.7h0M1192.9 487.7h0M1077.9 588.5h0M1075.1 590.6h0M1073.6 590.7h0M1075.7 588.2h0M1078.1 590.5h0M1183.6 476.9h0M1180.9 481.8h0M1148.5 458.0h0M1145.6 462.8h0M1123.2 450.1h0M1123.1 455.7h0M1094.5 459.6h0M1098.1 463.9h0M1067.1 489.2h0M1071.4 492.8h0M1055.7 512.7h0M1061.2 513.7h0M1058.8 538.1h0M1064.2 536.5h0M1067.3 570.0h0M1072.7 568.4h0M1228.3 358.5h0M1228.7 359.9h0M1227.7 360.3h0M1227.3 362.4h0M1226.4 362.9h0M1241.3 473.5h0M1243.6 473.3h0M1241.9 476.4h0M1244.2 472.6h0M1243.2 477.7h0M1199.2 359.0h0M1198.4 364.5h0M1165.5 354.4h0M1164.8 359.9h0M1131.1 350.3h0M1132.0 355.8h0M1124.1 373.9h0M1128.5 370.5h0M1135.3 403.7h0M1140.4 401.4h0M1158.2 428.4h0M1161.0 423.5h0M1189.3 446.6h0M1192.1 441.7h0M1208.6 457.3h0M1211.2 452.4h0M1248.4 399.8h0M1250.6 398.1h0M1247.6 400.1h0M1251.8 400.8h0M1247.4 401.6h0M1268.1 394.9h0M1266.2 395.6h0M1264.5 396.6h0M1268.4 394.5h0M1266.6 396.4h0M666.8 496.6h0M666.1 496.4h0M666.4 498.0h0M665.5 495.7h0M664.7 498.7h0M687.0 494.5h0M686.3 494.3h0M685.0 494.0h0M683.4 492.7h0M683.9 494.1h0M1152.8 262.9h0M1150.7 260.4h0M1149.4 261.5h0M1150.1 260.2h0M1152.5 264.5h0M1205.1 308.3h0M1203.5 312.2h0M1205.0 310.5h0M1206.9 311.0h0M1204.8 311.9h0M1135.2 280.3h0M1139.5 283.9h0M1118.7 303.8h0M1124.3 303.8h0M1142.3 315.9h0M1142.7 310.3h0M1183.0 319.4h0M1183.6 313.8h0M667.4 479.1h0M662.4 479.0h0M670.4 478.2h0M669.2 408.2h0M664.2 408.0h0M673.1 362.7h0M668.2 361.9h0M676.3 362.3h0M693.8 276.0h0M689.1 274.2h0M767.8 202.7h0M765.7 198.2h0M770.0 205.0h0M840.1 175.6h0M839.0 170.7h0M915.4 159.4h0M914.2 154.6h0M972.4 152.2h0M972.1 147.2h0M973.6 155.1h0M1023.2 151.3h0M1023.3 146.3h0M1024.1 154.3h0M1100.9 166.8h0M1103.1 162.4h0M1162.2 218.3h0M1165.9 215.0h0M1160.6 221.1h0M1194.7 264.6h0M1199.0 262.0h0M1192.7 267.0h0M1243.5 351.6h0M1247.9 349.3h0M1286.1 444.6h0M1291.1 444.6h0M1283.1 445.6h0M1263.4 482.3h0M1265.6 486.8h0M1192.4 505.6h0M1194.8 509.9h0M1167.9 562.5h0M1172.9 561.8h0M1129.9 612.6h0M1130.6 617.6h0M1046.7 624.6h0M1047.5 629.5h0M1045.2 621.8h0M956.9 639.7h0M957.9 644.6h0M902.1 651.7h0M903.3 656.6h0M838.2 608.7h0M833.5 610.6h0M792.2 576.7h0M791.2 581.6h0M791.8 573.5h0M714.4 573.1h0M713.6 578.0h0M713.9 569.9h0M758.6 236.8h0M761.8 240.7h0M707.8 322.8h0M712.5 324.5h0M682.8 389.3h0M687.8 389.4h0M682.1 467.4h0M687.1 467.3h0M705.4 558.1h0M708.4 554.1h0M704.4 561.1h0M808.5 566.6h0M810.4 562.0h0M880.0 625.7h0M881.3 620.9h0M950.2 612.3h0M949.3 607.3h0M1050.8 596.5h0M1050.3 591.5h0M1143.0 576.4h0M1139.2 573.2h0M1166.0 512.4h0M1162.5 508.9h0M1208.8 493.3h0M1207.6 488.5h0M1270.3 450.3h0M1265.5 448.8h0M1273.5 450.2h0M1248.4 386.5h0M1243.8 388.4h0M1208.5 311.3h0M1204.1 313.7h0M1210.6 309.0h0M1137.7 231.2h0M1133.8 234.3h0M1086.3 188.3h0M1084.6 193.0h0M721.8 606.9h0M718.4 603.3h0M816.9 609.6h0M820.8 606.6h0M785.1 669.4h0M786.3 674.3h0M700.6 647.3h0M695.7 648.1h0M703.4 645.8h0M1211.1 519.5h0M1209.8 514.7h0M1212.8 522.2h0M1278.9 522.7h0M1280.9 518.2h0M1278.5 525.9h0M1314.9 561.8h0M1319.8 560.9h0M1286.9 594.2h0M1288.2 599.0h0M1285.1 591.6h0M1193.0 578.3h0M1188.6 580.8h0M734.2 614.2h0M734.4 614.5h0M742.7 606.2h0M741.2 605.9h0M759.7 606.3h0M758.5 606.8h0M770.0 611.7h0M768.9 610.2h0M780.1 654.4h0M777.6 654.6h0M774.6 665.1h0M774.4 663.3h0M753.7 670.7h0M753.9 669.7h0M746.4 665.0h0M747.3 665.8h0M1227.7 537.2h0M1229.1 535.4h0M1240.6 527.3h0M1240.4 528.2h0M1254.9 525.0h0M1256.9 524.4h0M1263.7 528.0h0M1265.4 527.1h0M1278.8 574.2h0M1276.6 574.0h0M1274.4 583.2h0M1275.4 584.6h0M1249.5 587.7h0M1248.8 588.3h0M1241.6 583.2h0M1241.5 582.4h0M1058.7 424.3h0M1064.4 427.9h0M1057.8 426.0h0M1062.6 432.0h0M1058.9 423.7h0M1056.6 429.7h0M1056.4 424.3h0M1054.3 425.6h0M1058.0 426.3h0M1058.0 434.6h0M1063.1 425.0h0M1058.9 428.2h0M1057.6 431.1h0M1057.2 427.2h0M872.1 461.8h0M876.6 464.2h0M869.2 460.8h0M870.8 464.2h0M873.6 464.3h0M872.8 456.9h0M874.0 462.5h0M874.4 458.3h0M873.2 460.3h0M871.3 462.9h0M792.9 471.6h0M788.6 469.1h0M790.4 477.1h0M791.9 468.4h0M789.7 475.1h0M796.4 477.0h0M792.8 474.5h0M789.1 472.8h0M791.2 472.0h0M792.1 473.1h0M1126.8 235.6h0M1127.7 233.0h0M1125.4 228.2h0M1125.8 233.2h0M1123.5 235.1h0M1125.3 232.8h0M1125.2 228.9h0M1130.4 229.5h0M1125.0 300.8h0M1123.6 300.3h0M1122.1 303.9h0M1126.8 300.3h0M1123.0 304.0h0M1121.7 303.5h0M1226.9 360.6h0M1230.2 362.4h0M1230.0 355.7h0M1230.9 355.9h0M1231.1 363.2h0M1230.5 357.6h0M1232.3 359.5h0M1225.5 358.0h0M1233.0 358.1h0M1229.3 358.2h0M1243.1 397.9h0M1249.2 400.0h0M1247.8 393.4h0M1252.1 401.7h0M1251.5 403.5h0M1247.1 397.9h0M1249.3 404.7h0M1243.1 398.8h0M1246.3 401.1h0M1252.9 398.6h0M1244.5 399.7h0M1247.4 394.7h0M1250.9 397.9h0M1250.4 395.4h0M1275.3 394.6h0M1275.1 394.0h0M1276.0 396.8h0M1269.6 397.1h0M1273.7 395.5h0M1272.0 398.1h0M1282.8 393.4h0M1282.2 398.4h0M1283.6 399.6h0M1281.9 401.6h0M1284.5 398.2h0M1153.5 421.4h0M1150.6 417.2h0M1153.2 419.9h0M1145.6 415.9h0M1151.5 418.9h0M1151.1 420.3h0M1150.8 423.1h0M1149.0 417.7h0M1151.2 420.6h0M1152.6 422.8h0M1237.7 476.9h0M1239.7 472.2h0M1238.4 478.5h0M1240.3 473.4h0M1234.5 473.1h0M1237.3 474.6h0M1197.1 487.4h0M1193.3 483.9h0M1189.8 485.5h0M1191.8 490.8h0M1191.7 484.7h0M1195.2 486.2h0M1189.8 488.9h0M1218.9 494.9h0M1220.1 498.3h0M1218.9 498.6h0M1221.0 495.7h0M1249.5 488.8h0M1251.8 494.0h0M1253.8 494.2h0M1255.3 491.7h0M1169.3 500.7h0M1168.7 503.9h0M1167.4 502.4h0M1160.2 509.2h0M1164.0 508.4h0M1153.3 517.4h0M1152.8 516.7h0M1153.0 518.2h0M1152.9 517.5h0M1179.8 516.0h0M1183.8 519.4h0M1181.4 518.0h0M1183.4 517.3h0M1263.0 434.5h0M1263.9 436.0h0M1266.9 435.0h0M1281.5 430.1h0M1286.0 427.1h0M1286.4 429.4h0M1265.3 454.1h0M1264.0 454.5h0M1288.7 459.3h0M1285.2 457.9h0M1283.7 458.0h0M1283.1 460.6h0M723.4 300.9h0M721.3 301.2h0M723.9 300.4h0M723.8 297.0h0M726.8 298.0h0M723.7 297.1h0M724.4 298.2h0M705.6 337.7h0M703.4 333.7h0M706.0 339.1h0M706.6 334.3h0M706.3 337.8h0M705.6 337.9h0M704.3 337.5h0M692.1 395.9h0M686.6 396.8h0M690.4 392.9h0M688.5 398.3h0M689.5 397.3h0M687.1 399.1h0M694.0 396.5h0M681.2 442.1h0M685.1 445.2h0M681.0 448.0h0M684.8 446.4h0M678.7 444.7h0M684.6 441.9h0M685.3 448.5h0M685.6 443.2h0M759.6 367.9h0M763.0 368.5h0M763.4 365.8h0M760.2 362.5h0M762.3 369.8h0M727.0 558.0h0M729.4 559.8h0M724.8 557.3h0M725.8 563.1h0M726.4 561.0h0M731.4 562.4h0M731.0 562.4h0M774.3 555.2h0M775.5 555.4h0M780.8 553.5h0M778.2 553.3h0M779.8 558.7h0M776.0 560.1h0M935.2 612.2h0M935.7 607.8h0M934.2 608.7h0M936.3 609.3h0M940.0 608.6h0M933.9 607.3h0M933.1 605.4h0M932.5 611.3h0M971.2 603.5h0M971.8 606.3h0M972.3 605.6h0M969.9 603.5h0M969.4 603.8h0M969.3 603.2h0M1038.6 591.5h0M1038.4 590.9h0M1042.5 591.1h0M1036.4 592.5h0M1036.1 589.2h0M1039.2 587.6h0M1033.4 592.5h0M1041.6 587.8h0M1036.7 593.5h0M1070.9 587.2h0M1072.2 588.5h0M1070.9 590.9h0M1074.7 589.7h0M1074.3 584.5h0M1074.6 585.9h0M1075.0 587.1h0M659.3 495.5h0M661.9 497.9h0M657.6 496.0h0M663.6 497.2h0M658.4 495.7h0M659.2 498.3h0M660.1 496.8h0M664.4 493.3h0M684.0 489.5h0M682.7 494.8h0M686.6 496.5h0M682.2 491.3h0M689.1 495.2h0M687.9 494.9h0M1152.5 263.8h0M1152.1 265.9h0M1151.6 264.7h0M1155.5 261.3h0M1150.2 265.3h0M1151.4 263.6h0M1156.7 264.9h0M1151.0 266.7h0M1203.8 312.3h0M1198.7 314.2h0M1198.9 317.8h0M1201.0 313.3h0M1201.0 312.4h0M1158.9 280.2h0M1162.8 277.3h0M1160.8 282.5h0M1161.3 283.3h0M960.9 553.3h0M959.7 551.3h0M963.0 550.8h0M959.8 552.0h0M958.7 549.2h0M1027.3 545.3h0M1028.3 546.6h0M1027.7 543.8h0M1028.6 546.3h0M1026.2 542.0h0M681.2 304.8h0M684.7 301.5h0M683.2 304.4h0M859.3 314.9h0M856.6 318.4h0M860.0 317.9h0M892.0 298.8h0M893.4 297.9h0M892.9 297.2h0M982.0 323.9h0M983.2 321.7h0M982.0 319.8h0M1009.6 293.1h0M1011.3 294.0h0M1010.6 291.0h0M1017.3 261.7h0M1017.5 263.2h0M1019.0 261.0h0"/></defs>
<use href="#dts" fill="none" stroke="#989189" stroke-width="6.400" stroke-linecap="round"/>
<use href="#dts" fill="none" transform="translate(-0.5,-0.7)" stroke="#b9b3ab" stroke-width="2.800" stroke-linecap="round"/>
<path d="M552.700 744.200L513 749.500" stroke="#35e035" stroke-width="1.200" fill="none"/><path d="M513 746.800L490 753.300 513 753.300z" fill="none" stroke="#35e035" stroke-width="1.200"/>
<path d="M552.700 744.200L553.300 768" stroke="#3838f0" stroke-width="1.200" fill="none"/><path d="M549.300 771Q553.300 765 557.300 771L553.500 786.500z" fill="#2a2af0" stroke="#2a2af0" stroke-width="0.800"/>
<path d="M552.700 744.200L561 770" stroke="#f03030" stroke-width="1.200" stroke-dasharray="2 1" fill="none"/><path d="M557.500 772L564 770 564.800 788.200z" fill="#f03030" stroke="#f03030" stroke-width="0.800"/>
<g font-family="Liberation Sans,sans-serif" font-size="12" fill="#fff"><text x="477.500" y="754.500">Y</text><text x="554" y="795.500">Z</text><text x="567.500" y="797">X</text></g>
</g>
</svg>
<div class="t hm" style="left:1479px;top:100px;color:#fff;font-size:12.400px">Model Info: C:/Users/Skill_Lync/Desktop/w6- hood/HOOD MODEL.hm*</div>
<!-- vertical + bottom toolbars -->
<svg style="left:441px;top:98px" width="20" height="2" viewBox="0 0 20 2"><rect x="0" y="0" width="2" height="2" fill="#222"/><rect x="6" y="0" width="2" height="2" fill="#222"/><rect x="12" y="0" width="2" height="2" fill="#222"/><rect x="18" y="0" width="2" height="2" fill="#222"/></svg>
<svg style="left:439px;top:106px" width="24" height="24" viewBox="0 0 24 24"><path d="M4 6l6-2v6l-6 2z" fill="#4a4a90" stroke="#333" stroke-width="0.600"/><path d="M10 4l6-2v6l-6 2z" fill="#4a4a90" stroke="#333" stroke-width="0.600"/><path d="M16 2l6-2v6l-6 2z" fill="#4a4a90" stroke="#333" stroke-width="0.600"/><path d="M4 12l6-2v6l-6 2z" fill="#fdfdfd" stroke="#333" stroke-width="0.600"/><path d="M10 10l6-2v6l-6 2z" fill="#fdfdfd" stroke="#333" stroke-width="0.600"/><path d="M16 8l6-2v6l-6 2z" fill="#4a4a90" stroke="#333" stroke-width="0.600"/><path d="M4 18l6-2v6l-6 2z" fill="#fdfdfd" stroke="#333" stroke-width="0.600"/><path d="M10 16l6-2v6l-6 2z" fill="#fdfdfd" stroke="#333" stroke-width="0.600"/><path d="M16 14l6-2v6l-6 2z" fill="#4a4a90" stroke="#333" stroke-width="0.600"/><rect x="1.500" y="9.500" width="13" height="13" fill="none" stroke="#d03020" stroke-width="1.200"/></svg>
<svg style="left:439px;top:134px" width="24" height="24" viewBox="0 0 24 24"><path d="M4 6l6-2v6l-6 2z" fill="#4a4a90" stroke="#333" stroke-width="0.600"/><path d="M10 4l6-2v6l-6 2z" fill="#4a4a90" stroke="#333" stroke-width="0.600"/><path d="M16 2l6-2v6l-6 2z" fill="#4a4a90" stroke="#333" stroke-width="0.600"/><path d="M4 12l6-2v6l-6 2z" fill="#4a4a90" stroke="#333" stroke-width="0.600"/><path d="M10 10l6-2v6l-6 2z" fill="#4a4a90" stroke="#333" stroke-width="0.600"/><path d="M16 8l6-2v6l-6 2z" fill="#fdfdfd" stroke="#333" stroke-width="0.600"/><path d="M4 18l6-2v6l-6 2z" fill="#fdfdfd" stroke="#333" stroke-width="0.600"/><path d="M10 16l6-2v6l-6 2z" fill="#fdfdfd" stroke="#333" stroke-width="0.600"/><path d="M16 14l6-2v6l-6 2z" fill="#fdfdfd" stroke="#333" stroke-width="0.600"/><path d="M12 17c3 3 8 2 10-2l1 3c-3 4-8 4-11 1z" fill="#e02020"/><path d="M10 17l5-1-1 5z" fill="#e02020"/></svg>
<svg style="left:439px;top:162px" width="24" height="24" viewBox="0 0 24 24"><path d="M4 6l6-2v6l-6 2z" fill="#4a4a90" stroke="#333" stroke-width="0.600"/><path d="M10 4l6-2v6l-6 2z" fill="#4a4a90" stroke="#333" stroke-width="0.600"/><path d="M16 2l6-2v6l-6 2z" fill="#4a4a90" stroke="#333" stroke-width="0.600"/><path d="M4 12l6-2v6l-6 2z" fill="#4a4a90" stroke="#333" stroke-width="0.600"/><path d="M10 10l6-2v6l-6 2z" fill="#fdfdfd" stroke="#333" stroke-width="0.600"/><path d="M16 8l6-2v6l-6 2z" fill="#fdfdfd" stroke="#333" stroke-width="0.600"/><path d="M4 18l6-2v6l-6 2z" fill="#fdfdfd" stroke="#333" stroke-width="0.600"/><path d="M10 16l6-2v6l-6 2z" fill="#fdfdfd" stroke="#333" stroke-width="0.600"/><path d="M16 14l6-2v6l-6 2z" fill="#fdfdfd" stroke="#333" stroke-width="0.600"/></svg>
<svg style="left:439px;top:190px" width="24" height="24" viewBox="0 0 24 24"><path d="M4 6l6-2v6l-6 2z" fill="#4a4a90" stroke="#333" stroke-width="0.600"/><path d="M10 4l6-2v6l-6 2z" fill="#4a4a90" stroke="#333" stroke-width="0.600"/><path d="M16 2l6-2v6l-6 2z" fill="#4a4a90" stroke="#333" stroke-width="0.600"/><path d="M4 12l6-2v6l-6 2z" fill="#4a4a90" stroke="#333" stroke-width="0.600"/><path d="M10 10l6-2v6l-6 2z" fill="#4a4a90" stroke="#333" stroke-width="0.600"/><path d="M16 8l6-2v6l-6 2z" fill="#4a4a90" stroke="#333" stroke-width="0.600"/><path d="M4 18l6-2v6l-6 2z" fill="#4a4a90" stroke="#333" stroke-width="0.600"/><path d="M10 16l6-2v6l-6 2z" fill="#4a4a90" stroke="#333" stroke-width="0.600"/><path d="M16 14l6-2v6l-6 2z" fill="#4a4a90" stroke="#333" stroke-width="0.600"/></svg>
<svg style="left:439px;top:218px" width="24" height="24" viewBox="0 0 24 24"><path d="M4 6l6-2v6l-6 2z" fill="#fdfdfd" stroke="#333" stroke-width="0.600"/><path d="M10 4l6-2v6l-6 2z" fill="#fdfdfd" stroke="#333" stroke-width="0.600"/><path d="M16 2l6-2v6l-6 2z" fill="#fdfdfd" stroke="#333" stroke-width="0.600"/><path d="M4 12l6-2v6l-6 2z" fill="#4a4a90" stroke="#333" stroke-width="0.600"/><path d="M10 10l6-2v6l-6 2z" fill="#4a4a90" stroke="#333" stroke-width="0.600"/><path d="M16 8l6-2v6l-6 2z" fill="#fdfdfd" stroke="#333" stroke-width="0.600"/><path d="M4 18l6-2v6l-6 2z" fill="#4a4a90" stroke="#333" stroke-width="0.600"/><path d="M10 16l6-2v6l-6 2z" fill="#4a4a90" stroke="#333" stroke-width="0.600"/><path d="M16 14l6-2v6l-6 2z" fill="#fdfdfd" stroke="#333" stroke-width="0.600"/><rect x="1.500" y="9.500" width="13" height="13" fill="none" stroke="#d03020" stroke-width="1.200"/></svg>
<svg style="left:439px;top:246px" width="24" height="24" viewBox="0 0 24 24"><path d="M4 6l6-2v6l-6 2z" fill="#4a4a90" stroke="#333" stroke-width="0.600"/><path d="M10 4l6-2v6l-6 2z" fill="#4a4a90" stroke="#333" stroke-width="0.600"/><path d="M16 2l6-2v6l-6 2z" fill="#4a4a90" stroke="#333" stroke-width="0.600"/><path d="M4 12l6-2v6l-6 2z" fill="#4a4a90" stroke="#333" stroke-width="0.600"/><path d="M10 10l6-2v6l-6 2z" fill="#4a4a90" stroke="#333" stroke-width="0.600"/><path d="M16 8l6-2v6l-6 2z" fill="#4a4a90" stroke="#333" stroke-width="0.600"/><path d="M4 18l6-2v6l-6 2z" fill="#4a4a90" stroke="#333" stroke-width="0.600"/><path d="M10 16l6-2v6l-6 2z" fill="#4a4a90" stroke="#333" stroke-width="0.600"/><path d="M16 14l6-2v6l-6 2z" fill="#4a4a90" stroke="#333" stroke-width="0.600"/><circle cx="12" cy="12" r="10.500" fill="none" stroke="#d03020" stroke-width="1.200"/></svg>
<svg style="left:439px;top:274px" width="24" height="24" viewBox="0 0 24 24"><path d="M3 9l5-5 4 3-5 14-5-3z" fill="#4a4a98" stroke="#222250" stroke-width="1"/><path d="M13 6l5-3 4 4-4 12-5-2z" fill="#5a5aa8" stroke="#222250" stroke-width="1"/><path d="M8 8l6-2" stroke="#222250" stroke-width="3"/><ellipse cx="5" cy="18" rx="3.500" ry="2.500" fill="#c8c8e8"/><ellipse cx="17" cy="17" rx="3" ry="2" fill="#c8c8e8"/></svg>
<svg style="left:439px;top:302px" width="24" height="26" viewBox="0 0 24 26"><circle cx="6.500" cy="6.500" r="5" fill="#2828b8"/><rect x="5.700" y="5.500" width="1.800" height="4" fill="#fff"/><rect x="5.700" y="3" width="1.800" height="1.600" fill="#fff"/><text x="4" y="24" font-family="Liberation Sans,sans-serif" font-size="8.500" font-weight="bold" fill="#444">123</text></svg>
<svg style="left:439px;top:330px" width="24" height="24" viewBox="0 0 24 24"><path d="M2 21V14M2 17.500L21 8M21 4v8" stroke="#4a4a98" stroke-width="1.800" fill="none"/><text x="0" y="11" font-family="Liberation Sans,sans-serif" font-size="7" fill="#222">0</text><text x="18" y="4" font-family="Liberation Sans,sans-serif" font-size="7" fill="#222">1</text><text x="10" y="22" font-family="Liberation Sans,sans-serif" font-size="7" fill="#222">+10'</text></svg>
<svg style="left:439px;top:358px" width="26" height="26" viewBox="0 0 26 26"><path d="M1 5l9-3v9l-9 3z" fill="#6a6ab0" stroke="#333360" stroke-width="0.800"/><path d="M1 9.500l9-3M5.500 3.500v9" stroke="#d8d8f0" stroke-width="0.800"/><text x="3" y="24" font-family="Liberation Sans,sans-serif" font-size="8.500" font-weight="bold" fill="#444">ABC</text></svg>
<svg style="left:439px;top:386px" width="26" height="26" viewBox="0 0 26 26"><path d="M3 1v9" stroke="#e02020" stroke-width="1.600"/><path d="M0.500 7l2.500 5 2.500-5z" fill="#e02020"/><circle cx="3" cy="14" r="1.800" fill="#111"/><text x="3" y="24" font-family="Liberation Sans,sans-serif" font-size="8.500" font-weight="bold" fill="#444">ABC</text></svg>
<svg style="left:439px;top:413px" width="26" height="26" viewBox="0 0 26 26"><path d="M1 7l12-3v8l-12 3z" fill="#8888c8" stroke="#444480" stroke-width="0.800"/><path d="M10 15l12-3v8l-12 3z" fill="#8888c8" stroke="#444480" stroke-width="0.800"/><path d="M4 0v5M20 18v5" stroke="#e02020" stroke-width="1.600"/><path d="M1.500 4l2.500 4 2.500-4zM17.500 21l2.500 4 2.500-4z" fill="#e02020"/><path d="M16 6a3.500 3.500 0 0 1 6-2M23 7a3.500 3.500 0 0 1-6 2" fill="none" stroke="#909090" stroke-width="1.400"/></svg>
<div class="a" style="left:437px;top:440px;width:27px;height:27px;background:linear-gradient(#fbfbfb 40%,#f5b266);border:1px solid #c0c0c0"></div>
<svg style="left:439px;top:443px" width="24" height="22" viewBox="0 0 24 22"><path d="M4 4.500l16-3.500-1 12.500-16 5z" fill="#4a8ad8" stroke="#111" stroke-width="1"/><circle cx="4" cy="4.500" r="1.800" fill="#fff" stroke="#111" stroke-width="0.800"/><circle cx="20" cy="1.800" r="1.800" fill="#fff" stroke="#111" stroke-width="0.800"/><circle cx="19" cy="13.500" r="1.800" fill="#fff" stroke="#111" stroke-width="0.800"/><circle cx="3" cy="18.500" r="1.800" fill="#fff" stroke="#111" stroke-width="0.800"/></svg>
<svg style="left:440px;top:815px" width="2" height="24" viewBox="0 0 2 24"><rect x="0" y="0" width="2" height="2" fill="#222"/><rect x="0" y="6" width="2" height="2" fill="#222"/><rect x="0" y="12" width="2" height="2" fill="#222"/><rect x="0" y="18" width="2" height="2" fill="#222"/></svg>
<svg style="left:449px;top:814px" width="22" height="22" viewBox="0 0 22 22"><rect x="1" y="1" width="20" height="20" rx="4" fill="#7aa0d8"/><path d="M11 3l3.500 3.500L11 10 7.500 6.500zM4.500 7.500L8 11l-3.500 3.500L1 11zM17.500 7.500L21 11l-3.500 3.500L14 11zM11 12l3.500 3.500L11 19l-3.500-3.500z" fill="#eef2fa"/></svg>
<svg style="left:475px;top:824px" width="7" height="4" viewBox="0 0 7 4"><path d="M0 0h7L3.500 4z" fill="#111"/></svg>
<svg style="left:490px;top:815px" width="2" height="24" viewBox="0 0 2 24"><rect x="0" y="0" width="2" height="2" fill="#222"/><rect x="0" y="6" width="2" height="2" fill="#222"/><rect x="0" y="12" width="2" height="2" fill="#222"/><rect x="0" y="18" width="2" height="2" fill="#222"/></svg>
<div class="a" style="left:496px;top:814px;width:100px;height:21px;background:#fff"></div>
<div class="a" style="left:580px;top:815px;width:15px;height:19px;background:#f0f0f0"></div>
<svg style="left:497px;top:813px" width="18" height="22" viewBox="0 0 18 22"><path d="M1 12c1-7 9-10 15-4l-2 5c-2-3-6-3-8-1z" fill="#6a6ab0" stroke="#2a2a60" stroke-width="1"/><rect x="1" y="19" width="3" height="2.500" fill="#e02020"/><rect x="4" y="19" width="3" height="2.500" fill="#e0c020"/><rect x="7" y="19" width="3" height="2.500" fill="#20c040"/><rect x="10" y="19" width="3" height="2.500" fill="#2060e0"/><rect x="13" y="19" width="3" height="2.500" fill="#a020d0"/></svg>
<div class="t tk" style="left:518px;top:820px">By Topo</div>
<svg style="left:583px;top:823px" width="9" height="5" viewBox="0 0 9 5"><path d="M0 0h9L4.500 5z" fill="#111"/></svg>
<svg style="left:598px;top:814px" width="26" height="22" viewBox="0 0 26 22"><path d="M1 11c2-8 12-10 20-3l-3 7c-2-4-7-5-10-3z" fill="#fff" stroke="#333" stroke-width="1"/><path d="M1 11l7 1" stroke="#333"/></svg>
<svg style="left:625px;top:824px" width="7" height="4" viewBox="0 0 7 4"><path d="M0 0h7L3.500 4z" fill="#111"/></svg>
<svg style="left:636px;top:814px" width="26" height="22" viewBox="0 0 26 22"><path d="M1 11c2-8 12-10 20-3l-3 7c-2-4-7-5-10-3z" fill="#5a5aa0" stroke="#22224a" stroke-width="1"/><path d="M18 15l3-7" stroke="#ddd" stroke-width="1"/></svg>
<svg style="left:663px;top:824px" width="7" height="4" viewBox="0 0 7 4"><path d="M0 0h7L3.500 4z" fill="#111"/></svg>
<svg style="left:674px;top:814px" width="24" height="24" viewBox="0 0 24 24"><path d="M1 6l8-4.500 13 3v13l-9 4.500-12-3.500z" fill="#8c8ccc" stroke="#333360" stroke-width="1"/><path d="M1 6l12 3.500 9-5M13 9.500V22" fill="none" stroke="#333360" stroke-width="1"/><path d="M13 9.500l9-5v13l-9 4.500z" fill="#b8b8e0"/></svg>
<div class="a" style="left:704px;top:814px;width:1px;height:22px;background:#a8a8a8"></div>
<div class="a" style="left:709px;top:814px;width:105px;height:21px;background:#fff"></div>
<div class="a" style="left:799px;top:815px;width:14px;height:19px;background:#f0f0f0"></div>
<svg style="left:710px;top:813px" width="20" height="22" viewBox="0 0 20 22"><path d="M2 5l7-3.500 9 2.500v10l-8 4-8-3z" fill="#5a5aa8" stroke="#22224a" stroke-width="0.800"/><path d="M2 5l8 3 8-4M10 8v10M2 9.700l8 3 8-3.500M2 14l8 3 8-3.500M6 6.500v10M14 6v10M5.500 3.300l8.500 2.700M13.500 2.500L6 6.500" fill="none" stroke="#c8c8e8" stroke-width="0.700"/><rect x="1" y="19" width="3" height="2.500" fill="#e02020"/><rect x="4" y="19" width="3" height="2.500" fill="#e0c020"/><rect x="7" y="19" width="3" height="2.500" fill="#20c040"/><rect x="10" y="19" width="3" height="2.500" fill="#2060e0"/><rect x="13" y="19" width="3" height="2.500" fill="#a020d0"/></svg>
<div class="t tk" style="left:731px;top:820px">By Comp</div>
<svg style="left:801px;top:823px" width="9" height="5" viewBox="0 0 9 5"><path d="M0 0h9L4.500 5z" fill="#111"/></svg>
<svg style="left:818px;top:815px" width="22" height="22" viewBox="0 0 22 22"><path d="M2 5l7-3.500 9 2.500v10l-8 4-8-3z" fill="#fff" stroke="#22224a" stroke-width="0.800"/><path d="M2 5l8 3 8-4M10 8v10M2 9.700l8 3 8-3.500M2 14l8 3 8-3.500M6 6.500v10M14 6v10M5.500 3.300l8.500 2.700M13.500 2.500L6 6.500" fill="none" stroke="#333" stroke-width="0.700"/></svg>
<svg style="left:844px;top:824px" width="7" height="4" viewBox="0 0 7 4"><path d="M0 0h7L3.500 4z" fill="#111"/></svg>
<svg style="left:856px;top:815px" width="22" height="22" viewBox="0 0 22 22"><path d="M2 5l7-3.500 9 2.500v10l-8 4-8-3z" fill="#5a5aa8" stroke="#22224a" stroke-width="0.800"/><path d="M2 5l8 3 8-4M10 8v10M2 9.700l8 3 8-3.500M2 14l8 3 8-3.500M6 6.500v10M14 6v10M5.500 3.300l8.500 2.700M13.500 2.500L6 6.500" fill="none" stroke="#c8c8e8" stroke-width="0.700"/></svg>
<svg style="left:882px;top:824px" width="7" height="4" viewBox="0 0 7 4"><path d="M0 0h7L3.500 4z" fill="#111"/></svg>
<svg style="left:898px;top:814px" width="20" height="22" viewBox="0 0 20 22"><path d="M2 15l14-8" stroke="#333" stroke-width="2"/></svg>
<svg style="left:919px;top:824px" width="7" height="4" viewBox="0 0 7 4"><path d="M0 0h7L3.500 4z" fill="#111"/></svg>
<svg style="left:931px;top:814px" width="24" height="22" viewBox="0 0 24 22"><path d="M1 11l11-5 11 5-11 5z" fill="#777" stroke="#333" stroke-width="0.800"/><path d="M6.500 8.500l11 5M17.500 8.500l-11 5" stroke="#ccc" stroke-width="0.800"/></svg>
<svg style="left:958px;top:824px" width="7" height="4" viewBox="0 0 7 4"><path d="M0 0h7L3.500 4z" fill="#111"/></svg>
<svg style="left:969px;top:814px" width="26" height="22" viewBox="0 0 26 22"><path d="M1 9l11-5 12 5v4l-12 5-11-5z" fill="#2030d0" stroke="#101880" stroke-width="0.800"/><path d="M1 9l11-5 12 5-12 5z" fill="#6878f0"/></svg>
<svg style="left:996px;top:824px" width="7" height="4" viewBox="0 0 7 4"><path d="M0 0h7L3.500 4z" fill="#111"/></svg>
<svg style="left:1010px;top:816px" width="18" height="18" viewBox="0 0 18 18"><path d="M1 4l6-2v6l-6 2zM10 2l6-2v6l-6 2zM1 12l6-2v6l-6 2zM10 10l6-2v6l-6 2z" fill="#5a5aa8" stroke="#22224a" stroke-width="0.600"/></svg>
<svg style="left:1036px;top:814px" width="24" height="24" viewBox="0 0 24 24"><rect x="1.500" y="2.500" width="21" height="14" fill="#3088d8" stroke="#203060" stroke-width="1.500"/><rect x="9" y="17" width="6" height="3" fill="#666"/><rect x="6" y="20" width="12" height="2" fill="#444"/></svg>
<svg style="left:1068px;top:815px" width="2" height="24" viewBox="0 0 2 24"><rect x="0" y="0" width="2" height="2" fill="#222"/><rect x="0" y="6" width="2" height="2" fill="#222"/><rect x="0" y="12" width="2" height="2" fill="#222"/><rect x="0" y="18" width="2" height="2" fill="#222"/></svg>
<svg style="left:1076px;top:814px" width="24" height="24" viewBox="0 0 24 24"><path d="M1 4l1.500-2.500h6L10 4h9v10H1z" fill="#f4cc80" stroke="#c89848" stroke-width="0.900"/><path d="M4 15l4-2 4 2v3l-4 2-4-2z" fill="#2030d0"/><path d="M4 15l4-2 4 2-4 2z" fill="#5868f0"/><path d="M12 15l4-2 4 2v3l-4 2-4-2z" fill="#d08820"/><path d="M12 15l4-2 4 2-4 2z" fill="#f0b050"/><path d="M8 11l4-2 4 2v3l-4 2-4-2z" fill="#20a030"/><path d="M8 11l4-2 4 2-4 2z" fill="#60e060"/></svg>
<svg style="left:1104px;top:814px" width="24" height="24" viewBox="0 0 24 24"><path d="M1 4l1.500-2.500h6L10 4h9v10H1z" fill="#f4cc80" stroke="#c89848" stroke-width="0.900"/><path d="M5 14l8-3.500 9 3.500v4l-9 4-8-4z" fill="#1828c8"/><path d="M5 14l8-3.500 9 3.500-9 3.500z" fill="#5060f0"/></svg>
<svg style="left:1132px;top:814px" width="24" height="24" viewBox="0 0 24 24"><path d="M1 4l1.500-2.500h6L10 4h9v10H1z" fill="#f4cc80" stroke="#c89848" stroke-width="0.900"/><path d="M9 21V10a6 6 0 0 1 10-3" fill="none" stroke="#d02020" stroke-width="1.400"/><path d="M12 11h6l-3 4.500 3 4.500h-6l3-4.500z" fill="#e8e8e8" stroke="#333" stroke-width="0.800"/><path d="M8 21.500h14" stroke="#111" stroke-width="1.200"/></svg>
<svg style="left:1160px;top:814px" width="24" height="24" viewBox="0 0 24 24"><path d="M1 4l1.500-2.500h6L10 4h9v10H1z" fill="#f4cc80" stroke="#c89848" stroke-width="0.900"/><path d="M7 14l7-3 8 3v4l-8 3.500-7-3.500z" fill="#555"/><path d="M7 14l7-3 8 3-7.500 3.500z" fill="#999"/><path d="M3 8v10" stroke="#d02020" stroke-width="1.200"/><text x="4" y="9" font-family="Liberation Sans,sans-serif" font-size="7" font-weight="bold" fill="#111">t</text></svg>
<svg style="left:1188px;top:814px" width="24" height="24" viewBox="0 0 24 24"><path d="M1 4l1.500-2.500h6L10 4h9v10H1z" fill="#f4cc80" stroke="#c89848" stroke-width="0.900"/><path d="M10 3v13" stroke="#e01818" stroke-width="2.400"/><path d="M6 13l4 7 4-7z" fill="#e01818"/><circle cx="10" cy="21" r="2" fill="#111"/><rect x="15" y="15" width="7" height="7" fill="#40a030"/></svg>
<svg style="left:1216px;top:814px" width="24" height="24" viewBox="0 0 24 24"><path d="M1 4l1.500-2.500h6L10 4h9v10H1z" fill="#f4cc80" stroke="#c89848" stroke-width="0.900"/><path d="M8 8l4 8 8 3M12 16l-5 5" stroke="#444" stroke-width="1.400" fill="none"/><rect x="15" y="15" width="7" height="7" fill="#40a030"/></svg>
<svg style="left:1243px;top:824px" width="7" height="4" viewBox="0 0 7 4"><path d="M0 0h7L3.500 4z" fill="#111"/></svg>
<div class="a" style="left:1257px;top:814px;width:1px;height:22px;background:#a8a8a8"></div>
<svg style="left:1265px;top:814px" width="24" height="24" viewBox="0 0 24 24"><path d="M3 5.500L6 2.500l6 6 6-6 3 3-6 6 6 6-3 3-6-6-6 6-3-3 6-6z" fill="#e83030" stroke="#a01010" stroke-width="0.800"/></svg>
<svg style="left:1293px;top:814px" width="24" height="24" viewBox="0 0 24 24"><path d="M2 9c1-4 6-5 10-3l2 6c-1 4-6 5-10 3z" fill="#8a8a8a" stroke="#444" stroke-width="0.800"/><path d="M9 8c1-4 6-5 10-3l2 6c-1 4-6 5-10 3z" fill="#a0a0a0" stroke="#444" stroke-width="0.800"/></svg>
<svg style="left:1320px;top:814px" width="24" height="24" viewBox="0 0 24 24"><path d="M1 6l1.500-2.500h6L10 6h10v12H1z" fill="#f4cc80" stroke="#c89848" stroke-width="0.900"/><path d="M1 18l3-8h19l-3 8z" fill="#f8dc9c" stroke="#c89848" stroke-width="0.800"/><path d="M8 12c4-2 8-1 9 3l2-1-2 6-5-3 2-1c-1-2-3-3-6-4z" fill="#e83030"/></svg>
<svg style="left:1349px;top:814px" width="24" height="24" viewBox="0 0 24 24"><text x="8" y="8" font-family="Liberation Sans,sans-serif" font-size="8" font-weight="bold" fill="#333">2</text><text x="6" y="15" font-family="Liberation Sans,sans-serif" font-size="8" font-weight="bold" fill="#333">1</text><text x="8" y="23" font-family="Liberation Sans,sans-serif" font-size="8" font-weight="bold" fill="#333">3</text><path d="M3 6l3-3M16 5l3 3M4 14l-2 4" stroke="#e02020" stroke-width="1.300"/><path d="M1.500 4l3-2v4zM20 9l-3-1 3-3z" fill="#e02020"/></svg>
<svg style="left:1382px;top:815px" width="2" height="24" viewBox="0 0 2 24"><rect x="0" y="0" width="2" height="2" fill="#222"/><rect x="0" y="6" width="2" height="2" fill="#222"/><rect x="0" y="12" width="2" height="2" fill="#222"/><rect x="0" y="18" width="2" height="2" fill="#222"/></svg>
<svg style="left:1390px;top:814px" width="24" height="24" viewBox="0 0 24 24"><path d="M1 5l19-3v15l-19 5z" fill="#5a5aa8" stroke="#22224a" stroke-width="0.900"/><path d="M1 13l19-3.500M10.500 3.500v16" stroke="#d8d8f0" stroke-width="1"/></svg>
<svg style="left:1417px;top:824px" width="7" height="4" viewBox="0 0 7 4"><path d="M0 0h7L3.500 4z" fill="#111"/></svg>
<svg style="left:1428px;top:814px" width="24" height="24" viewBox="0 0 24 24"><path d="M4 21l-2-2 9-9c-1-3 0-6 3-7l3 3 2-2c1 3 0 6-2 7-1.500 0.800-3 0.800-4 0.500z" fill="#c8c8c8" stroke="#555" stroke-width="1"/><path d="M16 3c2-1 4 0 5 2l-3 3-3-3z" fill="#f0f0f0" stroke="#555" stroke-width="0.800"/></svg>
<div class="a" style="left:1458px;top:814px;width:1px;height:22px;background:#a8a8a8"></div>
<svg style="left:1466px;top:814px" width="22" height="24" viewBox="0 0 22 24"><path d="M1.500 12L11 2.500V8h9.500v8H11v5.500z" fill="#6868b0" stroke="#404080" stroke-width="1"/></svg>
<svg style="left:1494px;top:814px" width="22" height="24" viewBox="0 0 22 24"><path d="M20.500 12L11 2.500V8H1.500v8H11v5.500z" fill="#6868b0" stroke="#404080" stroke-width="1"/></svg>
<svg style="left:1522px;top:814px" width="24" height="24" viewBox="0 0 24 24"><path d="M2.500 19L3 8l3.500 3C10 4.500 18 4 22 11c-4-3-9.500-2.500-12 2.500l3.500 3z" fill="#8c8cd0" stroke="#6c6cb4" stroke-width="0.700"/></svg>
<div class="a" style="left:1552px;top:814px;width:1px;height:22px;background:#a8a8a8"></div>
<svg style="left:1563px;top:814px" width="16" height="24" viewBox="0 0 16 24"><rect x="1" y="10" width="13" height="2.600" fill="#4040a0"/></svg>
<svg style="left:1591px;top:814px" width="16" height="24" viewBox="0 0 16 24"><rect x="1" y="10" width="13" height="2.600" fill="#4040a0"/><rect x="6.200" y="4.800" width="2.600" height="13" fill="#4040a0"/></svg>
<svg style="left:1616px;top:814px" width="24" height="24" viewBox="0 0 24 24"><path d="M2.500 19L3 8l3.500 3C10 4.500 18 4 22 11c-4-3-9.500-2.500-12 2.500l3.500 3z" fill="#8c8cd0" stroke="#6c6cb4" stroke-width="0.700"/></svg>
<!-- frame lines -->
<div class="a" style="left:431px;top:78px;width:1px;height:941px;background:#000"></div>
<div class="a" style="left:1916px;top:78px;width:1px;height:942px;background:#000"></div>
<div class="a" style="left:435px;top:1015px;width:1476px;height:1px;background:#000"></div>
<div class="a" style="left:436px;top:846px;width:1474px;height:1px;background:#8c8c8c"></div>
<div class="a" style="left:436px;top:847px;width:1474px;height:1px;background:#fff"></div>
<!-- radio options -->
<svg style="left:451px;top:868px" width="12" height="140" viewBox="0 0 12 140" fill="none">
<g id="rb"><path d="M9.500 1.800A5 5 0 1 0 9.800 10" stroke="#555" stroke-width="1.600"/><path d="M9.500 1.800A5 5 0 0 1 9.800 10" stroke="#fff" stroke-width="1.600"/><circle cx="6" cy="6" r="3.600" fill="#fff"/></g>
<use href="#rb" y="21"/><use href="#rb" y="42"/><use href="#rb" y="63"/><use href="#rb" y="84"/><use href="#rb" y="105"/><use href="#rb" y="126"/>
<circle cx="6" cy="69" r="2.200" fill="#000"/></svg>
<div class="t hm" style="left:478px;top:869px">toggle</div>
<div class="t hm" style="left:478px;top:890px">(un)suppress</div>
<div class="t hm" style="left:478px;top:911px">replace</div>
<div class="t hm" style="left:478px;top:932px">equivalence</div>
<div class="t hm" style="left:478px;top:953px">unsplit</div>
<div class="t hm" style="left:478px;top:974px">edge fillets</div>
<div class="t hm" style="left:478px;top:995px">by feature</div>
<!-- surfs selector -->
<div class="a" style="left:666px;top:886px;width:252px;height:21px;background:#e6e462;border:2px solid #38dce8"></div>
<div class="t hm" style="left:666px;width:252px;text-align:center;top:890px">surfs</div>
<div class="btn3d" style="left:918px;top:886px;width:41px;height:21px"></div>
<svg style="left:932px;top:890px" width="13" height="12" viewBox="0 0 13 12"><rect x="1" y="0.500" width="2.500" height="11" fill="#000"/><path d="M11.500 0.500v11L4 6z" fill="#000"/></svg>
<div class="t hm" style="left:667px;top:932px">geometry stitching:</div>
<div class="btn3d" style="left:940px;top:927px;width:41px;height:21px"></div>
<svg style="left:953px;top:935px" width="12" height="7" viewBox="0 0 12 7"><path d="M0 0h12L6 7z" fill="#000"/></svg>
<div class="btn3d" style="left:980px;top:927px;width:250px;height:21px"></div>
<div class="t hm" style="left:980px;width:250px;text-align:center;top:932px">by component</div>
<div class="btn3d" style="left:666px;top:948px;width:273px;height:21px"></div>
<div class="t hm" style="left:666px;width:273px;text-align:center;top:953px">cleanup tol =</div>
<div class="a" style="left:938px;top:948px;width:233px;height:20px;background:#fff;border-top:2px solid #6e6e6e;border-left:2px solid #6e6e6e"></div>
<div class="t hm" style="left:1040px;width:127px;text-align:right;top:954px;font-size:11.500px">5.000e-02</div>
<div class="a" style="left:681px;top:973px;width:13px;height:13px;background:#fff;border-top:1px solid #666;border-left:1px solid #666;border-right:1px solid #e8e8e8;border-bottom:1px solid #e8e8e8"></div>
<svg style="left:682px;top:974px" width="11" height="11" viewBox="0 0 11 11"><path d="M1.500 4.500l3 3.500 5-7.500" fill="none" stroke="#000" stroke-width="1.800"/></svg>
<div class="t hm" style="left:709px;top:974px">equiv free edges only</div>
<!-- action buttons -->
<div class="a" style="left:1730px;top:865px;width:160px;height:20px;background:#5fbf60;border-top:1px solid #8fdc8f;border-left:1px solid #8fdc8f;border-right:2px solid #3c7a3c;border-bottom:2px solid #3c7a3c"></div>
<div class="t hm" style="left:1730px;width:160px;text-align:center;top:869px">equivalence</div>
<div class="a" style="left:1730px;top:886px;width:160px;height:21px;background:#5fbf60;border-top:1px solid #8fdc8f;border-left:1px solid #8fdc8f;border-right:2px solid #3c7a3c;border-bottom:2px solid #3c7a3c"></div>
<div class="t hm" style="left:1730px;width:160px;text-align:center;top:890px">reject</div>
<div class="a" style="left:1770px;top:991px;width:120px;height:21px;background:#c96466;border:2px solid #7a2c34;border-right-width:3px;border-bottom-width:3px"></div>
<div class="t hm" style="left:1772px;width:120px;text-align:center;top:995px">return</div>
<!-- status bar boxes -->
<div class="a" style="left:1507px;top:1021px;width:95px;height:19px;border-top:2px solid #555;border-left:2px solid #555;background:#f0f0f0"></div>
<div class="a" style="left:1603px;top:1021px;width:95px;height:19px;border-top:2px solid #555;border-left:2px solid #555;background:#f0f0f0"></div>
<div class="a" style="left:1699px;top:1021px;width:110px;height:19px;border-top:2px solid #555;border-left:2px solid #555;background:#f0f0f0"></div>
<div class="a" style="left:1810px;top:1021px;width:110px;height:19px;border-top:2px solid #555;border-left:2px solid #555;background:#f0f0f0"></div>
<div class="t tk" style="left:1606px;top:1026px">inner_extract</div>
<div class="a" style="left:1706px;top:1027px;width:8px;height:8px;background:#48aac8;border:1px solid #123"></div>
<div class="t tk" style="left:1717px;top:1026px">Inner extract mid</div>
</body></html>
